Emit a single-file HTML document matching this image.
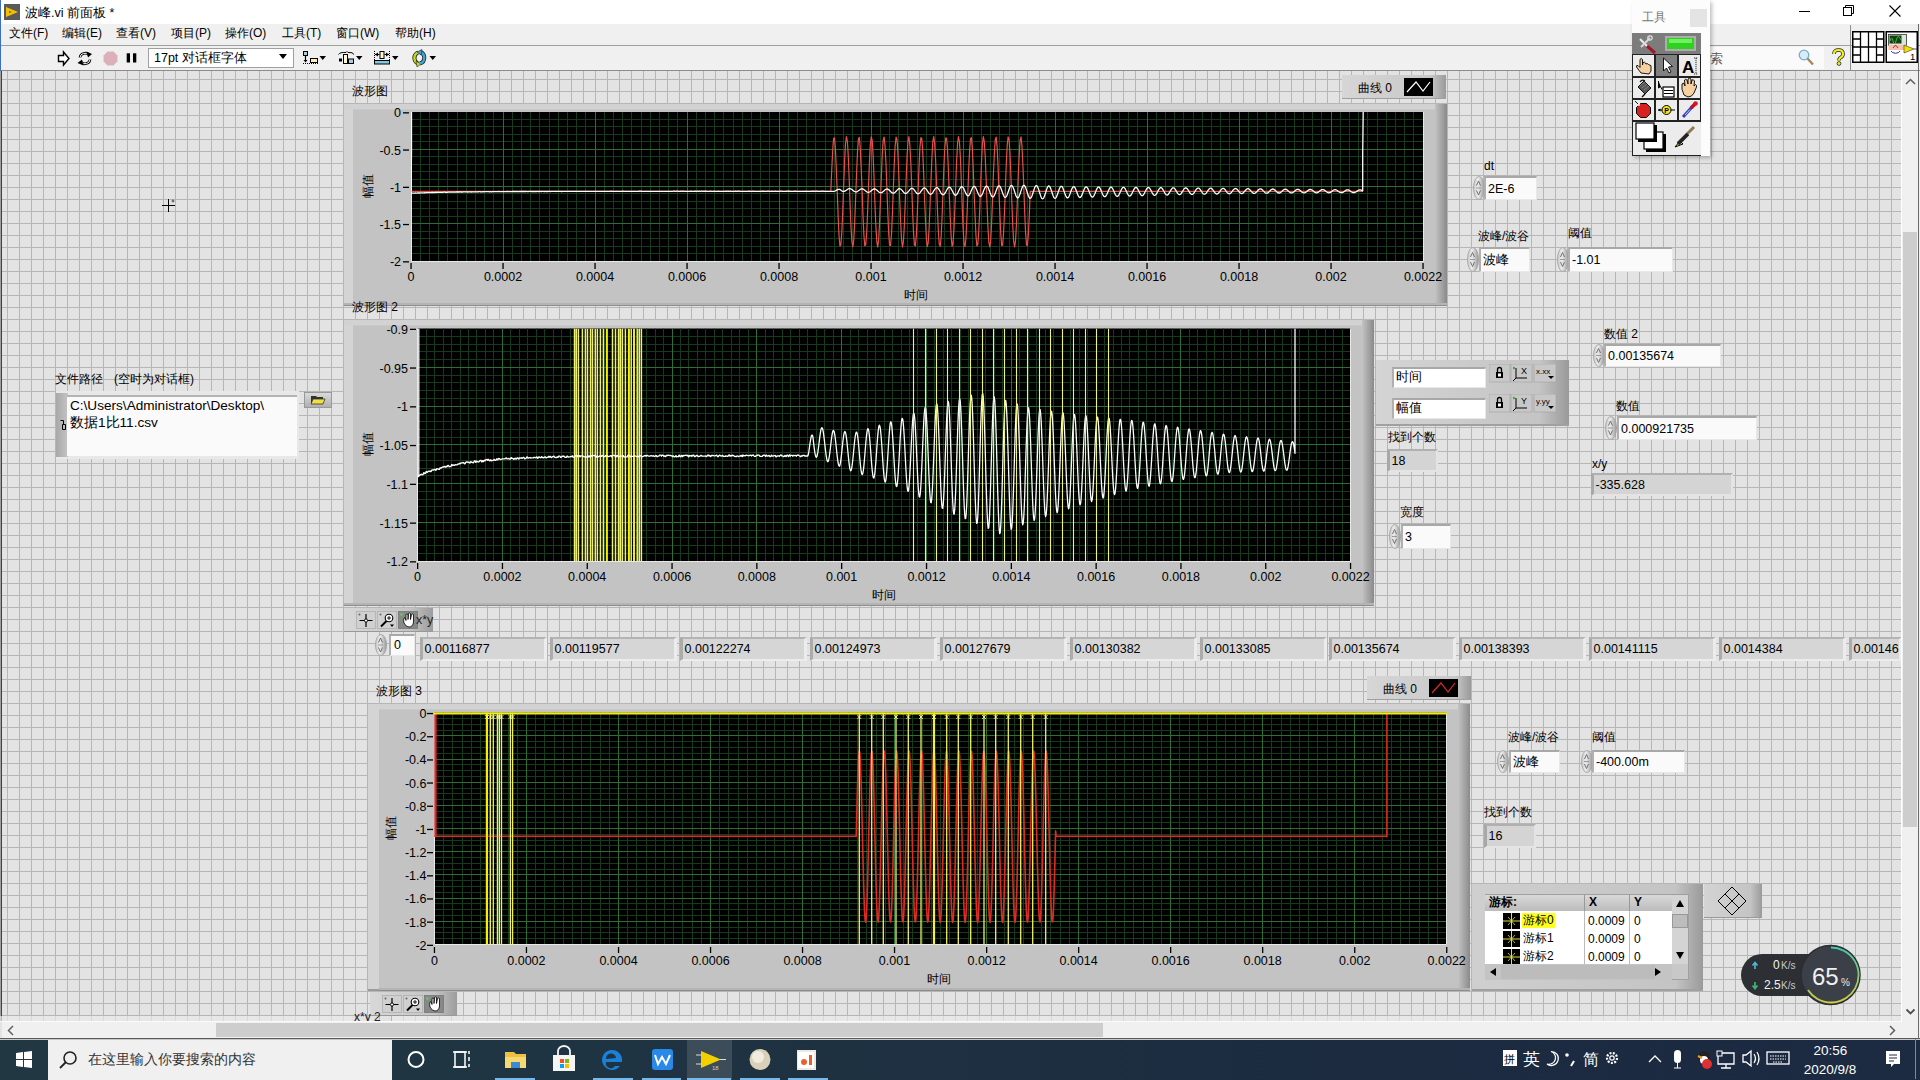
<!DOCTYPE html><html><head><meta charset="utf-8"><style>
*{box-sizing:border-box}
body{margin:0;width:1920px;height:1080px;overflow:hidden;position:relative;font-family:"Liberation Sans",sans-serif;background:#e3e3e3;color:#000}
.a{position:absolute}
.t{position:absolute;white-space:nowrap;font-size:13px;line-height:15px}
svg text{font-family:"Liberation Sans",sans-serif}
.num{position:absolute;background:#fafafa;border-top:2px solid #a8a8a8;border-left:2px solid #b0b0b0;border-right:1px solid #e8e8e8;border-bottom:1px solid #e8e8e8;font-size:12.5px;line-height:20px;padding-left:2px;white-space:nowrap}
.ind{position:absolute;background:#d4d4d4;border-top:2px solid #b0b0b0;border-left:3px solid #a8a8a8;border-right:2px solid #e4e4e4;border-bottom:2px solid #e4e4e4;font-size:12.5px;line-height:20px;padding-left:1.5px;white-space:nowrap}
.spin{position:absolute;width:11px;border-radius:6px/12px;background:linear-gradient(90deg,#b8b8b8,#e8e8e8 45%,#a8a8a8);}
</style></head><body>

<div class="a" style="left:0;top:71px;width:1920px;height:951px;background-color:#e3e3e3;background-image:linear-gradient(90deg,#b6b6b6 1px,transparent 1px),linear-gradient(180deg,#b6b6b6 1px,transparent 1px);background-size:12px 12px;background-position:7px 8px"></div>
<div class="a" style="left:0;top:71px;width:1px;height:951px;background:#a0a0a0"></div><div class="a" style="left:1px;top:71px;width:1px;height:951px;background:#404040"></div>
<div class="a" style="left:0;top:0;width:1920px;height:24px;background:#fff"></div>
<div class="a" style="left:0;top:0;width:1px;height:71px;background:#3b6fc4"></div>
<div class="a" style="left:4px;top:4px;width:16px;height:16px;background:#5a5a5a"></div>
<svg class="a" style="left:4px;top:4px" width="16" height="16"><path d="M2 3L14 8L2 13Z" fill="#f2c200"/><path d="M5 7L8 8L5 9Z" fill="#6a5a00"/></svg>
<div class="t" style="left:25px;top:6px;font-size:12.5px">波峰.vi 前面板 *</div>
<div class="a" style="left:1799px;top:11px;width:11px;height:1px;background:#000"></div>
<svg class="a" style="left:1843px;top:5px" width="12" height="12"><rect x="0.5" y="2.5" width="8" height="8" fill="none" stroke="#000"/><path d="M2.5 2.5V0.5H10.5V8.5H8.5" fill="none" stroke="#000"/></svg>
<svg class="a" style="left:1889px;top:5px" width="12" height="12"><path d="M0.5 0.5L11.5 11.5M11.5 0.5L0.5 11.5" stroke="#000" stroke-width="1.1"/></svg>
<div class="a" style="left:1px;top:24px;width:1919px;height:21px;background:#f0f0f0"></div>
<div class="t" style="left:9px;top:26px;font-size:12px">文件(F)</div>
<div class="t" style="left:62px;top:26px;font-size:12px">编辑(E)</div>
<div class="t" style="left:116px;top:26px;font-size:12px">查看(V)</div>
<div class="t" style="left:171px;top:26px;font-size:12px">项目(P)</div>
<div class="t" style="left:225px;top:26px;font-size:12px">操作(O)</div>
<div class="t" style="left:282px;top:26px;font-size:12px">工具(T)</div>
<div class="t" style="left:336px;top:26px;font-size:12px">窗口(W)</div>
<div class="t" style="left:395px;top:26px;font-size:12px">帮助(H)</div>
<div class="a" style="left:1px;top:45px;width:1919px;height:1px;background:#a0a0a0"></div>
<div class="a" style="left:1px;top:46px;width:1919px;height:24px;background:#f0f0f0"></div>
<div class="a" style="left:1px;top:70px;width:1919px;height:1px;background:#8c8c8c"></div>
<svg class="a" style="left:0;top:46px" width="440" height="24"><path d="M58.5 9.5H63.5V6L69 12.5L63.5 19V15.5H58.5Z" fill="#fff" stroke="#000" stroke-width="1.4" stroke-linejoin="miter"/><path d="M80 11.5 A5 4.5 0 0 1 89 9" fill="none" stroke="#000" stroke-width="2.6"/><path d="M80 11.5 A5 4.5 0 0 1 89 9" fill="none" stroke="#fff" stroke-width="1"/><path d="M86.5 5.5L92 8L88 11.5Z" fill="#000"/><path d="M90 13.5 A5 4.5 0 0 1 81 16" fill="none" stroke="#000" stroke-width="2.6"/><path d="M90 13.5 A5 4.5 0 0 1 81 16" fill="none" stroke="#fff" stroke-width="1"/><path d="M83.5 19.5L77.5 17L82 13.5Z" fill="#000"/><path d="M107.5 5.5H113.5L117.5 9.5V15.5L113.5 19.5H107.5L103.5 15.5V9.5Z" fill="#dcb0b8" stroke="#e4d4d6" stroke-width="1"/><rect x="126.7" y="7.3" width="3.3" height="9.2" fill="#000"/><rect x="133" y="7.3" width="3.3" height="9.2" fill="#000"/><rect x="303.5" y="5.5" width="4" height="4" fill="#a8d0e0" stroke="#000"/><path d="M305.5 10V15" stroke="#000" stroke-width="1.2"/><path d="M303.5 14H307.5L305.5 16.5Z" fill="#000"/><path d="M303 17.5H319" stroke="#000" stroke-dasharray="1 1"/><rect x="310.5" y="12.5" width="7" height="4" fill="#f8f0b0" stroke="#000"/><path d="M319.5 10H326L322.75 14Z" fill="#000"/><path d="M338.5 8.5Q340 6 346 6.5L347 5.5L348 6.5Q353 6 354 8.5" stroke="#000" fill="none"/><rect x="339" y="12.5" width="3" height="3" fill="#000"/><rect x="343.5" y="8.5" width="4" height="9" fill="#fff8d0" stroke="#000"/><rect x="348.5" y="13" width="5" height="4.5" fill="#a8d0e0" stroke="#000"/><path d="M356 10H362.5L359.25 14Z" fill="#000"/><path d="M374.5 5V16M389.5 5V16" stroke="#000" stroke-dasharray="1 1"/><path d="M375 8.5H379.5M384.5 8.5H389" stroke="#000" stroke-width="1.2"/><path d="M375 8.5L378 6.5V10.5Z M389 8.5L386 6.5V10.5Z" fill="#000"/><rect x="380" y="5.5" width="4" height="7" fill="#fff8d0" stroke="#000"/><rect x="374.5" y="14.5" width="15" height="3.5" fill="#80c8e0" stroke="#000"/><path d="M392 10H398.5L395.25 14Z" fill="#000"/><path d="M418 6.5 A6 6 0 0 0 418 17.5" fill="none" stroke="#222" stroke-width="4"/><path d="M418 6.5 A6 6 0 0 0 418 17.5" fill="none" stroke="#c8d820" stroke-width="2.4"/><path d="M416 15L421 18L417 21Z" fill="#c8d820" stroke="#222" stroke-width="0.6"/><path d="M420 6 A6 6 0 0 1 420 17.5" fill="none" stroke="#222" stroke-width="4"/><path d="M420 6 A6 6 0 0 1 420 17.5" fill="none" stroke="#40a8d0" stroke-width="2.4"/><path d="M422 3.5L417 6L421 9Z" fill="#40a8d0" stroke="#222" stroke-width="0.6"/><path d="M429.5 10H436L432.75 14Z" fill="#000"/></svg>
<div class="a" style="left:148px;top:48px;width:146px;height:20px;background:#fff;border:1px solid #a0a0a0"></div>
<div class="t" style="left:154px;top:51px;font-size:12.5px">17pt 对话框字体</div>
<svg class="a" style="left:279px;top:54px" width="9" height="6"><path d="M0 0H8L4 5Z" fill="#000"/></svg>
<div class="a" style="left:1700px;top:47px;width:124px;height:22px;background:#fafafa"></div>
<div class="t" style="left:1710px;top:51px;color:#555">索</div>
<svg class="a" style="left:1796px;top:48px" width="20" height="20"><circle cx="8" cy="7" r="4.8" fill="#d8ecf8" stroke="#7aaccc" stroke-width="1.3"/><path d="M11.5 10.5L17 16.5" stroke="#a08860" stroke-width="2.4"/></svg>
<svg class="a" style="left:1830px;top:48px" width="16" height="19"><path d="M4 6 Q4 2 8.5 2 Q13 2 13 6 Q13 8.5 10 10 Q9 10.8 9 12.5" fill="none" stroke="#222" stroke-width="3.6"/><path d="M4 6 Q4 2 8.5 2 Q13 2 13 6 Q13 8.5 10 10 Q9 10.8 9 12.5" fill="none" stroke="#f0f020" stroke-width="2.2"/><circle cx="9" cy="15.5" r="1.9" fill="#f0f020" stroke="#222" stroke-width="0.8"/></svg>
<div class="a" style="left:1850px;top:25px;width:1px;height:46px;background:#909090"></div>
<svg class="a" style="left:1852px;top:31px" width="68" height="33"><rect x="0.75" y="0.75" width="31" height="30.5" fill="#fff" stroke="#000" stroke-width="1.5"/><path d="M8.5 1V31M16.5 1V31M24.5 1V31M1 16H32M1 8H8.5M1 24H8.5M24.5 8H32M24.5 24H32" stroke="#000" stroke-width="1.3"/><rect x="34.25" y="0.75" width="31" height="30.5" fill="#fff" stroke="#000" stroke-width="1.5"/><rect x="36.5" y="3.5" width="18" height="11" fill="#d8e8d8" stroke="#333" stroke-width="0.8"/><rect x="37.5" y="4.5" width="12" height="8" fill="#1a3a1a"/><path d="M38 10 Q39.5 4 41 10 T44 10 T47 6 T49 9" stroke="#3c3" stroke-width="0.9" fill="none"/><rect x="36.5" y="14" width="18" height="5" fill="#f4c0b0"/><path d="M39 20 A5 4 0 0 0 48 20" stroke="#3030a0" stroke-width="1" fill="none"/><path d="M41 17 L43.5 14 L46 17" stroke="#d02020" stroke-width="1" fill="none"/><path d="M52 14L62 18L52 22Z" fill="#f2e200" stroke="#333" stroke-width="0.6"/><path d="M62 18H65" stroke="#333" stroke-width="0.8"/><text x="58" y="28.5" font-size="9.5" font-family="Liberation Sans">1</text></svg>
<div class="a" style="left:1632px;top:0;width:78px;height:156px;background:#fcfcfc;box-shadow:2px 2px 4px rgba(0,0,0,0.25)"></div>
<div class="t" style="left:1642px;top:9.5px;color:#777;font-size:12px">工具</div>
<div class="a" style="left:1690px;top:9px;width:17px;height:18px;background:#e4e4e4"></div>
<svg class="a" style="left:1632px;top:33px" width="70" height="123"><rect x="0" y="0" width="69" height="123" fill="#222"/><rect x="0" y="0" width="69" height="21" fill="#7c7c7c"/><path d="M8 6L19 17" stroke="#e8e8e8" stroke-width="2.2"/><path d="M18 5L9 14" stroke="#d8d8d8" stroke-width="2"/><circle cx="18" cy="5" r="2.2" fill="none" stroke="#e0e0e0" stroke-width="1.2"/><path d="M15 13L23 20" stroke="#a01828" stroke-width="3.2"/><rect x="33" y="3" width="31" height="15" fill="#a8b0a8"/><rect x="35" y="5" width="27" height="11" fill="#30d020"/><rect x="37" y="6" width="23" height="4" fill="#70f060"/><rect x="1" y="22" width="21" height="21" fill="#ececec"/><rect x="24" y="22" width="21" height="21" fill="#808080"/><rect x="47" y="22" width="21" height="21" fill="#ececec"/><rect x="1" y="45" width="21" height="20" fill="#ececec"/><rect x="24" y="45" width="21" height="20" fill="#ececec"/><rect x="47" y="45" width="21" height="20" fill="#ececec"/><rect x="1" y="67" width="21" height="20" fill="#ececec"/><rect x="24" y="67" width="21" height="20" fill="#ececec"/><rect x="47" y="67" width="21" height="20" fill="#ececec"/><rect x="1" y="89" width="68" height="33" fill="#ececec"/><path d="M9 40 L4.5 34 Q4 32 6 32.5 L8 34.5 L8 26.5 Q9 24.5 10.5 26.5 L10.5 32 L11 29.5 Q12.5 28.5 13.5 30 L14 31 Q15.5 30 16.5 31.5 L17 32 Q18.5 31.5 19 33 L19 38 L17 41 Z" fill="#f6d0a0" stroke="#000" stroke-width="0.9"/><path d="M31.5 25 L31.5 38 L34.5 35 L37 40 L39 39 L36.5 34 L40.5 33.5Z" fill="#fff" stroke="#000" stroke-width="0.9"/><text x="50" y="40" font-size="17" font-family="Liberation Serif" font-weight="bold">A</text><path d="M64 25V41M62 25H66M62 41H66" stroke="#000" stroke-width="0.8" stroke-dasharray="1.2 0.8"/><path d="M6 54L12 48L19 55L13 61Z" fill="#555" stroke="#111" stroke-width="1"/><path d="M8 53L13 49M10 55L15 51M12 57L17 53" stroke="#999" stroke-width="0.7"/><path d="M8 49Q10 46 13 48" stroke="#111" stroke-width="1.2" fill="none"/><path d="M13 61L10 64" stroke="#111" stroke-width="1.5"/><path d="M26.5 48 L26.5 55 L28.5 53.5 L30 56.5" fill="#000" stroke="#000" stroke-width="1"/><rect x="31" y="54" width="11" height="10" fill="#fff" stroke="#000" stroke-width="1.2"/><path d="M32 57.5H41M32 60.5H41" stroke="#000" stroke-width="1.2"/><path d="M52 62 Q49 56 50 51 L51.5 50 L53 53 L52.5 47 Q53.5 45.5 55 47 L56 51 L56 46 Q57.5 44.5 59 46 L59 51 L60 47 Q61.5 46 62.5 48 L62 53 L63.5 51.5 Q65 52 64.5 54 L62 60 Q60 64 56 64Z" fill="#f6d0a0" stroke="#000" stroke-width="0.9"/><path d="M8.5 70.5H14.5L18.5 74.5V80.5L14.5 84.5H8.5L4.5 80.5V74.5Z" fill="#d82020" stroke="#000" stroke-width="1"/><path d="M6 72.5H7.5V71" fill="none" stroke="#fff" stroke-width="0.8"/><path d="M3 68L6 71" stroke="#000" stroke-width="0.9"/><path d="M26 77H43" stroke="#000" stroke-width="1"/><path d="M26 77L28.5 75.5V78.5Z" fill="#000"/><circle cx="34.5" cy="77" r="4.5" fill="#f0e820" stroke="#000" stroke-width="1"/><text x="32.2" y="80" font-size="7" font-weight="bold">P</text><path d="M51 84 L60 74" stroke="#3040c0" stroke-width="3"/><path d="M53 82L58 76.5" stroke="#c8c8f0" stroke-width="1"/><path d="M59 75L63 71" stroke="#c01020" stroke-width="3.5"/><circle cx="63.5" cy="70.5" r="2.3" fill="#d01828"/><rect x="14" y="101" width="20" height="18" fill="#000"/><rect x="12" y="99" width="19" height="17" fill="#fff" stroke="#000" stroke-width="1.2"/><rect x="6" y="92" width="19" height="17" fill="#000"/><rect x="4" y="90" width="18" height="16" fill="#fff" stroke="#000" stroke-width="1.2"/><path d="M46 110 L62 94" stroke="#8a7a50" stroke-width="3"/><path d="M43 114 L48 108 L51 111Z" fill="#e8e840" stroke="#000" stroke-width="1"/><path d="M46 111L56 101" stroke="#222" stroke-width="3.5"/></svg>
<svg class="a" style="left:0;top:0" width="1920" height="1080"><defs><linearGradient id="rbev" x1="0" x2="1"><stop offset="0" stop-color="#c3c3c3"/><stop offset="1" stop-color="#8a8a8a"/></linearGradient></defs><rect x="344" y="104" width="1103" height="202" fill="#c3c3c3"/><rect x="344" y="104" width="9" height="202" fill="#d4d4d4"/><rect x="344" y="104" width="1103" height="5" fill="#d2d2d2"/><rect x="353" y="109" width="1094" height="1" fill="#c9c9c9"/><rect x="1435" y="104" width="12" height="202" fill="url(#rbev)"/><rect x="344" y="303" width="1103" height="2" fill="#b4b4b4"/><rect x="344" y="305" width="1103" height="1" fill="#8e8e8e"/><rect x="411" y="112" width="1012.00" height="149.00" fill="#000"/><path d="M420.5 112V261M429.5 112V261M438.5 112V261M447.5 112V261M457.5 112V261M466.5 112V261M475.5 112V261M484.5 112V261M493.5 112V261M512.5 112V261M521.5 112V261M530.5 112V261M539.5 112V261M549.5 112V261M558.5 112V261M567.5 112V261M576.5 112V261M585.5 112V261M604.5 112V261M613.5 112V261M622.5 112V261M631.5 112V261M641.5 112V261M650.5 112V261M659.5 112V261M668.5 112V261M677.5 112V261M696.5 112V261M705.5 112V261M714.5 112V261M723.5 112V261M733.5 112V261M742.5 112V261M751.5 112V261M760.5 112V261M769.5 112V261M788.5 112V261M797.5 112V261M806.5 112V261M815.5 112V261M825.5 112V261M834.5 112V261M843.5 112V261M852.5 112V261M861.5 112V261M880.5 112V261M889.5 112V261M898.5 112V261M907.5 112V261M917.5 112V261M926.5 112V261M935.5 112V261M944.5 112V261M953.5 112V261M972.5 112V261M981.5 112V261M990.5 112V261M999.5 112V261M1009.5 112V261M1018.5 112V261M1027.5 112V261M1036.5 112V261M1045.5 112V261M1064.5 112V261M1073.5 112V261M1082.5 112V261M1091.5 112V261M1101.5 112V261M1110.5 112V261M1119.5 112V261M1128.5 112V261M1137.5 112V261M1156.5 112V261M1165.5 112V261M1174.5 112V261M1183.5 112V261M1193.5 112V261M1202.5 112V261M1211.5 112V261M1220.5 112V261M1229.5 112V261M1248.5 112V261M1257.5 112V261M1266.5 112V261M1275.5 112V261M1285.5 112V261M1294.5 112V261M1303.5 112V261M1312.5 112V261M1321.5 112V261M1340.5 112V261M1349.5 112V261M1358.5 112V261M1367.5 112V261M1377.5 112V261M1386.5 112V261M1395.5 112V261M1404.5 112V261M1413.5 112V261M411 119.5H1423M411 126.5H1423M411 134.5H1423M411 141.5H1423M411 156.5H1423M411 164.5H1423M411 171.5H1423M411 179.5H1423M411 193.5H1423M411 201.5H1423M411 208.5H1423M411 216.5H1423M411 231.5H1423M411 238.5H1423M411 246.5H1423M411 253.5H1423" stroke="#163a1c" stroke-width="1" fill="none"/><path d="M503.5 112V261M595.5 112V261M687.5 112V261M779.5 112V261M871.5 112V261M963.5 112V261M1055.5 112V261M1147.5 112V261M1239.5 112V261M1331.5 112V261M411 149.5H1423M411 186.5H1423M411 223.5H1423" stroke="#2c6e34" stroke-width="1" fill="none"/><path d="M411.5 112V261.5H1423.5V112" stroke="#e8e8e8" fill="none" stroke-width="1"/><g font-size="12.5px"><text x="411.0" y="281" text-anchor="middle">0</text><rect x="410.4" y="263" width="1.3" height="6" fill="#000"/><text x="503.0" y="281" text-anchor="middle">0.0002</text><rect x="502.4" y="263" width="1.3" height="6" fill="#000"/><text x="595.0" y="281" text-anchor="middle">0.0004</text><rect x="594.4" y="263" width="1.3" height="6" fill="#000"/><text x="687.0" y="281" text-anchor="middle">0.0006</text><rect x="686.4" y="263" width="1.3" height="6" fill="#000"/><text x="779.0" y="281" text-anchor="middle">0.0008</text><rect x="778.4" y="263" width="1.3" height="6" fill="#000"/><text x="871.0" y="281" text-anchor="middle">0.001</text><rect x="870.4" y="263" width="1.3" height="6" fill="#000"/><text x="963.0" y="281" text-anchor="middle">0.0012</text><rect x="962.4" y="263" width="1.3" height="6" fill="#000"/><text x="1055.0" y="281" text-anchor="middle">0.0014</text><rect x="1054.4" y="263" width="1.3" height="6" fill="#000"/><text x="1147.0" y="281" text-anchor="middle">0.0016</text><rect x="1146.4" y="263" width="1.3" height="6" fill="#000"/><text x="1239.0" y="281" text-anchor="middle">0.0018</text><rect x="1238.4" y="263" width="1.3" height="6" fill="#000"/><text x="1331.0" y="281" text-anchor="middle">0.002</text><rect x="1330.4" y="263" width="1.3" height="6" fill="#000"/><text x="1423.0" y="281" text-anchor="middle">0.0022</text><rect x="1422.4" y="263" width="1.3" height="6" fill="#000"/><text x="401" y="117.3" text-anchor="end">0</text><rect x="403" y="112.2" width="6" height="1.3" fill="#000"/><text x="401" y="154.6" text-anchor="end">-0.5</text><rect x="403" y="149.4" width="6" height="1.3" fill="#000"/><text x="401" y="191.8" text-anchor="end">-1</text><rect x="403" y="186.7" width="6" height="1.3" fill="#000"/><text x="401" y="229.1" text-anchor="end">-1.5</text><rect x="403" y="223.9" width="6" height="1.3" fill="#000"/><text x="401" y="266.3" text-anchor="end">-2</text><rect x="403" y="261.2" width="6" height="1.3" fill="#000"/></g><text x="916" y="299" font-size="12" text-anchor="middle">时间</text><text transform="translate(372,186) rotate(-90)" font-size="12" text-anchor="middle">幅值</text><clipPath id="c1"><rect x="411" y="112" width="1012" height="149"/></clipPath><g clip-path="url(#c1)"><polyline points="411.0,191.4 411.9,191.4 412.8,191.4 413.8,191.4 414.7,191.4 415.6,191.4 416.5,191.4 417.4,191.4 418.3,191.4 419.3,191.4 420.2,191.4 421.1,191.4 422.0,191.4 422.9,191.4 423.9,191.4 424.8,191.4 425.7,191.4 426.6,191.4 427.5,191.4 428.5,191.4 429.4,191.4 430.3,191.4 431.2,191.4 432.1,191.4 433.0,191.4 434.0,191.4 434.9,191.4 435.8,191.4 436.7,191.4 437.6,191.4 438.6,191.4 439.5,191.4 440.4,191.4 441.3,191.4 442.2,191.4 443.2,191.4 444.1,191.4 445.0,191.4 445.9,191.4 446.8,191.4 447.7,191.4 448.7,191.4 449.6,191.4 450.5,191.4 451.4,191.4 452.3,191.4 453.3,191.4 454.2,191.4 455.1,191.4 456.0,191.4 456.9,191.4 457.9,191.4 458.8,191.4 459.7,191.4 460.6,191.4 461.5,191.4 462.4,191.4 463.4,191.4 464.3,191.4 465.2,191.4 466.1,191.4 467.0,191.4 468.0,191.4 468.9,191.4 469.8,191.4 470.7,191.4 471.6,191.4 472.6,191.4 473.5,191.4 474.4,191.4 475.3,191.4 476.2,191.4 477.1,191.4 478.1,191.4 479.0,191.4 479.9,191.4 480.8,191.4 481.7,191.4 482.7,191.4 483.6,191.4 484.5,191.4 485.4,191.4 486.3,191.4 487.2,191.4 488.2,191.4 489.1,191.4 490.0,191.4 490.9,191.4 491.8,191.4 492.8,191.4 493.7,191.4 494.6,191.4 495.5,191.4 496.4,191.4 497.4,191.4 498.3,191.4 499.2,191.4 500.1,191.4 501.0,191.4 501.9,191.4 502.9,191.4 503.8,191.4 504.7,191.4 505.6,191.4 506.5,191.4 507.5,191.4 508.4,191.4 509.3,191.4 510.2,191.4 511.1,191.4 512.1,191.4 513.0,191.4 513.9,191.4 514.8,191.4 515.7,191.4 516.6,191.4 517.6,191.4 518.5,191.4 519.4,191.4 520.3,191.4 521.2,191.4 522.2,191.4 523.1,191.4 524.0,191.4 524.9,191.4 525.8,191.4 526.8,191.4 527.7,191.4 528.6,191.4 529.5,191.4 530.4,191.4 531.3,191.4 532.3,191.4 533.2,191.4 534.1,191.4 535.0,191.4 535.9,191.4 536.9,191.4 537.8,191.4 538.7,191.4 539.6,191.4 540.5,191.4 541.5,191.4 542.4,191.4 543.3,191.4 544.2,191.4 545.1,191.4 546.0,191.4 547.0,191.4 547.9,191.4 548.8,191.4 549.7,191.4 550.6,191.4 551.6,191.4 552.5,191.4 553.4,191.4 554.3,191.4 555.2,191.4 556.1,191.4 557.1,191.4 558.0,191.4 558.9,191.4 559.8,191.4 560.7,191.4 561.7,191.4 562.6,191.4 563.5,191.4 564.4,191.4 565.3,191.4 566.3,191.4 567.2,191.4 568.1,191.4 569.0,191.4 569.9,191.4 570.8,191.4 571.8,191.4 572.7,191.4 573.6,191.4 574.5,191.4 575.4,191.4 576.4,191.4 577.3,191.4 578.2,191.4 579.1,191.4 580.0,191.4 581.0,191.4 581.9,191.4 582.8,191.4 583.7,191.4 584.6,191.4 585.5,191.4 586.5,191.4 587.4,191.4 588.3,191.4 589.2,191.4 590.1,191.4 591.1,191.4 592.0,191.4 592.9,191.4 593.8,191.4 594.7,191.4 595.7,191.4 596.6,191.4 597.5,191.4 598.4,191.4 599.3,191.4 600.2,191.4 601.2,191.4 602.1,191.4 603.0,191.4 603.9,191.4 604.8,191.4 605.8,191.4 606.7,191.4 607.6,191.4 608.5,191.4 609.4,191.4 610.4,191.4 611.3,191.4 612.2,191.4 613.1,191.4 614.0,191.4 614.9,191.4 615.9,191.4 616.8,191.4 617.7,191.4 618.6,191.4 619.5,191.4 620.5,191.4 621.4,191.4 622.3,191.4 623.2,191.4 624.1,191.4 625.0,191.4 626.0,191.4 626.9,191.4 627.8,191.4 628.7,191.4 629.6,191.4 630.6,191.4 631.5,191.4 632.4,191.4 633.3,191.4 634.2,191.4 635.2,191.4 636.1,191.4 637.0,191.4 637.9,191.4 638.8,191.4 639.7,191.4 640.7,191.4 641.6,191.4 642.5,191.4 643.4,191.4 644.3,191.4 645.3,191.4 646.2,191.4 647.1,191.4 648.0,191.4 648.9,191.4 649.9,191.4 650.8,191.4 651.7,191.4 652.6,191.4 653.5,191.4 654.4,191.4 655.4,191.4 656.3,191.4 657.2,191.4 658.1,191.4 659.0,191.4 660.0,191.4 660.9,191.4 661.8,191.4 662.7,191.4 663.6,191.4 664.6,191.4 665.5,191.4 666.4,191.4 667.3,191.4 668.2,191.4 669.1,191.4 670.1,191.4 671.0,191.4 671.9,191.4 672.8,191.4 673.7,191.4 674.7,191.4 675.6,191.4 676.5,191.4 677.4,191.4 678.3,191.4 679.3,191.4 680.2,191.4 681.1,191.4 682.0,191.4 682.9,191.4 683.8,191.4 684.8,191.4 685.7,191.4 686.6,191.4 687.5,191.4 688.4,191.4 689.4,191.4 690.3,191.4 691.2,191.4 692.1,191.4 693.0,191.4 693.9,191.4 694.9,191.4 695.8,191.4 696.7,191.4 697.6,191.4 698.5,191.4 699.5,191.4 700.4,191.4 701.3,191.4 702.2,191.4 703.1,191.4 704.1,191.4 705.0,191.4 705.9,191.4 706.8,191.4 707.7,191.4 708.6,191.4 709.6,191.4 710.5,191.4 711.4,191.4 712.3,191.4 713.2,191.4 714.2,191.4 715.1,191.4 716.0,191.4 716.9,191.4 717.8,191.4 718.8,191.4 719.7,191.4 720.6,191.4 721.5,191.4 722.4,191.4 723.3,191.4 724.3,191.4 725.2,191.4 726.1,191.4 727.0,191.4 727.9,191.4 728.9,191.4 729.8,191.4 730.7,191.4 731.6,191.4 732.5,191.4 733.5,191.4 734.4,191.4 735.3,191.4 736.2,191.4 737.1,191.4 738.0,191.4 739.0,191.4 739.9,191.4 740.8,191.4 741.7,191.4 742.6,191.4 743.6,191.4 744.5,191.4 745.4,191.4 746.3,191.4 747.2,191.4 748.2,191.4 749.1,191.4 750.0,191.4 750.9,191.4 751.8,191.4 752.7,191.4 753.7,191.4 754.6,191.4 755.5,191.4 756.4,191.4 757.3,191.4 758.3,191.4 759.2,191.4 760.1,191.4 761.0,191.4 761.9,191.4 762.8,191.4 763.8,191.4 764.7,191.4 765.6,191.4 766.5,191.4 767.4,191.4 768.4,191.4 769.3,191.4 770.2,191.4 771.1,191.4 772.0,191.4 773.0,191.4 773.9,191.4 774.8,191.4 775.7,191.4 776.6,191.4 777.5,191.4 778.5,191.4 779.4,191.4 780.3,191.4 781.2,191.4 782.1,191.4 783.1,191.4 784.0,191.4 784.9,191.4 785.8,191.4 786.7,191.4 787.7,191.4 788.6,191.4 789.5,191.4 790.4,191.4 791.3,191.4 792.2,191.4 793.2,191.4 794.1,191.4 795.0,191.4 795.9,191.4 796.8,191.4 797.8,191.4 798.7,191.4 799.6,191.4 800.5,191.4 801.4,191.4 802.4,191.4 803.3,191.4 804.2,191.4 805.1,191.4 806.0,191.4 806.9,191.4 807.9,191.4 808.8,191.4 809.7,191.4 810.6,191.4 811.5,191.4 812.5,191.4 813.4,191.4 814.3,191.4 815.2,191.4 816.1,191.4 817.1,191.4 818.0,191.4 818.9,191.4 819.8,191.4 820.7,191.4 821.6,191.4 822.6,191.4 823.5,191.4 824.4,191.4 825.3,191.4 826.2,191.4 827.2,191.4 828.1,191.4 829.0,191.4 829.9,191.4 830.8,191.4 831.7,170.8 832.7,150.2 833.6,138.4 834.5,137.8 835.4,148.6 836.3,168.5 837.3,193.3 838.2,217.8 839.1,236.8 840.0,246.2 840.9,244.2 841.9,231.0 842.8,209.6 843.7,184.4 844.6,160.7 845.5,143.6 846.4,136.6 847.4,141.3 848.3,156.7 849.2,179.4 850.1,204.7 851.0,227.3 852.0,242.4 852.9,246.8 853.8,239.5 854.7,222.1 855.6,198.4 856.6,173.2 857.5,151.9 858.4,139.1 859.3,137.3 860.2,147.1 861.1,166.2 862.1,190.8 863.0,215.5 863.9,235.3 864.8,245.8 865.7,244.9 866.7,232.8 867.6,212.0 868.5,186.9 869.4,162.8 870.3,144.9 871.3,136.8 872.2,140.4 873.1,154.7 874.0,176.9 874.9,202.2 875.8,225.3 876.8,241.3 877.7,246.8 878.6,240.7 879.5,224.2 880.4,200.9 881.4,175.6 882.3,153.7 883.2,139.9 884.1,137.0 885.0,145.6 886.0,164.0 886.9,188.3 887.8,213.2 888.7,233.7 889.6,245.2 890.5,245.5 891.5,234.4 892.4,214.3 893.3,189.4 894.2,165.0 895.1,146.3 896.1,137.1 897.0,139.5 897.9,152.9 898.8,174.5 899.7,199.7 900.7,223.3 901.6,240.2 902.5,246.8 903.4,241.8 904.3,226.2 905.2,203.4 906.2,178.0 907.1,155.6 908.0,140.8 908.9,136.7 909.8,144.3 910.8,161.9 911.7,185.7 912.6,210.9 913.5,232.0 914.4,244.6 915.3,246.0 916.3,236.0 917.2,216.6 918.1,192.0 919.0,167.3 919.9,147.7 920.9,137.5 921.8,138.7 922.7,151.1 923.6,172.1 924.5,197.2 925.5,221.2 926.4,238.9 927.3,246.7 928.2,242.8 929.1,228.2 930.0,205.8 931.0,180.5 931.9,157.6 932.8,141.8 933.7,136.6 934.6,143.0 935.6,159.8 936.5,183.2 937.4,208.5 938.3,230.2 939.2,243.8 940.2,246.4 941.1,237.4 942.0,218.8 942.9,194.5 943.8,169.6 944.7,149.3 945.7,138.0 946.6,138.1 947.5,149.5 948.4,169.8 949.3,194.7 950.3,219.0 951.2,237.5 952.1,246.4 953.0,243.7 953.9,230.0 954.9,208.3 955.8,183.0 956.7,159.6 957.6,142.9 958.5,136.6 959.4,141.9 960.4,157.7 961.3,180.7 962.2,206.0 963.1,228.3 964.0,242.9 965.0,246.7 965.9,238.8 966.8,221.0 967.7,197.0 968.6,171.9 969.6,151.0 970.5,138.7 971.4,137.6 972.3,147.9 973.2,167.5 974.1,192.2 975.1,216.8 976.0,236.1 976.9,246.0 977.8,244.5 978.7,231.8 979.7,210.7 980.6,185.5 981.5,161.7 982.4,144.2 983.3,136.7 984.2,140.9 985.2,155.8 986.1,178.2 987.0,203.6 987.9,226.4 988.8,241.9 989.8,246.8 990.7,240.1 991.6,223.1 992.5,199.5 993.4,174.3 994.4,152.7 995.3,139.4 996.2,137.1 997.1,146.4 998.0,165.2 998.9,189.6 999.9,214.5 1000.8,234.5 1001.7,245.5 1002.6,245.2 1003.5,233.5 1004.5,213.0 1005.4,188.1 1006.3,163.8 1007.2,145.5 1008.1,136.9 1009.1,139.9 1010.0,153.9 1010.9,175.8 1011.8,201.1 1012.7,224.4 1013.6,240.8 1014.6,246.8 1015.5,241.2 1016.4,225.2 1017.3,202.0 1018.2,176.7 1019.2,154.6 1020.1,140.3 1021.0,136.8 1021.9,145.0 1022.8,163.0 1023.8,187.1 1024.7,212.2 1025.6,232.9 1026.5,244.9 1027.4,245.7 1028.3,235.1 1029.3,215.4 1030.2,191.4 1031.1,191.4 1032.0,191.4 1032.9,191.4 1033.9,191.4 1034.8,191.4 1035.7,191.4 1036.6,191.4 1037.5,191.4 1038.5,191.4 1039.4,191.4 1040.3,191.4 1041.2,191.4 1042.1,191.4 1043.0,191.4 1044.0,191.4 1044.9,191.4 1045.8,191.4 1046.7,191.4 1047.6,191.4 1048.6,191.4 1049.5,191.4 1050.4,191.4 1051.3,191.4 1052.2,191.4 1053.1,191.4 1054.1,191.4 1055.0,191.4 1055.9,191.4 1056.8,191.4 1057.7,191.4 1058.7,191.4 1059.6,191.4 1060.5,191.4 1061.4,191.4 1062.3,191.4 1063.3,191.4 1064.2,191.4 1065.1,191.4 1066.0,191.4 1066.9,191.4 1067.8,191.4 1068.8,191.4 1069.7,191.4 1070.6,191.4 1071.5,191.4 1072.4,191.4 1073.4,191.4 1074.3,191.4 1075.2,191.4 1076.1,191.4 1077.0,191.4 1078.0,191.4 1078.9,191.4 1079.8,191.4 1080.7,191.4 1081.6,191.4 1082.5,191.4 1083.5,191.4 1084.4,191.4 1085.3,191.4 1086.2,191.4 1087.1,191.4 1088.1,191.4 1089.0,191.4 1089.9,191.4 1090.8,191.4 1091.7,191.4 1092.7,191.4 1093.6,191.4 1094.5,191.4 1095.4,191.4 1096.3,191.4 1097.2,191.4 1098.2,191.4 1099.1,191.4 1100.0,191.4 1100.9,191.4 1101.8,191.4 1102.8,191.4 1103.7,191.4 1104.6,191.4 1105.5,191.4 1106.4,191.4 1107.4,191.4 1108.3,191.4 1109.2,191.4 1110.1,191.4 1111.0,191.4 1111.9,191.4 1112.9,191.4 1113.8,191.4 1114.7,191.4 1115.6,191.4 1116.5,191.4 1117.5,191.4 1118.4,191.4 1119.3,191.4 1120.2,191.4 1121.1,191.4 1122.0,191.4 1123.0,191.4 1123.9,191.4 1124.8,191.4 1125.7,191.4 1126.6,191.4 1127.6,191.4 1128.5,191.4 1129.4,191.4 1130.3,191.4 1131.2,191.4 1132.2,191.4 1133.1,191.4 1134.0,191.4 1134.9,191.4 1135.8,191.4 1136.7,191.4 1137.7,191.4 1138.6,191.4 1139.5,191.4 1140.4,191.4 1141.3,191.4 1142.3,191.4 1143.2,191.4 1144.1,191.4 1145.0,191.4 1145.9,191.4 1146.9,191.4 1147.8,191.4 1148.7,191.4 1149.6,191.4 1150.5,191.4 1151.4,191.4 1152.4,191.4 1153.3,191.4 1154.2,191.4 1155.1,191.4 1156.0,191.4 1157.0,191.4 1157.9,191.4 1158.8,191.4 1159.7,191.4 1160.6,191.4 1161.6,191.4 1162.5,191.4 1163.4,191.4 1164.3,191.4 1165.2,191.4 1166.1,191.4 1167.1,191.4 1168.0,191.4 1168.9,191.4 1169.8,191.4 1170.7,191.4 1171.7,191.4 1172.6,191.4 1173.5,191.4 1174.4,191.4 1175.3,191.4 1176.3,191.4 1177.2,191.4 1178.1,191.4 1179.0,191.4 1179.9,191.4 1180.8,191.4 1181.8,191.4 1182.7,191.4 1183.6,191.4 1184.5,191.4 1185.4,191.4 1186.4,191.4 1187.3,191.4 1188.2,191.4 1189.1,191.4 1190.0,191.4 1190.9,191.4 1191.9,191.4 1192.8,191.4 1193.7,191.4 1194.6,191.4 1195.5,191.4 1196.5,191.4 1197.4,191.4 1198.3,191.4 1199.2,191.4 1200.1,191.4 1201.1,191.4 1202.0,191.4 1202.9,191.4 1203.8,191.4 1204.7,191.4 1205.6,191.4 1206.6,191.4 1207.5,191.4 1208.4,191.4 1209.3,191.4 1210.2,191.4 1211.2,191.4 1212.1,191.4 1213.0,191.4 1213.9,191.4 1214.8,191.4 1215.8,191.4 1216.7,191.4 1217.6,191.4 1218.5,191.4 1219.4,191.4 1220.3,191.4 1221.3,191.4 1222.2,191.4 1223.1,191.4 1224.0,191.4 1224.9,191.4 1225.9,191.4 1226.8,191.4 1227.7,191.4 1228.6,191.4 1229.5,191.4 1230.5,191.4 1231.4,191.4 1232.3,191.4 1233.2,191.4 1234.1,191.4 1235.0,191.4 1236.0,191.4 1236.9,191.4 1237.8,191.4 1238.7,191.4 1239.6,191.4 1240.6,191.4 1241.5,191.4 1242.4,191.4 1243.3,191.4 1244.2,191.4 1245.2,191.4 1246.1,191.4 1247.0,191.4 1247.9,191.4 1248.8,191.4 1249.7,191.4 1250.7,191.4 1251.6,191.4 1252.5,191.4 1253.4,191.4 1254.3,191.4 1255.3,191.4 1256.2,191.4 1257.1,191.4 1258.0,191.4 1258.9,191.4 1259.8,191.4 1260.8,191.4 1261.7,191.4 1262.6,191.4 1263.5,191.4 1264.4,191.4 1265.4,191.4 1266.3,191.4 1267.2,191.4 1268.1,191.4 1269.0,191.4 1270.0,191.4 1270.9,191.4 1271.8,191.4 1272.7,191.4 1273.6,191.4 1274.5,191.4 1275.5,191.4 1276.4,191.4 1277.3,191.4 1278.2,191.4 1279.1,191.4 1280.1,191.4 1281.0,191.4 1281.9,191.4 1282.8,191.4 1283.7,191.4 1284.7,191.4 1285.6,191.4 1286.5,191.4 1287.4,191.4 1288.3,191.4 1289.2,191.4 1290.2,191.4 1291.1,191.4 1292.0,191.4 1292.9,191.4 1293.8,191.4 1294.8,191.4 1295.7,191.4 1296.6,191.4 1297.5,191.4 1298.4,191.4 1299.4,191.4 1300.3,191.4 1301.2,191.4 1302.1,191.4 1303.0,191.4 1303.9,191.4 1304.9,191.4 1305.8,191.4 1306.7,191.4 1307.6,191.4 1308.5,191.4 1309.5,191.4 1310.4,191.4 1311.3,191.4 1312.2,191.4 1313.1,191.4 1314.1,191.4 1315.0,191.4 1315.9,191.4 1316.8,191.4 1317.7,191.4 1318.6,191.4 1319.6,191.4 1320.5,191.4 1321.4,191.4 1322.3,191.4 1323.2,191.4 1324.2,191.4 1325.1,191.4 1326.0,191.4 1326.9,191.4 1327.8,191.4 1328.7,191.4 1329.7,191.4 1330.6,191.4 1331.5,191.4 1332.4,191.4 1333.3,191.4 1334.3,191.4 1335.2,191.4 1336.1,191.4 1337.0,191.4 1337.9,191.4 1338.9,191.4 1339.8,191.4 1340.7,191.4 1341.6,191.4 1342.5,191.4 1343.4,191.4 1344.4,191.4 1345.3,191.4 1346.2,191.4 1347.1,191.4 1348.0,191.4 1349.0,191.4 1349.9,191.4 1350.8,191.4 1351.7,191.4 1352.6,191.4 1353.6,191.4 1354.5,191.4 1355.4,191.4 1356.3,191.4 1357.2,191.4 1358.1,191.4 1359.1,191.4 1360.0,191.4 1360.9,191.4 1361.8,191.4 1362.7,191.4" fill="none" stroke="#e8504a" stroke-width="1.2" stroke-linejoin="round" /><polyline points="411.5,112.0 411.5,152.0 411.0,193.3 411.5,193.3 412.0,193.2 412.5,193.2 413.0,193.2 413.5,193.2 414.0,193.1 414.5,193.1 415.0,193.1 415.5,193.0 416.0,193.1 416.5,193.1 417.0,193.1 417.5,192.9 418.0,192.9 418.5,193.0 419.0,193.0 419.5,193.0 420.0,193.0 420.5,192.8 421.0,192.8 421.5,192.9 422.0,192.9 422.5,192.8 423.0,192.8 423.5,192.8 424.0,192.8 424.5,192.7 425.0,192.8 425.5,192.8 426.0,192.7 426.5,192.7 427.0,192.6 427.5,192.6 428.0,192.7 428.5,192.6 429.0,192.6 429.5,192.6 430.0,192.6 430.5,192.7 431.0,192.7 431.5,192.5 432.0,192.5 432.5,192.5 433.0,192.5 433.5,192.6 434.0,192.6 434.5,192.6 435.0,192.4 435.5,192.4 436.0,192.5 436.5,192.5 437.0,192.4 437.5,192.4 438.0,192.4 438.5,192.3 439.0,192.4 439.5,192.4 440.0,192.3 440.5,192.4 441.0,192.4 441.5,192.3 442.0,192.3 442.5,192.3 443.0,192.3 443.5,192.2 444.0,192.2 444.5,192.2 445.0,192.2 445.5,192.3 446.0,192.3 446.5,192.3 447.0,192.3 447.5,192.3 448.0,192.1 448.5,192.1 449.0,192.2 449.5,192.2 450.0,192.2 450.5,192.2 451.0,192.2 451.5,192.2 452.0,192.2 452.5,192.2 453.0,192.2 453.5,192.2 454.0,192.1 454.5,192.1 455.0,192.1 455.5,192.1 456.0,192.1 456.5,192.0 457.0,192.0 457.5,192.0 458.0,192.0 458.5,192.0 459.0,192.0 459.5,192.0 460.0,191.9 460.5,191.9 461.0,192.0 461.5,192.0 462.0,192.1 462.5,192.1 463.0,191.9 463.5,191.9 464.0,191.9 464.5,191.9 465.0,191.9 465.5,191.9 466.0,191.9 466.5,191.9 467.0,191.9 467.5,192.0 468.0,192.0 468.5,191.9 469.0,191.8 469.5,191.9 470.0,191.9 470.5,191.9 471.0,192.0 471.5,192.0 472.0,191.8 472.5,191.8 473.0,191.8 473.5,191.8 473.9,191.9 474.4,191.9 474.9,191.8 475.4,191.8 475.9,191.8 476.4,191.9 476.9,191.9 477.4,191.8 477.9,191.8 478.4,191.8 478.9,191.7 479.4,191.7 479.9,191.7 480.4,191.9 480.9,191.8 481.4,191.8 481.9,191.8 482.4,191.8 482.9,191.7 483.4,191.7 483.9,191.8 484.4,191.8 484.9,191.7 485.4,191.7 485.9,191.6 486.4,191.6 486.9,191.7 487.4,191.6 487.9,191.6 488.4,191.7 488.9,191.7 489.4,191.8 489.9,191.8 490.4,191.7 490.9,191.7 491.4,191.8 491.9,191.8 492.4,191.7 492.9,191.7 493.4,191.7 493.9,191.6 494.4,191.6 494.9,191.7 495.4,191.7 495.9,191.7 496.4,191.7 496.9,191.6 497.4,191.6 497.9,191.7 498.4,191.6 498.9,191.5 499.4,191.6 499.9,191.6 500.4,191.6 500.9,191.6 501.4,191.6 501.9,191.6 502.4,191.6 502.9,191.6 503.4,191.6 503.9,191.6 504.4,191.6 504.9,191.6 505.4,191.6 505.9,191.6 506.4,191.6 506.9,191.5 507.4,191.5 507.9,191.6 508.4,191.6 508.9,191.6 509.4,191.6 509.9,191.5 510.4,191.6 510.9,191.6 511.4,191.6 511.9,191.6 512.4,191.5 512.9,191.5 513.4,191.5 513.9,191.5 514.4,191.5 514.9,191.5 515.4,191.6 515.9,191.5 516.4,191.5 516.9,191.5 517.4,191.5 517.9,191.6 518.4,191.6 518.9,191.5 519.4,191.5 519.9,191.5 520.4,191.5 520.9,191.6 521.4,191.5 521.9,191.5 522.4,191.5 522.9,191.5 523.4,191.5 523.9,191.5 524.4,191.5 524.9,191.5 525.4,191.5 525.9,191.5 526.4,191.4 526.9,191.4 527.4,191.6 527.9,191.6 528.4,191.6 528.9,191.4 529.4,191.4 529.9,191.4 530.4,191.4 530.9,191.5 531.4,191.5 531.9,191.5 532.4,191.5 532.9,191.4 533.4,191.5 533.9,191.5 534.4,191.5 534.9,191.5 535.4,191.5 535.9,191.5 536.4,191.5 536.9,191.5 537.4,191.4 537.9,191.4 538.4,191.5 538.9,191.5 539.4,191.5 539.9,191.4 540.4,191.4 540.9,191.5 541.4,191.5 541.9,191.4 542.4,191.4 542.9,191.4 543.4,191.4 543.9,191.5 544.4,191.5 544.9,191.5 545.4,191.4 545.9,191.4 546.4,191.5 546.9,191.5 547.4,191.5 547.9,191.5 548.4,191.4 548.9,191.4 549.4,191.4 549.9,191.4 550.4,191.5 550.9,191.4 551.4,191.4 551.9,191.4 552.4,191.4 552.9,191.3 553.4,191.3 553.9,191.4 554.4,191.4 554.9,191.3 555.4,191.3 555.9,191.5 556.4,191.4 556.9,191.4 557.4,191.4 557.9,191.4 558.4,191.3 558.9,191.3 559.4,191.4 559.9,191.4 560.4,191.4 560.9,191.4 561.4,191.5 561.9,191.5 562.4,191.4 562.9,191.4 563.4,191.4 563.9,191.3 564.4,191.3 564.9,191.3 565.4,191.3 565.9,191.4 566.4,191.4 566.9,191.4 567.4,191.4 567.9,191.3 568.4,191.4 568.9,191.4 569.4,191.3 569.9,191.3 570.4,191.4 570.9,191.4 571.4,191.4 571.9,191.4 572.4,191.4 572.9,191.4 573.4,191.3 573.9,191.4 574.4,191.4 574.9,191.4 575.4,191.4 575.9,191.4 576.4,191.4 576.9,191.4 577.4,191.4 577.9,191.4 578.4,191.4 578.9,191.3 579.4,191.4 579.9,191.4 580.4,191.4 580.9,191.4 581.4,191.3 581.9,191.3 582.4,191.3 582.9,191.3 583.4,191.3 583.9,191.3 584.4,191.4 584.9,191.4 585.4,191.3 585.9,191.3 586.4,191.3 586.9,191.4 587.4,191.4 587.9,191.3 588.4,191.3 588.9,191.3 589.4,191.3 589.9,191.3 590.4,191.3 590.9,191.3 591.4,191.4 591.9,191.4 592.4,191.4 592.9,191.4 593.4,191.4 593.9,191.4 594.4,191.4 594.9,191.4 595.4,191.3 595.9,191.3 596.4,191.4 596.9,191.3 597.4,191.3 597.9,191.4 598.4,191.4 598.8,191.3 599.3,191.3 599.8,191.3 600.3,191.3 600.8,191.3 601.3,191.3 601.8,191.3 602.3,191.3 602.8,191.3 603.3,191.3 603.8,191.3 604.3,191.4 604.8,191.4 605.3,191.3 605.8,191.3 606.3,191.4 606.8,191.4 607.3,191.4 607.8,191.4 608.3,191.3 608.8,191.3 609.3,191.3 609.8,191.3 610.3,191.3 610.8,191.2 611.3,191.2 611.8,191.3 612.3,191.3 612.8,191.4 613.3,191.4 613.8,191.4 614.3,191.3 614.8,191.3 615.3,191.3 615.8,191.3 616.3,191.3 616.8,191.3 617.3,191.3 617.8,191.3 618.3,191.4 618.8,191.4 619.3,191.3 619.8,191.3 620.3,191.3 620.8,191.4 621.3,191.4 621.8,191.3 622.3,191.3 622.8,191.2 623.3,191.2 623.8,191.3 624.3,191.3 624.8,191.3 625.3,191.3 625.8,191.4 626.3,191.3 626.8,191.3 627.3,191.3 627.8,191.3 628.3,191.4 628.8,191.4 629.3,191.4 629.8,191.4 630.3,191.4 630.8,191.4 631.3,191.3 631.8,191.3 632.3,191.3 632.8,191.3 633.3,191.3 633.8,191.3 634.3,191.3 634.8,191.4 635.3,191.4 635.8,191.4 636.3,191.4 636.8,191.4 637.3,191.4 637.8,191.4 638.3,191.4 638.8,191.4 639.3,191.2 639.8,191.2 640.3,191.2 640.8,191.2 641.3,191.4 641.8,191.4 642.3,191.3 642.8,191.3 643.3,191.3 643.8,191.3 644.3,191.3 644.8,191.3 645.3,191.3 645.8,191.3 646.3,191.3 646.8,191.3 647.3,191.3 647.8,191.3 648.3,191.3 648.8,191.4 649.3,191.3 649.8,191.3 650.3,191.4 650.8,191.4 651.3,191.3 651.8,191.3 652.3,191.3 652.8,191.3 653.3,191.3 653.8,191.3 654.3,191.4 654.8,191.4 655.3,191.4 655.8,191.3 656.3,191.3 656.8,191.3 657.3,191.3 657.8,191.3 658.3,191.3 658.8,191.3 659.3,191.3 659.8,191.3 660.3,191.3 660.8,191.3 661.3,191.3 661.8,191.3 662.3,191.3 662.8,191.3 663.3,191.3 663.8,191.3 664.3,191.3 664.8,191.3 665.3,191.3 665.8,191.3 666.3,191.3 666.8,191.3 667.3,191.3 667.8,191.3 668.3,191.3 668.8,191.3 669.3,191.3 669.8,191.3 670.3,191.3 670.8,191.4 671.3,191.4 671.8,191.3 672.3,191.3 672.8,191.3 673.3,191.2 673.8,191.2 674.3,191.2 674.8,191.2 675.3,191.3 675.8,191.3 676.3,191.2 676.8,191.2 677.3,191.2 677.8,191.2 678.3,191.3 678.8,191.3 679.3,191.3 679.8,191.4 680.3,191.4 680.8,191.2 681.3,191.2 681.8,191.3 682.3,191.3 682.8,191.2 683.3,191.2 683.8,191.2 684.3,191.3 684.8,191.3 685.3,191.3 685.8,191.3 686.3,191.3 686.8,191.3 687.3,191.4 687.8,191.4 688.3,191.3 688.8,191.3 689.3,191.4 689.8,191.4 690.3,191.4 690.8,191.2 691.3,191.2 691.8,191.4 692.3,191.4 692.8,191.4 693.3,191.4 693.8,191.4 694.3,191.4 694.8,191.2 695.3,191.2 695.8,191.4 696.3,191.4 696.8,191.4 697.3,191.2 697.8,191.2 698.3,191.4 698.8,191.4 699.3,191.2 699.8,191.2 700.3,191.3 700.8,191.3 701.3,191.2 701.8,191.2 702.3,191.2 702.8,191.3 703.3,191.3 703.8,191.2 704.3,191.2 704.8,191.4 705.3,191.4 705.8,191.2 706.3,191.2 706.8,191.3 707.3,191.3 707.8,191.3 708.3,191.4 708.8,191.4 709.3,191.3 709.8,191.3 710.3,191.2 710.8,191.2 711.3,191.4 711.8,191.4 712.3,191.3 712.8,191.3 713.3,191.3 713.8,191.2 714.3,191.2 714.8,191.3 715.3,191.3 715.8,191.4 716.3,191.4 716.8,191.3 717.3,191.3 717.8,191.3 718.3,191.3 718.8,191.2 719.3,191.3 719.8,191.3 720.3,191.3 720.8,191.3 721.3,191.3 721.8,191.3 722.3,191.3 722.8,191.3 723.3,191.3 723.8,191.3 724.2,191.4 724.7,191.3 725.2,191.3 725.7,191.2 726.2,191.2 726.7,191.3 727.2,191.3 727.7,191.2 728.2,191.2 728.7,191.4 729.2,191.4 729.7,191.3 730.2,191.2 730.7,191.2 731.2,191.3 731.7,191.3 732.2,191.3 732.7,191.3 733.2,191.3 733.7,191.3 734.2,191.3 734.7,191.3 735.2,191.2 735.7,191.2 736.2,191.4 736.7,191.4 737.2,191.4 737.7,191.2 738.2,191.2 738.7,191.2 739.2,191.2 739.7,191.3 740.2,191.3 740.7,191.3 741.2,191.3 741.7,191.3 742.2,191.3 742.7,191.3 743.2,191.3 743.7,191.3 744.2,191.3 744.7,191.3 745.2,191.3 745.7,191.3 746.2,191.3 746.7,191.3 747.2,191.3 747.7,191.3 748.2,191.3 748.7,191.2 749.2,191.2 749.7,191.3 750.2,191.3 750.7,191.3 751.2,191.3 751.7,191.3 752.2,191.3 752.7,191.2 753.2,191.2 753.7,191.3 754.2,191.3 754.7,191.3 755.2,191.3 755.7,191.3 756.2,191.4 756.7,191.4 757.2,191.3 757.7,191.3 758.2,191.3 758.7,191.3 759.2,191.4 759.7,191.3 760.2,191.3 760.7,191.3 761.2,191.3 761.7,191.2 762.2,191.2 762.7,191.4 763.2,191.4 763.7,191.2 764.2,191.2 764.7,191.3 765.2,191.3 765.7,191.3 766.2,191.3 766.7,191.3 767.2,191.2 767.7,191.2 768.2,191.2 768.7,191.2 769.2,191.3 769.7,191.3 770.2,191.3 770.7,191.3 771.2,191.3 771.7,191.2 772.2,191.2 772.7,191.3 773.2,191.3 773.7,191.3 774.2,191.3 774.7,191.2 775.2,191.2 775.7,191.3 776.2,191.3 776.7,191.3 777.2,191.3 777.7,191.3 778.2,191.3 778.7,191.3 779.2,191.3 779.7,191.3 780.2,191.2 780.7,191.2 781.2,191.2 781.7,191.2 782.2,191.3 782.7,191.3 783.2,191.3 783.7,191.3 784.2,191.3 784.7,191.3 785.2,191.3 785.7,191.3 786.2,191.3 786.7,191.2 787.2,191.2 787.7,191.2 788.2,191.2 788.7,191.3 789.2,191.2 789.7,191.2 790.2,191.3 790.7,191.3 791.2,191.3 791.7,191.3 792.2,191.3 792.7,191.3 793.2,191.4 793.7,191.4 794.2,191.4 794.7,191.2 795.2,191.2 795.7,191.3 796.2,191.3 796.7,191.3 797.2,191.3 797.7,191.3 798.2,191.3 798.7,191.3 799.2,191.3 799.7,191.4 800.2,191.3 800.7,191.3 801.2,191.3 801.7,191.3 802.2,191.3 802.7,191.3 803.2,191.3 803.7,191.3 804.2,191.3 804.7,191.3 805.2,191.2 805.7,191.3 806.2,191.3 806.7,191.3 807.2,191.3 807.7,191.4 808.2,191.4 808.7,191.3 809.2,191.3 809.7,191.3 810.2,191.3 810.7,191.4 811.2,191.4 811.7,191.2 812.2,191.2 812.7,191.2 813.2,191.4 813.7,191.4 814.2,191.2 814.7,191.2 815.2,191.3 815.7,191.3 816.2,191.2 816.7,191.2 817.2,191.2 817.7,191.3 818.2,191.3 818.7,191.3 819.2,191.3 819.7,191.3 820.2,191.3 820.7,191.2 821.2,191.2 821.7,191.3 822.2,191.3 822.7,191.2 823.2,191.2 823.7,191.2 824.2,191.3 824.7,191.3 825.2,191.3 825.7,191.3 826.2,191.4 826.7,191.4 827.2,191.3 827.7,191.3 828.2,191.3 828.7,191.3 829.2,191.3 829.7,191.3 830.2,191.3 830.7,191.3 831.2,191.3 831.7,191.3 832.2,191.3 832.7,191.3 833.2,191.3 833.7,191.3 834.2,191.3 834.7,191.2 835.2,191.0 835.7,190.7 836.2,190.4 836.7,190.1 837.2,189.8 837.7,189.6 838.2,189.4 838.7,189.3 839.2,189.3 839.7,189.4 840.2,189.7 840.7,190.1 841.2,190.5 841.7,190.8 842.2,191.1 842.7,191.3 843.2,191.4 843.7,191.4 844.2,191.4 844.7,191.2 845.2,190.9 845.7,190.6 846.2,190.3 846.7,189.9 847.2,189.6 847.7,189.2 848.2,189.0 848.7,188.7 849.2,188.6 849.6,188.6 850.1,188.6 850.6,188.8 851.1,189.0 851.6,189.3 852.1,189.7 852.6,190.1 853.1,190.5 853.6,190.9 854.1,191.2 854.6,191.5 855.1,191.7 855.6,191.8 856.1,191.8 856.6,191.8 857.1,191.6 857.6,191.3 858.1,191.0 858.6,190.6 859.1,190.3 859.6,189.9 860.1,189.5 860.6,189.2 861.1,189.0 861.6,188.9 862.1,188.8 862.6,188.9 863.1,189.1 863.6,189.3 864.1,189.7 864.6,190.0 865.1,190.5 865.6,190.9 866.1,191.3 866.6,191.7 867.1,192.0 867.6,192.2 868.1,192.3 868.6,192.3 869.1,192.2 869.6,192.0 870.1,191.7 870.6,191.3 871.1,190.9 871.6,190.5 872.1,190.1 872.6,189.7 873.1,189.4 873.6,189.1 874.1,189.0 874.6,189.0 875.1,189.0 875.6,189.2 876.1,189.5 876.6,189.9 877.1,190.3 877.6,190.8 878.1,191.2 878.6,191.7 879.1,192.1 879.6,192.4 880.1,192.6 880.6,192.7 881.1,192.7 881.6,192.6 882.1,192.4 882.6,192.0 883.1,191.6 883.6,191.2 884.1,190.7 884.6,190.3 885.1,189.8 885.6,189.5 886.1,189.2 886.6,189.1 887.1,189.0 887.6,189.1 888.1,189.3 888.6,189.6 889.1,190.0 889.6,190.5 890.1,191.0 890.6,191.5 891.1,192.0 891.6,192.4 892.1,192.8 892.6,193.0 893.1,193.1 893.6,193.1 894.1,192.9 894.6,192.6 895.1,192.2 895.6,191.7 896.1,191.2 896.6,190.7 897.1,190.1 897.6,189.6 898.1,189.2 898.6,188.9 899.1,188.7 899.6,188.7 900.1,188.8 900.6,189.0 901.1,189.4 901.6,189.9 902.1,190.4 902.6,191.0 903.1,191.6 903.6,192.2 904.1,192.7 904.6,193.1 905.1,193.3 905.6,193.4 906.1,193.4 906.6,193.2 907.1,192.8 907.6,192.4 908.1,191.8 908.6,191.2 909.1,190.6 909.6,189.9 910.1,189.4 910.6,188.9 911.1,188.6 911.6,188.4 912.1,188.4 912.6,188.5 913.1,188.8 913.6,189.2 914.1,189.8 914.6,190.4 915.1,191.1 915.6,191.8 916.1,192.4 916.6,193.0 917.1,193.4 917.6,193.7 918.1,193.8 918.6,193.7 919.1,193.5 919.6,193.1 920.1,192.6 920.6,191.9 921.1,191.2 921.6,190.5 922.1,189.8 922.6,189.1 923.1,188.6 923.6,188.2 924.1,188.0 924.6,188.0 925.1,188.2 925.6,188.6 926.1,189.1 926.6,189.7 927.1,190.5 927.6,191.3 928.1,192.0 928.6,192.7 929.1,193.4 929.6,193.8 930.1,194.1 930.6,194.3 931.1,194.2 931.6,193.9 932.1,193.4 932.6,192.8 933.1,192.0 933.6,191.2 934.1,190.4 934.6,189.6 935.1,188.9 935.6,188.3 936.1,187.9 936.6,187.7 937.1,187.7 937.6,187.9 938.1,188.4 938.6,189.0 939.1,189.7 939.6,190.5 940.1,191.4 940.6,192.3 941.1,193.1 941.6,193.8 942.1,194.3 942.6,194.6 943.1,194.7 943.6,194.6 944.1,194.3 944.6,193.7 945.1,193.0 945.6,192.1 946.1,191.2 946.6,190.2 947.1,189.3 947.6,188.5 948.1,187.9 948.6,187.4 949.1,187.2 949.6,187.2 950.1,187.5 950.6,188.0 951.1,188.7 951.6,189.6 952.1,190.5 952.6,191.5 953.1,192.5 953.6,193.5 954.1,194.2 954.6,194.8 955.1,195.2 955.6,195.3 956.1,195.1 956.6,194.7 957.1,194.0 957.6,193.2 958.1,192.2 958.6,191.1 959.1,190.0 959.6,189.0 960.1,188.1 960.6,187.4 961.1,186.9 961.6,186.6 962.1,186.7 962.6,187.0 963.1,187.6 963.6,188.4 964.1,189.4 964.6,190.6 965.1,191.7 965.6,192.8 966.1,193.9 966.6,194.7 967.1,195.4 967.6,195.7 968.1,195.8 968.6,195.6 969.1,195.1 969.6,194.3 970.1,193.4 970.6,192.3 971.1,191.1 971.6,189.9 972.1,188.7 972.6,187.8 973.1,187.0 973.6,186.5 974.1,186.3 974.5,186.4 975.0,186.8 975.5,187.5 976.0,188.4 976.5,189.5 977.0,190.7 977.5,192.0 978.0,193.2 978.5,194.3 979.0,195.3 979.5,195.9 980.0,196.3 980.5,196.4 981.0,196.1 981.5,195.5 982.0,194.7 982.5,193.6 983.0,192.4 983.5,191.1 984.0,189.8 984.5,188.6 985.0,187.6 985.5,186.8 986.0,186.3 986.5,186.1 987.0,186.2 987.5,186.7 988.0,187.4 988.5,188.4 989.0,189.7 989.5,191.0 990.0,192.4 990.5,193.7 991.0,194.8 991.5,195.8 992.0,196.5 992.5,196.9 993.0,196.9 993.5,196.6 994.0,195.9 994.5,195.0 995.0,193.8 995.5,192.5 996.0,191.1 996.5,189.7 997.0,188.4 997.5,187.4 998.0,186.5 998.5,186.0 999.0,185.8 999.5,186.0 1000.0,186.5 1000.5,187.3 1001.0,188.4 1001.5,189.7 1002.0,191.2 1002.5,192.6 1003.0,194.0 1003.5,195.3 1004.0,196.3 1004.5,197.0 1005.0,197.3 1005.5,197.3 1006.0,197.0 1006.5,196.2 1007.0,195.2 1007.5,193.9 1008.0,192.5 1008.5,191.0 1009.0,189.5 1009.5,188.2 1010.0,187.0 1010.5,186.2 1011.0,185.6 1011.5,185.5 1012.0,185.7 1012.5,186.3 1013.0,187.2 1013.5,188.4 1014.0,189.8 1014.5,191.3 1015.0,192.9 1015.5,194.4 1016.0,195.7 1016.5,196.7 1017.0,197.4 1017.5,197.8 1018.0,197.8 1018.5,197.3 1019.0,196.5 1019.5,195.4 1020.0,194.0 1020.5,192.5 1021.0,190.9 1021.5,189.4 1022.0,188.0 1022.5,186.8 1023.0,185.9 1023.5,185.4 1024.0,185.3 1024.5,185.6 1025.0,186.3 1025.5,187.3 1026.0,188.6 1026.5,190.1 1027.0,191.7 1027.5,193.3 1028.0,194.8 1028.5,196.2 1029.0,197.2 1029.5,198.0 1030.0,198.3 1030.5,198.2 1031.0,197.7 1031.5,196.9 1032.0,195.7 1032.5,194.3 1033.0,192.8 1033.5,191.2 1034.0,189.6 1034.5,188.2 1035.0,187.0 1035.5,186.2 1036.0,185.7 1036.5,185.6 1037.0,186.0 1037.5,186.7 1038.0,187.7 1038.5,189.1 1039.0,190.6 1039.5,192.3 1040.0,193.9 1040.5,195.4 1041.0,196.7 1041.5,197.8 1042.0,198.5 1042.5,198.8 1043.0,198.7 1043.5,198.1 1044.0,197.2 1044.5,196.0 1045.0,194.5 1045.5,193.0 1046.0,191.3 1046.5,189.8 1047.0,188.4 1047.5,187.3 1048.0,186.5 1048.5,186.0 1049.0,186.0 1049.5,186.3 1050.0,187.1 1050.5,188.1 1051.0,189.4 1051.5,190.9 1052.0,192.5 1052.5,194.0 1053.0,195.4 1053.5,196.6 1054.0,197.6 1054.5,198.2 1055.0,198.4 1055.5,198.2 1056.0,197.6 1056.5,196.8 1057.0,195.6 1057.5,194.2 1058.0,192.7 1058.5,191.2 1059.0,189.8 1059.5,188.5 1060.0,187.5 1060.5,186.7 1061.0,186.3 1061.5,186.3 1062.0,186.7 1062.5,187.4 1063.0,188.4 1063.5,189.7 1064.0,191.1 1064.5,192.5 1065.0,194.0 1065.5,195.3 1066.0,196.4 1066.5,197.2 1067.0,197.8 1067.5,197.9 1068.0,197.7 1068.5,197.2 1069.0,196.3 1069.5,195.2 1070.0,193.9 1070.5,192.5 1071.0,191.1 1071.5,189.8 1072.0,188.6 1072.5,187.7 1073.0,187.0 1073.5,186.7 1074.0,186.7 1074.5,187.1 1075.0,187.8 1075.5,188.7 1076.0,189.9 1076.5,191.2 1077.0,192.6 1077.5,193.9 1078.0,195.1 1078.5,196.1 1079.0,196.9 1079.5,197.4 1080.0,197.5 1080.5,197.3 1081.0,196.8 1081.5,195.9 1082.0,194.9 1082.5,193.6 1083.0,192.3 1083.5,191.0 1084.0,189.7 1084.5,188.6 1085.0,187.7 1085.5,187.1 1086.0,186.9 1086.5,186.9 1087.0,187.3 1087.5,187.9 1088.0,188.9 1088.5,190.0 1089.0,191.2 1089.5,192.5 1090.0,193.8 1090.5,195.0 1091.0,195.9 1091.5,196.6 1092.0,197.0 1092.5,197.1 1093.0,196.9 1093.5,196.4 1094.0,195.6 1094.5,194.5 1095.0,193.4 1095.5,192.1 1096.0,190.8 1096.5,189.6 1097.0,188.6 1097.5,187.8 1098.0,187.2 1098.5,187.0 1099.0,187.1 1099.5,187.4 1099.9,188.1 1100.4,189.0 1100.9,190.1 1101.4,191.3 1101.9,192.5 1102.4,193.7 1102.9,194.8 1103.4,195.7 1103.9,196.3 1104.4,196.7 1104.9,196.7 1105.4,196.5 1105.9,196.0 1106.4,195.2 1106.9,194.2 1107.4,193.1 1107.9,191.9 1108.4,190.7 1108.9,189.6 1109.4,188.6 1109.9,187.8 1110.4,187.4 1110.9,187.1 1111.4,187.2 1111.9,187.6 1112.4,188.3 1112.9,189.1 1113.4,190.2 1113.9,191.3 1114.4,192.5 1114.9,193.6 1115.4,194.6 1115.9,195.4 1116.4,196.0 1116.9,196.3 1117.4,196.4 1117.9,196.1 1118.4,195.6 1118.9,194.8 1119.4,193.9 1119.9,192.8 1120.4,191.7 1120.9,190.5 1121.4,189.5 1121.9,188.6 1122.4,187.9 1122.9,187.5 1123.4,187.3 1123.9,187.4 1124.4,187.8 1124.9,188.4 1125.4,189.2 1125.9,190.2 1126.4,191.3 1126.9,192.4 1127.4,193.5 1127.9,194.4 1128.4,195.2 1128.9,195.7 1129.4,196.0 1129.9,196.0 1130.4,195.7 1130.9,195.2 1131.4,194.5 1131.9,193.6 1132.4,192.5 1132.9,191.5 1133.4,190.4 1133.9,189.4 1134.4,188.6 1134.9,188.0 1135.4,187.6 1135.9,187.4 1136.4,187.5 1136.9,187.9 1137.4,188.5 1137.9,189.3 1138.4,190.3 1138.9,191.3 1139.4,192.4 1139.9,193.3 1140.4,194.2 1140.9,194.9 1141.4,195.4 1141.9,195.7 1142.4,195.6 1142.9,195.4 1143.4,194.9 1143.9,194.2 1144.4,193.3 1144.9,192.3 1145.4,191.3 1145.9,190.3 1146.4,189.4 1146.9,188.6 1147.4,188.0 1147.9,187.6 1148.4,187.5 1148.9,187.7 1149.4,188.1 1149.9,188.7 1150.4,189.4 1150.9,190.3 1151.4,191.3 1151.9,192.3 1152.4,193.2 1152.9,194.0 1153.4,194.7 1153.9,195.1 1154.4,195.3 1154.9,195.3 1155.4,195.0 1155.9,194.5 1156.4,193.8 1156.9,193.0 1157.4,192.1 1157.9,191.1 1158.4,190.2 1158.9,189.3 1159.4,188.6 1159.9,188.1 1160.4,187.7 1160.9,187.6 1161.4,187.8 1161.9,188.2 1162.4,188.8 1162.9,189.5 1163.4,190.4 1163.9,191.3 1164.4,192.2 1164.9,193.1 1165.4,193.8 1165.9,194.4 1166.4,194.8 1166.9,195.0 1167.4,195.0 1167.9,194.7 1168.4,194.2 1168.9,193.5 1169.4,192.7 1169.9,191.8 1170.4,190.9 1170.9,190.1 1171.4,189.3 1171.9,188.6 1172.4,188.1 1172.9,187.8 1173.4,187.8 1173.9,187.9 1174.4,188.3 1174.9,188.9 1175.4,189.6 1175.9,190.4 1176.4,191.3 1176.9,192.1 1177.4,192.9 1177.9,193.6 1178.4,194.2 1178.9,194.5 1179.4,194.7 1179.9,194.6 1180.4,194.3 1180.9,193.9 1181.4,193.2 1181.9,192.5 1182.4,191.6 1182.9,190.8 1183.4,190.0 1183.9,189.2 1184.4,188.6 1184.9,188.2 1185.4,187.9 1185.9,187.9 1186.4,188.1 1186.9,188.4 1187.4,189.0 1187.9,189.7 1188.4,190.4 1188.9,191.2 1189.4,192.1 1189.9,192.8 1190.4,193.5 1190.9,194.0 1191.4,194.3 1191.9,194.4 1192.4,194.4 1192.9,194.1 1193.4,193.6 1193.9,193.0 1194.4,192.3 1194.9,191.5 1195.4,190.7 1195.9,189.9 1196.4,189.2 1196.9,188.7 1197.4,188.3 1197.9,188.1 1198.4,188.1 1198.9,188.2 1199.4,188.6 1199.9,189.1 1200.4,189.8 1200.9,190.5 1201.4,191.3 1201.9,192.0 1202.4,192.8 1202.9,193.4 1203.4,193.8 1203.9,194.1 1204.4,194.2 1204.9,194.1 1205.4,193.8 1205.9,193.4 1206.4,192.8 1206.9,192.1 1207.4,191.4 1207.9,190.6 1208.4,189.9 1208.9,189.3 1209.4,188.8 1209.9,188.4 1210.4,188.2 1210.9,188.2 1211.4,188.4 1211.9,188.8 1212.4,189.3 1212.9,189.9 1213.4,190.6 1213.9,191.3 1214.4,192.0 1214.9,192.7 1215.4,193.2 1215.9,193.6 1216.4,193.9 1216.9,194.0 1217.4,193.9 1217.9,193.6 1218.4,193.2 1218.9,192.6 1219.4,192.0 1219.9,191.3 1220.4,190.6 1220.9,189.9 1221.4,189.3 1221.9,188.9 1222.4,188.5 1222.9,188.4 1223.4,188.4 1223.9,188.6 1224.4,188.9 1224.9,189.4 1225.3,190.0 1225.8,190.7 1226.3,191.3 1226.8,192.0 1227.3,192.6 1227.8,193.1 1228.3,193.5 1228.8,193.7 1229.3,193.8 1229.8,193.7 1230.3,193.4 1230.8,193.0 1231.3,192.5 1231.8,191.8 1232.3,191.2 1232.8,190.5 1233.3,189.9 1233.8,189.4 1234.3,189.0 1234.8,188.7 1235.3,188.5 1235.8,188.6 1236.3,188.8 1236.8,189.1 1237.3,189.5 1237.8,190.1 1238.3,190.7 1238.8,191.3 1239.3,192.0 1239.8,192.5 1240.3,193.0 1240.8,193.3 1241.3,193.5 1241.8,193.6 1242.3,193.4 1242.8,193.2 1243.3,192.8 1243.8,192.3 1244.3,191.7 1244.8,191.1 1245.3,190.5 1245.8,190.0 1246.3,189.5 1246.8,189.1 1247.3,188.8 1247.8,188.7 1248.3,188.7 1248.8,188.9 1249.3,189.3 1249.8,189.7 1250.3,190.2 1250.8,190.8 1251.3,191.4 1251.8,191.9 1252.3,192.5 1252.8,192.9 1253.3,193.2 1253.8,193.4 1254.3,193.4 1254.8,193.3 1255.3,193.0 1255.8,192.6 1256.3,192.2 1256.8,191.6 1257.3,191.1 1257.8,190.5 1258.3,190.0 1258.8,189.5 1259.3,189.2 1259.8,189.0 1260.3,188.9 1260.8,188.9 1261.3,189.1 1261.8,189.4 1262.3,189.8 1262.8,190.3 1263.3,190.9 1263.8,191.4 1264.3,191.9 1264.8,192.4 1265.3,192.8 1265.8,193.1 1266.3,193.2 1266.8,193.2 1267.3,193.1 1267.8,192.9 1268.3,192.5 1268.8,192.1 1269.3,191.6 1269.8,191.0 1270.3,190.5 1270.8,190.0 1271.3,189.6 1271.8,189.3 1272.3,189.1 1272.8,189.0 1273.3,189.1 1273.8,189.3 1274.3,189.6 1274.8,190.0 1275.3,190.4 1275.8,190.9 1276.3,191.4 1276.8,191.9 1277.3,192.3 1277.8,192.7 1278.3,192.9 1278.8,193.0 1279.3,193.1 1279.8,192.9 1280.3,192.7 1280.8,192.4 1281.3,191.9 1281.8,191.5 1282.3,191.0 1282.8,190.5 1283.3,190.1 1283.8,189.7 1284.3,189.4 1284.8,189.3 1285.3,189.2 1285.8,189.3 1286.3,189.4 1286.8,189.7 1287.3,190.1 1287.8,190.5 1288.3,191.0 1288.8,191.4 1289.3,191.9 1289.8,192.3 1290.3,192.6 1290.8,192.8 1291.3,192.9 1291.8,192.9 1292.3,192.8 1292.8,192.5 1293.3,192.2 1293.8,191.8 1294.3,191.4 1294.8,191.0 1295.3,190.5 1295.8,190.1 1296.3,189.8 1296.8,189.5 1297.3,189.4 1297.8,189.3 1298.3,189.4 1298.8,189.6 1299.3,189.9 1299.8,190.2 1300.3,190.6 1300.8,191.0 1301.3,191.5 1301.8,191.9 1302.3,192.3 1302.8,192.5 1303.3,192.7 1303.8,192.8 1304.3,192.8 1304.8,192.7 1305.3,192.5 1305.8,192.2 1306.3,191.8 1306.8,191.4 1307.3,191.0 1307.8,190.6 1308.3,190.2 1308.8,189.9 1309.3,189.6 1309.8,189.5 1310.3,189.5 1310.8,189.5 1311.3,189.7 1311.8,190.0 1312.3,190.3 1312.8,190.7 1313.3,191.1 1313.8,191.5 1314.3,191.9 1314.8,192.3 1315.3,192.5 1315.8,192.7 1316.3,192.8 1316.8,192.8 1317.3,192.7 1317.8,192.4 1318.3,192.1 1318.8,191.8 1319.3,191.4 1319.8,191.0 1320.3,190.6 1320.8,190.2 1321.3,189.9 1321.8,189.7 1322.3,189.6 1322.8,189.6 1323.3,189.7 1323.8,189.8 1324.3,190.1 1324.8,190.4 1325.3,190.8 1325.8,191.2 1326.3,191.6 1326.8,192.0 1327.3,192.3 1327.8,192.5 1328.3,192.7 1328.8,192.8 1329.3,192.7 1329.8,192.6 1330.3,192.4 1330.8,192.1 1331.3,191.8 1331.8,191.4 1332.3,191.0 1332.8,190.6 1333.3,190.3 1333.8,190.0 1334.3,189.8 1334.8,189.7 1335.3,189.7 1335.8,189.8 1336.3,190.0 1336.8,190.2 1337.3,190.5 1337.8,190.9 1338.3,191.3 1338.8,191.6 1339.3,192.0 1339.8,192.3 1340.3,192.5 1340.8,192.7 1341.3,192.7 1341.8,192.7 1342.3,192.6 1342.8,192.4 1343.3,192.1 1343.8,191.7 1344.3,191.4 1344.8,191.0 1345.3,190.7 1345.8,190.4 1346.3,190.1 1346.8,189.9 1347.3,189.8 1347.8,189.8 1348.3,189.9 1348.8,190.1 1349.3,190.3 1349.8,190.6 1350.2,191.0 1350.7,191.3 1351.2,191.7 1351.7,192.0 1352.2,192.3 1352.7,192.5 1353.2,192.6 1353.7,192.7 1354.2,192.6 1354.7,192.5 1355.2,192.3 1355.7,192.0 1356.2,191.7 1356.7,191.4 1357.2,191.0 1357.7,190.7 1358.2,190.4 1358.7,190.2 1359.2,190.0 1359.7,189.9 1360.2,189.9 1360.7,190.0 1361.2,190.2 1361.7,190.4 1362.2,190.7 1362.7,191.0 1362.7,191.0 1362.7,152.0 1363.2,112.0" fill="none" stroke="#ffffff" stroke-width="1.3" stroke-linejoin="round" /></g></svg>
<div class="t" style="left:352px;top:84px;font-size:12px">波形图</div>
<div class="a" style="left:1342px;top:75px;width:104px;height:24px;background:linear-gradient(90deg,#d6d6d6,#c8c8c8 85%,#9a9a9a);border-bottom:1px solid #a0a0a0"></div>
<div class="t" style="left:1358px;top:81px;font-size:12px">曲线 0</div>
<svg class="a" style="left:1404px;top:78px" width="29" height="18"><rect width="29" height="18" fill="#000"/><path d="M3 14 L12 4 L19 13 L26 4" stroke="#fff" stroke-width="1.2" fill="none"/></svg>
<svg class="a" style="left:0;top:0" width="1920" height="1080"><rect x="344" y="320" width="1030" height="286" fill="#c3c3c3"/><rect x="344" y="320" width="9" height="286" fill="#d4d4d4"/><rect x="344" y="320" width="1030" height="5" fill="#d2d2d2"/><rect x="353" y="325" width="1021" height="1" fill="#c9c9c9"/><rect x="1362" y="320" width="12" height="286" fill="url(#rbev)"/><rect x="344" y="603" width="1030" height="2" fill="#b4b4b4"/><rect x="344" y="605" width="1030" height="1" fill="#8e8e8e"/><rect x="417.6" y="328.5" width="932.90" height="232.50" fill="#000"/><path d="M426.5 328.5V561M434.5 328.5V561M443.5 328.5V561M451.5 328.5V561M460.5 328.5V561M468.5 328.5V561M476.5 328.5V561M485.5 328.5V561M493.5 328.5V561M510.5 328.5V561M519.5 328.5V561M527.5 328.5V561M536.5 328.5V561M544.5 328.5V561M553.5 328.5V561M561.5 328.5V561M570.5 328.5V561M578.5 328.5V561M595.5 328.5V561M604.5 328.5V561M612.5 328.5V561M621.5 328.5V561M629.5 328.5V561M638.5 328.5V561M646.5 328.5V561M655.5 328.5V561M663.5 328.5V561M680.5 328.5V561M688.5 328.5V561M697.5 328.5V561M705.5 328.5V561M714.5 328.5V561M722.5 328.5V561M731.5 328.5V561M739.5 328.5V561M748.5 328.5V561M765.5 328.5V561M773.5 328.5V561M782.5 328.5V561M790.5 328.5V561M799.5 328.5V561M807.5 328.5V561M816.5 328.5V561M824.5 328.5V561M833.5 328.5V561M850.5 328.5V561M858.5 328.5V561M867.5 328.5V561M875.5 328.5V561M884.5 328.5V561M892.5 328.5V561M901.5 328.5V561M909.5 328.5V561M917.5 328.5V561M934.5 328.5V561M943.5 328.5V561M951.5 328.5V561M960.5 328.5V561M968.5 328.5V561M977.5 328.5V561M985.5 328.5V561M994.5 328.5V561M1002.5 328.5V561M1019.5 328.5V561M1028.5 328.5V561M1036.5 328.5V561M1045.5 328.5V561M1053.5 328.5V561M1062.5 328.5V561M1070.5 328.5V561M1079.5 328.5V561M1087.5 328.5V561M1104.5 328.5V561M1113.5 328.5V561M1121.5 328.5V561M1129.5 328.5V561M1138.5 328.5V561M1146.5 328.5V561M1155.5 328.5V561M1163.5 328.5V561M1172.5 328.5V561M1189.5 328.5V561M1197.5 328.5V561M1206.5 328.5V561M1214.5 328.5V561M1223.5 328.5V561M1231.5 328.5V561M1240.5 328.5V561M1248.5 328.5V561M1257.5 328.5V561M1274.5 328.5V561M1282.5 328.5V561M1291.5 328.5V561M1299.5 328.5V561M1308.5 328.5V561M1316.5 328.5V561M1325.5 328.5V561M1333.5 328.5V561M1342.5 328.5V561M417.6 336.5H1350.5M417.6 344.5H1350.5M417.6 351.5H1350.5M417.6 359.5H1350.5M417.6 375.5H1350.5M417.6 382.5H1350.5M417.6 390.5H1350.5M417.6 398.5H1350.5M417.6 413.5H1350.5M417.6 421.5H1350.5M417.6 429.5H1350.5M417.6 437.5H1350.5M417.6 452.5H1350.5M417.6 460.5H1350.5M417.6 468.5H1350.5M417.6 475.5H1350.5M417.6 491.5H1350.5M417.6 499.5H1350.5M417.6 506.5H1350.5M417.6 514.5H1350.5M417.6 530.5H1350.5M417.6 537.5H1350.5M417.6 545.5H1350.5M417.6 553.5H1350.5" stroke="#163a1c" stroke-width="1" fill="none"/><path d="M502.5 328.5V561M587.5 328.5V561M672.5 328.5V561M756.5 328.5V561M841.5 328.5V561M926.5 328.5V561M1011.5 328.5V561M1096.5 328.5V561M1180.5 328.5V561M1265.5 328.5V561M417.6 367.5H1350.5M417.6 406.5H1350.5M417.6 444.5H1350.5M417.6 483.5H1350.5M417.6 522.5H1350.5" stroke="#2c6e34" stroke-width="1" fill="none"/><path d="M417.5 328.5V561.5H1350.5V328.5" stroke="#e8e8e8" fill="none" stroke-width="1"/><g font-size="12.5px"><text x="417.6" y="581" text-anchor="middle">0</text><rect x="417.0" y="563" width="1.3" height="6" fill="#000"/><text x="502.4" y="581" text-anchor="middle">0.0002</text><rect x="501.8" y="563" width="1.3" height="6" fill="#000"/><text x="587.2" y="581" text-anchor="middle">0.0004</text><rect x="586.6" y="563" width="1.3" height="6" fill="#000"/><text x="672.0" y="581" text-anchor="middle">0.0006</text><rect x="671.4" y="563" width="1.3" height="6" fill="#000"/><text x="756.8" y="581" text-anchor="middle">0.0008</text><rect x="756.2" y="563" width="1.3" height="6" fill="#000"/><text x="841.6" y="581" text-anchor="middle">0.001</text><rect x="841.0" y="563" width="1.3" height="6" fill="#000"/><text x="926.5" y="581" text-anchor="middle">0.0012</text><rect x="925.9" y="563" width="1.3" height="6" fill="#000"/><text x="1011.3" y="581" text-anchor="middle">0.0014</text><rect x="1010.7" y="563" width="1.3" height="6" fill="#000"/><text x="1096.1" y="581" text-anchor="middle">0.0016</text><rect x="1095.5" y="563" width="1.3" height="6" fill="#000"/><text x="1180.9" y="581" text-anchor="middle">0.0018</text><rect x="1180.3" y="563" width="1.3" height="6" fill="#000"/><text x="1265.7" y="581" text-anchor="middle">0.002</text><rect x="1265.1" y="563" width="1.3" height="6" fill="#000"/><text x="1350.5" y="581" text-anchor="middle">0.0022</text><rect x="1349.9" y="563" width="1.3" height="6" fill="#000"/><text x="408" y="333.8" text-anchor="end">-0.9</text><rect x="410" y="328.7" width="6" height="1.3" fill="#000"/><text x="408" y="372.6" text-anchor="end">-0.95</text><rect x="410" y="367.4" width="6" height="1.3" fill="#000"/><text x="408" y="411.3" text-anchor="end">-1</text><rect x="410" y="406.2" width="6" height="1.3" fill="#000"/><text x="408" y="450.1" text-anchor="end">-1.05</text><rect x="410" y="444.9" width="6" height="1.3" fill="#000"/><text x="408" y="488.8" text-anchor="end">-1.1</text><rect x="410" y="483.7" width="6" height="1.3" fill="#000"/><text x="408" y="527.5" text-anchor="end">-1.15</text><rect x="410" y="522.5" width="6" height="1.3" fill="#000"/><text x="408" y="566.3" text-anchor="end">-1.2</text><rect x="410" y="561.2" width="6" height="1.3" fill="#000"/></g><text x="884" y="599" font-size="12" text-anchor="middle">时间</text><text transform="translate(372,444) rotate(-90)" font-size="12" text-anchor="middle">幅值</text><clipPath id="c2"><rect x="417.6" y="328.5" width="933" height="232.5"/></clipPath><g clip-path="url(#c2)"><path d="M574.5 328.5V561M576.3 328.5V561M578.4 328.5V561M582.4 328.5V561M585.4 328.5V561M587.5 328.5V561M590.5 328.5V561M592.5 328.5V561M595.3 328.5V561M597.4 328.5V561M600.4 328.5V561M603.4 328.5V561M612.5 328.5V561M615.5 328.5V561M618.5 328.5V561M620.3 328.5V561M622.4 328.5V561M625.4 328.5V561M631.2 328.5V561M637.2 328.5V561M639.3 328.5V561M641.4 328.5V561" stroke="#eef070" stroke-width="1.5"/><path d="M634 328.5V561M628.9 328.5V561M606.9 328.5V561" stroke="#f0f000" stroke-width="2"/><polyline points="418.8,328.5 418.8,476.5 418.1,476.3 418.6,475.5 419.1,475.3 419.6,475.4 420.1,475.2 420.6,474.5 421.1,474.3 421.6,474.1 422.1,474.9 422.6,474.7 423.1,474.6 423.6,472.9 424.1,472.7 424.6,473.6 425.1,473.4 425.6,473.3 426.1,471.7 426.6,471.5 427.1,472.3 427.6,472.2 428.1,471.3 428.6,471.1 429.1,471.6 429.6,471.2 430.1,471.0 430.6,471.7 431.1,471.6 431.6,470.5 432.1,469.9 432.6,469.8 433.1,470.2 433.6,470.1 434.1,469.5 434.6,469.5 435.1,469.4 435.6,470.3 436.1,470.2 436.6,468.8 437.1,468.6 437.6,468.8 438.1,469.2 438.6,469.1 439.1,469.4 439.6,469.3 440.1,467.6 440.6,468.2 441.1,468.1 441.6,467.5 442.1,467.3 442.6,466.9 443.1,467.1 443.6,467.0 444.1,466.5 444.6,466.3 445.1,467.2 445.6,467.1 446.1,466.2 446.6,466.8 447.1,466.6 447.6,465.6 448.1,465.5 448.6,465.5 449.1,466.8 449.6,466.7 450.1,466.6 450.6,466.4 451.1,466.2 451.6,464.7 452.1,464.6 452.6,465.5 453.1,465.4 453.6,464.9 454.1,465.4 454.6,465.3 455.1,464.8 455.6,464.7 456.1,464.9 456.6,464.8 457.1,464.8 457.6,464.2 458.1,464.1 458.6,464.0 459.1,464.0 459.6,463.3 460.1,463.6 460.6,463.5 461.1,463.0 461.6,462.9 462.1,462.9 462.6,462.6 463.1,462.5 463.6,463.0 464.1,463.0 464.6,463.8 465.1,463.7 465.6,462.4 466.1,462.1 466.6,462.0 467.1,462.1 467.6,462.0 468.1,462.5 468.6,462.2 469.1,462.1 469.6,463.0 470.1,462.9 470.6,461.7 471.1,462.1 471.6,462.0 472.1,462.5 472.6,462.4 473.1,462.8 473.6,462.7 474.1,461.2 474.6,460.9 475.1,460.8 475.6,462.4 476.1,462.4 476.6,461.0 477.1,461.6 477.6,461.6 478.1,462.0 478.6,461.9 479.1,461.6 479.6,460.7 480.1,460.6 480.6,460.4 481.1,460.3 481.6,461.8 482.1,461.7 482.6,460.6 483.1,461.6 483.6,461.6 484.1,460.3 484.6,460.2 485.1,460.9 485.5,459.8 486.0,459.8 486.5,459.5 487.0,459.5 487.5,460.3 488.0,459.4 488.5,459.3 489.0,460.5 489.5,460.5 490.0,460.9 490.5,459.9 491.0,459.8 491.5,460.8 492.0,460.8 492.5,460.4 493.0,460.4 493.5,460.0 494.0,459.5 494.5,459.5 495.0,460.3 495.5,460.3 496.0,460.4 496.5,458.9 497.0,458.8 497.5,459.8 498.0,459.8 498.5,458.5 499.0,458.6 499.5,458.6 500.0,459.5 500.5,459.5 501.0,459.3 501.5,459.2 502.0,459.1 502.5,458.8 503.0,458.8 503.5,458.8 504.0,458.8 504.5,458.8 505.0,458.7 505.5,458.7 506.0,458.0 506.5,458.0 507.0,458.8 507.5,458.9 508.0,458.9 508.5,458.3 509.0,458.3 509.5,459.1 510.0,459.1 510.5,459.0 511.0,457.7 511.5,457.6 512.0,458.5 512.5,458.4 513.0,458.3 513.5,459.3 514.0,459.3 514.5,458.5 515.0,458.5 515.5,458.2 516.0,459.2 516.5,459.1 517.0,458.0 517.5,458.0 518.0,457.9 518.5,459.0 519.0,458.9 519.5,457.9 520.0,457.8 520.5,458.1 521.0,458.1 521.5,457.7 522.0,458.3 522.5,458.2 523.0,457.6 523.5,457.5 524.0,457.4 524.5,458.8 525.0,458.7 525.5,458.6 526.0,458.6 526.5,457.5 527.0,456.9 527.5,456.9 528.0,458.2 528.5,458.2 529.0,457.8 529.5,457.7 530.0,457.5 530.5,458.0 531.0,457.9 531.5,457.8 532.0,457.8 532.5,457.9 533.0,457.8 533.5,457.8 534.0,457.3 534.5,457.3 535.0,457.8 535.5,457.7 536.0,457.7 536.5,456.9 537.0,456.9 537.5,458.3 538.0,458.2 538.5,457.2 539.0,456.9 539.5,456.9 540.0,457.6 540.5,457.6 541.0,457.8 541.5,456.7 542.0,456.7 542.5,457.7 543.0,457.7 543.5,457.8 544.0,457.3 544.5,457.3 545.0,456.8 545.5,456.8 546.0,457.9 546.5,457.8 547.0,457.4 547.5,457.4 548.0,457.4 548.5,456.4 549.0,456.4 549.5,457.1 550.0,456.4 550.5,456.3 551.0,457.6 551.5,457.6 552.0,457.3 552.5,456.7 553.0,456.7 553.5,456.2 554.0,456.2 554.5,457.0 555.0,457.4 555.5,457.4 556.0,457.6 556.5,457.6 557.0,456.8 557.5,456.8 558.0,457.4 558.5,456.2 559.0,456.2 559.5,456.2 560.0,456.2 560.5,457.4 561.0,457.2 561.5,457.2 562.0,456.2 562.5,456.2 563.0,456.5 563.5,456.1 564.0,456.1 564.5,457.0 565.0,457.0 565.5,457.4 566.0,457.4 566.5,457.0 567.0,456.1 567.5,456.1 568.0,457.1 568.5,457.1 569.0,456.9 569.5,456.8 570.0,456.8 570.5,456.7 571.0,456.7 571.5,456.7 572.0,455.8 572.5,455.8 573.0,457.2 573.5,457.2 574.0,457.5 574.5,457.5 575.0,455.7 575.5,455.8 576.0,455.8 576.5,455.6 577.0,455.6 577.5,456.6 578.0,455.6 578.5,455.6 579.0,455.7 579.5,455.7 580.0,457.0 580.5,456.0 581.0,456.0 581.5,455.8 582.0,455.8 582.5,456.1 583.0,456.1 583.5,456.4 584.0,456.8 584.5,456.8 585.0,456.7 585.5,456.7 586.0,456.9 586.5,457.2 587.0,457.2 587.5,456.2 588.0,456.2 588.5,456.7 589.0,455.8 589.5,455.8 590.0,457.2 590.5,457.2 591.0,455.6 591.5,456.0 592.0,456.0 592.5,455.5 593.0,455.5 593.5,455.6 594.0,455.6 594.5,455.5 595.0,456.1 595.5,456.1 596.0,457.2 596.5,457.2 597.0,455.8 597.5,456.9 598.0,456.9 598.5,456.6 599.0,456.6 599.5,455.9 600.0,456.2 600.5,456.2 601.0,456.4 601.5,456.4 602.0,455.4 602.5,455.4 603.0,456.0 603.5,456.5 604.0,456.5 604.5,456.7 605.0,456.7 605.5,455.5 606.0,456.2 606.5,456.2 607.0,455.7 607.5,455.7 608.0,456.4 608.5,456.7 609.0,456.7 609.5,456.1 610.0,456.1 610.5,455.6 611.0,455.6 611.5,456.8 612.0,455.6 612.5,455.6 613.0,455.4 613.5,455.4 614.0,455.6 614.5,455.5 615.0,455.5 615.5,457.0 616.0,457.0 616.5,455.9 617.0,455.4 617.5,455.4 618.0,456.9 618.5,456.9 619.0,456.5 619.5,456.5 620.0,456.5 620.4,456.0 620.9,456.0 621.4,456.2 621.9,456.2 622.4,456.1 622.9,455.6 623.4,455.6 623.9,457.0 624.4,457.0 624.9,456.9 625.4,456.8 625.9,456.8 626.4,456.8 626.9,456.8 627.4,456.9 627.9,455.2 628.4,455.2 628.9,455.4 629.4,455.4 629.9,456.8 630.4,456.8 630.9,456.0 631.4,456.4 631.9,456.4 632.4,456.4 632.9,456.4 633.4,456.3 633.9,455.8 634.4,455.8 634.9,455.9 635.4,455.9 635.9,456.3 636.4,456.6 636.9,456.6 637.4,456.3 637.9,456.3 638.4,456.7 638.9,456.7 639.4,455.9 639.9,455.6 640.4,455.6 640.9,456.2 641.4,456.2 641.9,456.8 642.4,456.6 642.9,456.6 643.4,456.2 643.9,456.2 644.4,455.8 644.9,455.5 645.4,455.5 645.9,456.2 646.4,456.2 646.9,455.4 647.4,455.4 647.9,455.7 648.4,456.1 648.9,456.1 649.4,456.2 649.9,456.2 650.4,456.0 650.9,455.6 651.4,455.6 651.9,456.1 652.4,456.1 652.9,455.6 653.4,456.0 653.9,456.0 654.4,456.4 654.9,456.4 655.4,455.9 655.9,455.6 656.4,455.6 656.9,456.7 657.4,456.7 657.9,456.1 658.4,456.1 658.9,456.1 659.4,455.2 659.9,455.2 660.4,455.1 660.9,455.1 661.4,456.2 661.9,455.2 662.4,455.2 662.9,455.4 663.4,455.4 663.9,456.4 664.4,456.0 664.9,456.0 665.4,456.6 665.9,456.6 666.4,455.3 666.9,455.3 667.4,455.6 667.9,455.2 668.4,455.2 668.9,455.4 669.4,455.4 669.9,455.6 670.4,455.5 670.9,455.5 671.4,455.8 671.9,455.8 672.4,456.7 672.9,455.8 673.4,455.8 673.9,456.8 674.4,456.8 674.9,456.6 675.4,456.6 675.9,455.4 676.4,456.8 676.9,456.8 677.4,456.7 677.9,456.7 678.4,456.7 678.9,455.2 679.4,455.2 679.9,456.5 680.4,456.5 680.9,456.8 681.4,455.3 681.9,455.3 682.4,456.6 682.9,456.6 683.4,455.3 683.9,455.6 684.4,455.6 684.9,455.3 685.4,455.3 685.9,455.1 686.4,455.1 686.9,455.7 687.4,455.3 687.9,455.3 688.4,456.8 688.9,456.8 689.4,455.4 689.9,455.9 690.4,455.9 690.9,455.5 691.4,455.5 691.9,456.6 692.4,455.4 692.9,455.4 693.4,455.1 693.9,455.1 694.4,456.7 694.9,456.7 695.4,456.2 695.9,455.8 696.4,455.8 696.9,455.3 697.4,455.3 697.9,456.4 698.4,456.5 698.9,456.5 699.4,456.3 699.9,456.3 700.4,455.7 700.9,455.4 701.4,455.4 701.9,456.1 702.4,456.1 702.9,456.1 703.4,456.1 703.9,456.1 704.4,456.2 704.9,456.2 705.4,456.0 705.9,456.0 706.4,456.6 706.9,455.9 707.4,455.9 707.9,455.0 708.4,455.0 708.9,456.0 709.4,455.4 709.9,455.4 710.4,456.5 710.9,456.5 711.4,455.5 711.9,455.5 712.4,455.4 712.9,455.5 713.4,455.5 713.9,455.8 714.4,455.8 714.9,455.9 715.4,455.6 715.9,455.6 716.4,455.1 716.9,455.1 717.4,456.5 717.9,456.6 718.4,456.6 718.9,455.4 719.4,455.4 719.9,455.1 720.4,455.8 720.9,455.8 721.4,456.0 721.9,456.0 722.4,455.5 722.9,455.5 723.4,456.4 723.9,456.3 724.4,456.3 724.9,456.4 725.4,456.4 725.9,455.7 726.4,456.2 726.9,456.2 727.4,456.4 727.9,456.4 728.4,455.5 728.9,455.0 729.4,455.0 729.9,456.2 730.4,456.2 730.9,455.5 731.4,455.5 731.9,456.0 732.4,455.2 732.9,455.2 733.4,455.7 733.9,455.7 734.4,456.3 734.9,456.4 735.4,456.4 735.9,456.7 736.4,456.7 736.9,455.9 737.4,456.1 737.9,456.1 738.4,456.5 738.9,456.5 739.4,456.1 739.9,456.1 740.4,456.2 740.9,455.3 741.4,455.3 741.9,456.5 742.4,456.5 742.9,454.9 743.4,455.9 743.9,455.9 744.4,455.7 744.9,455.7 745.4,455.9 745.9,455.2 746.4,455.2 746.9,455.3 747.4,455.3 747.9,455.7 748.4,455.7 748.9,455.9 749.4,455.4 749.9,455.4 750.4,455.2 750.9,455.2 751.4,456.0 751.9,455.4 752.4,455.4 752.9,455.0 753.4,455.0 753.9,455.9 754.4,456.4 754.9,456.4 755.3,456.3 755.8,456.3 756.3,455.4 756.8,455.5 757.3,455.5 757.8,455.0 758.3,455.0 758.8,455.2 759.3,455.2 759.8,456.3 760.3,456.4 760.8,456.4 761.3,456.3 761.8,456.3 762.3,456.4 762.8,455.5 763.3,455.5 763.8,455.2 764.3,455.2 764.8,455.1 765.3,456.3 765.8,456.3 766.3,455.2 766.8,455.2 767.3,456.2 767.8,456.2 768.3,456.0 768.8,455.4 769.3,455.4 769.8,456.6 770.3,456.6 770.8,456.6 771.3,455.2 771.8,455.2 772.3,456.2 772.8,456.2 773.3,456.1 773.8,455.7 774.3,455.7 774.8,455.5 775.3,455.5 775.8,456.8 776.3,456.8 776.8,456.1 777.3,456.0 777.8,456.0 778.3,455.9 778.8,455.9 779.3,456.4 779.8,455.7 780.3,455.7 780.8,455.0 781.3,455.0 781.8,456.0 782.3,455.8 782.8,455.8 783.3,456.5 783.8,456.5 784.3,456.3 784.8,455.5 785.3,455.5 785.8,456.6 786.3,456.6 786.8,455.1 787.3,455.1 787.8,455.1 788.3,456.6 788.8,456.6 789.3,455.0 789.8,455.0 790.3,456.1 790.8,455.3 791.3,455.3 791.8,455.4 792.3,455.4 792.8,456.2 793.3,455.5 793.8,455.5 794.3,455.6 794.8,455.6 795.3,455.3 795.8,455.3 796.3,456.3 796.8,455.4 797.3,455.4 797.8,455.0 798.3,455.0 798.8,455.5 799.3,455.8 799.8,455.8 800.3,456.6 800.8,456.6 801.3,455.8 801.8,456.1 802.3,456.1 802.8,455.4 803.3,455.4 803.8,455.5 804.3,455.5 804.8,456.0 805.3,456.0 805.8,456.0 806.3,456.0 806.8,456.0 807.3,456.0 807.8,456.0 808.3,454.5 808.8,451.8 809.3,448.5 809.8,444.9 810.3,441.5 810.8,438.5 811.3,436.3 811.8,435.1 812.3,435.2 812.8,436.5 813.3,440.2 813.8,444.6 814.3,448.7 814.8,452.2 815.3,454.9 815.8,456.7 816.3,457.3 816.8,456.7 817.3,455.0 817.8,452.4 818.3,448.9 818.8,445.0 819.3,440.9 819.8,436.9 820.3,433.3 820.8,430.4 821.3,428.5 821.8,427.7 822.3,428.0 822.8,429.5 823.3,432.1 823.8,435.6 824.3,439.7 824.8,444.2 825.3,448.7 825.8,452.9 826.3,456.6 826.8,459.3 827.3,461.1 827.8,461.7 828.3,461.0 828.8,459.2 829.3,456.5 829.8,452.9 830.3,448.8 830.8,444.5 831.3,440.2 831.8,436.5 832.3,433.4 832.8,431.3 833.3,430.4 833.8,430.7 834.3,432.2 834.8,434.9 835.3,438.6 835.8,442.9 836.3,447.7 836.8,452.5 837.3,457.0 837.8,460.8 838.3,463.8 838.8,465.6 839.3,466.2 839.8,465.5 840.3,463.4 840.8,460.3 841.3,456.3 841.8,451.8 842.3,447.0 842.8,442.3 843.3,438.1 843.8,434.8 844.3,432.5 844.8,431.5 845.3,431.9 845.8,433.6 846.3,436.6 846.8,440.7 847.3,445.5 847.8,450.7 848.3,455.9 848.8,460.9 849.3,465.1 849.8,468.3 850.3,470.2 850.8,470.8 851.3,469.9 851.8,467.6 852.3,464.2 852.8,459.7 853.3,454.7 853.8,449.4 854.3,444.3 854.8,439.8 855.3,436.0 855.8,433.4 856.3,432.1 856.8,432.4 857.3,434.2 857.8,437.4 858.3,441.7 858.8,446.9 859.3,452.7 859.8,458.5 860.3,463.9 860.8,468.5 861.3,472.0 861.8,474.1 862.3,474.6 862.8,473.5 863.3,470.7 863.8,466.6 864.3,461.3 864.8,455.3 865.3,449.1 865.8,443.0 866.3,437.5 866.8,433.1 867.3,430.1 867.8,428.7 868.3,429.1 868.8,431.2 869.3,435.0 869.8,440.1 870.3,446.3 870.8,452.9 871.3,459.6 871.8,465.9 872.3,471.2 872.8,475.2 873.3,477.6 873.8,478.0 874.3,476.6 874.8,473.4 875.3,468.5 875.8,462.4 876.3,455.5 876.8,448.3 877.3,441.3 877.8,435.1 878.3,430.1 878.8,426.7 879.3,425.2 879.8,425.8 880.3,428.3 880.8,432.7 881.3,438.7 881.8,445.7 882.3,453.4 882.8,461.1 883.3,468.2 883.8,474.3 884.3,478.8 884.8,481.5 885.3,482.0 885.8,480.3 886.3,476.6 886.8,471.0 887.3,464.0 887.8,456.1 888.3,447.8 888.8,439.9 889.3,432.8 889.8,427.2 890.2,423.4 890.7,421.8 891.2,422.5 891.7,425.5 892.2,430.6 892.7,437.5 893.2,445.6 893.7,454.3 894.2,463.1 894.7,471.2 895.2,478.1 895.7,483.2 896.2,486.1 896.7,486.5 897.2,484.5 897.7,480.2 898.2,473.8 898.7,465.8 899.2,456.8 899.7,447.4 900.2,438.4 900.7,430.5 901.2,424.2 901.7,420.0 902.2,418.3 902.7,419.2 903.2,422.7 903.7,428.6 904.2,436.4 904.7,445.5 905.2,455.4 905.7,465.2 906.2,474.3 906.7,482.0 907.2,487.7 907.7,490.9 908.2,491.4 908.7,489.0 909.2,484.0 909.7,476.7 910.2,467.5 910.7,457.2 911.2,446.5 911.7,436.2 912.2,427.0 912.7,419.8 913.2,415.0 913.7,413.1 914.2,414.2 914.7,418.3 915.2,425.0 915.7,434.0 916.2,444.6 916.7,456.0 917.2,467.4 917.7,477.9 918.2,486.7 918.7,493.1 919.2,496.7 919.7,497.1 920.2,494.2 920.7,488.3 921.2,479.7 921.7,469.1 922.2,457.3 922.7,445.0 923.2,433.2 923.7,422.9 924.2,414.7 924.7,409.4 925.2,407.4 925.7,408.8 926.2,413.5 926.7,421.4 927.2,431.7 927.7,443.8 928.2,456.8 928.7,469.7 929.2,481.5 929.7,491.4 930.2,498.5 930.7,502.4 931.2,502.7 931.7,499.3 932.2,492.6 932.7,482.9 933.2,471.0 933.7,457.8 934.2,444.2 934.7,431.3 935.2,420.0 935.7,411.2 936.2,405.6 936.7,403.6 937.2,405.5 937.7,411.0 938.2,419.9 938.7,431.4 939.2,444.8 939.7,459.0 940.2,473.0 940.7,485.9 941.2,496.5 941.7,504.1 942.2,508.2 942.7,508.3 943.2,504.6 943.7,497.1 944.2,486.5 944.7,473.6 945.2,459.3 945.7,444.6 946.2,430.7 946.7,418.6 947.2,409.2 947.7,403.3 948.2,401.4 948.7,403.5 949.2,409.6 949.7,419.2 950.2,431.7 950.7,446.2 951.2,461.5 951.7,476.6 952.2,490.3 952.7,501.7 953.2,509.8 953.7,514.0 954.2,514.0 954.7,509.7 955.2,501.6 955.7,490.0 956.2,476.0 956.7,460.5 957.2,444.7 957.7,429.8 958.2,416.8 958.7,406.9 959.2,400.6 959.7,398.6 960.2,401.0 960.7,407.6 961.2,418.0 961.7,431.5 962.2,447.0 962.7,463.4 963.2,479.4 963.7,494.0 964.2,506.0 964.7,514.4 965.2,518.7 965.7,518.5 966.2,513.8 966.7,504.9 967.2,492.4 967.7,477.3 968.2,460.7 968.7,443.8 969.2,427.9 969.7,414.2 970.2,403.7 970.7,397.1 971.2,395.2 971.7,397.9 972.2,405.1 972.7,416.3 973.2,430.8 973.7,447.4 974.2,464.9 974.7,482.0 975.2,497.5 975.7,510.1 976.2,519.0 976.7,523.4 977.2,522.9 977.7,517.7 978.2,508.1 978.7,494.7 979.2,478.6 979.7,460.9 980.2,443.0 980.7,426.4 981.2,412.2 981.7,401.4 982.2,395.0 982.7,393.4 983.2,396.7 983.7,404.7 984.2,416.9 984.7,432.3 985.2,449.8 985.7,468.2 986.2,486.0 986.7,502.0 987.2,515.0 987.7,524.0 988.2,528.4 988.7,527.9 989.2,522.4 989.7,512.4 990.2,498.8 990.7,482.4 991.2,464.5 991.7,446.5 992.2,429.7 992.7,415.4 993.2,404.7 993.7,398.3 994.2,396.8 994.7,400.4 995.2,408.7 995.7,421.1 996.2,436.8 996.7,454.6 997.2,473.2 997.7,491.2 998.2,507.3 998.7,520.4 999.2,529.4 999.7,533.6 1000.2,532.7 1000.7,526.6 1001.2,516.1 1001.7,501.9 1002.2,485.1 1002.7,467.0 1003.2,449.0 1003.7,432.3 1004.2,418.2 1004.7,407.7 1005.2,401.6 1005.7,400.3 1006.2,403.9 1006.7,412.1 1007.2,424.3 1007.7,439.4 1008.2,456.4 1008.7,474.1 1009.2,491.0 1009.7,506.0 1010.2,517.9 1010.7,525.9 1011.2,529.3 1011.7,528.1 1012.2,522.2 1012.7,512.1 1013.2,498.7 1013.7,482.9 1014.2,465.9 1014.7,449.0 1015.2,433.4 1015.7,420.3 1016.2,410.6 1016.7,405.1 1017.2,404.0 1017.7,407.6 1018.2,415.4 1018.7,426.9 1019.2,441.1 1019.7,457.1 1020.2,473.7 1020.7,489.5 1021.2,503.4 1021.7,514.4 1022.2,521.7 1022.7,524.8 1023.2,523.4 1023.7,517.8 1024.2,508.3 1024.7,495.6 1025.1,480.8 1025.6,464.9 1026.1,449.1 1026.6,434.6 1027.1,422.5 1027.6,413.6 1028.1,408.6 1028.6,407.8 1029.1,411.2 1029.6,418.6 1030.1,429.4 1030.6,442.7 1031.1,457.7 1031.6,473.1 1032.1,487.8 1032.6,500.7 1033.1,511.0 1033.6,517.7 1034.1,520.5 1034.6,519.1 1035.1,513.7 1035.6,504.6 1036.1,492.6 1036.6,478.5 1037.1,463.5 1037.6,448.6 1038.1,434.9 1038.6,423.4 1039.1,415.0 1039.6,410.3 1040.1,409.6 1040.6,413.0 1041.1,420.1 1041.6,430.4 1042.1,443.1 1042.6,457.4 1043.1,472.0 1043.6,486.0 1044.1,498.2 1044.6,507.8 1045.1,514.1 1045.6,516.6 1046.1,515.1 1046.6,509.8 1047.1,501.1 1047.6,489.6 1048.1,476.2 1048.6,461.9 1049.1,447.8 1049.6,434.8 1050.1,424.0 1050.6,416.2 1051.1,411.8 1051.6,411.3 1052.1,414.6 1052.6,421.4 1053.1,431.3 1053.6,443.5 1054.1,457.0 1054.6,470.9 1055.1,484.1 1055.6,495.6 1056.1,504.6 1056.6,510.5 1057.1,512.7 1057.6,511.2 1058.1,506.1 1058.6,497.7 1059.1,486.7 1059.6,473.9 1060.1,460.4 1060.6,447.0 1061.1,434.8 1061.6,424.6 1062.1,417.3 1062.6,413.3 1063.1,412.9 1063.6,416.1 1064.1,422.7 1064.6,432.2 1065.1,443.8 1065.6,456.6 1066.1,469.7 1066.6,482.2 1067.1,493.0 1067.6,501.4 1068.1,506.8 1068.6,508.8 1069.1,507.3 1069.6,502.3 1070.1,494.3 1070.6,483.8 1071.1,471.7 1071.6,458.9 1072.1,446.3 1072.6,434.8 1073.1,425.3 1073.6,418.4 1074.1,414.8 1074.6,414.5 1075.1,417.7 1075.6,424.0 1076.1,433.0 1076.6,444.0 1077.1,456.1 1077.6,468.5 1078.1,480.2 1078.6,490.4 1079.1,498.2 1079.6,503.2 1080.1,504.9 1080.6,503.4 1081.1,498.6 1081.6,490.9 1082.1,481.0 1082.6,469.6 1083.1,457.4 1083.6,445.5 1084.1,434.7 1084.6,425.8 1085.1,419.4 1085.6,416.1 1086.1,415.9 1086.6,419.0 1087.1,425.1 1087.6,433.7 1088.1,444.1 1088.6,455.6 1089.1,467.3 1089.6,478.4 1090.1,487.9 1090.6,495.3 1091.1,499.9 1091.6,501.5 1092.1,499.9 1092.6,495.2 1093.1,487.9 1093.6,478.4 1094.1,467.5 1094.6,456.0 1095.1,444.7 1095.6,434.5 1096.1,426.2 1096.6,420.2 1097.1,417.1 1097.6,417.1 1098.1,420.2 1098.6,426.0 1099.1,434.2 1099.6,444.1 1100.1,455.0 1100.6,466.1 1101.1,476.5 1101.6,485.5 1102.1,492.4 1102.6,496.7 1103.1,498.1 1103.6,496.4 1104.1,491.9 1104.6,484.9 1105.1,475.9 1105.6,465.5 1106.1,454.6 1106.6,444.0 1107.1,434.4 1107.6,426.6 1108.1,421.0 1108.6,418.2 1109.1,418.3 1109.6,421.3 1110.1,426.9 1110.6,434.7 1111.1,444.1 1111.6,454.4 1112.1,464.8 1112.6,474.6 1113.1,483.1 1113.6,489.5 1114.1,493.4 1114.6,494.6 1115.1,493.0 1115.6,488.6 1116.1,481.9 1116.6,473.4 1117.1,463.6 1117.6,453.3 1118.1,443.3 1118.6,434.3 1119.1,427.0 1119.6,421.9 1120.1,419.3 1120.6,419.5 1121.1,422.4 1121.6,427.7 1122.1,435.1 1122.6,444.0 1123.1,453.7 1123.6,463.5 1124.1,472.7 1124.6,480.6 1125.1,486.5 1125.6,490.1 1126.1,491.1 1126.6,489.5 1127.1,485.3 1127.6,479.0 1128.1,470.9 1128.6,461.7 1129.1,452.0 1129.6,442.6 1130.1,434.3 1130.6,427.5 1131.1,422.8 1131.6,420.5 1132.1,420.8 1132.6,423.6 1133.1,428.7 1133.6,435.7 1134.1,444.2 1134.6,453.4 1135.1,462.6 1135.6,471.2 1136.1,478.6 1136.6,484.2 1137.1,487.5 1137.6,488.5 1138.1,486.9 1138.6,482.9 1139.1,476.9 1139.6,469.3 1140.1,460.6 1140.6,451.5 1141.1,442.8 1141.6,434.9 1142.1,428.6 1142.6,424.2 1143.1,422.2 1143.6,422.5 1144.1,425.2 1144.6,430.1 1145.1,436.8 1145.6,444.8 1146.1,453.5 1146.6,462.2 1147.1,470.2 1147.6,477.1 1148.1,482.3 1148.6,485.4 1149.1,486.2 1149.6,484.6 1150.1,480.8 1150.6,475.1 1151.1,467.8 1151.6,459.7 1152.1,451.2 1152.6,442.9 1153.1,435.6 1153.6,429.7 1154.1,425.7 1154.6,423.8 1155.1,424.2 1155.6,426.9 1156.1,431.5 1156.6,437.9 1157.1,445.4 1157.6,453.5 1158.1,461.7 1158.6,469.2 1159.1,475.6 1159.6,480.4 1160.0,483.2 1160.5,483.8 1161.0,482.3 1161.5,478.7 1162.0,473.2 1162.5,466.4 1163.0,458.8 1163.5,450.8 1164.0,443.1 1164.5,436.3 1165.0,430.9 1165.5,427.2 1166.0,425.5 1166.5,426.0 1167.0,428.5 1167.5,432.9 1168.0,438.9 1168.5,445.9 1169.0,453.5 1169.5,461.1 1170.0,468.1 1170.5,474.1 1171.0,478.5 1171.5,481.0 1172.0,481.5 1172.5,480.0 1173.0,476.6 1173.5,471.5 1174.0,465.1 1174.5,457.9 1175.0,450.5 1175.5,443.4 1176.0,437.1 1176.5,432.1 1177.0,428.7 1177.5,427.2 1178.0,427.7 1178.5,430.1 1179.0,434.3 1179.5,439.9 1180.0,446.5 1180.5,453.5 1181.0,460.6 1181.5,467.1 1182.0,472.6 1182.5,476.6 1183.0,479.0 1183.5,479.4 1184.0,477.9 1184.5,474.7 1185.0,469.9 1185.5,464.0 1186.0,457.3 1186.5,450.4 1187.0,443.8 1187.5,437.9 1188.0,433.3 1188.5,430.2 1189.0,428.9 1189.5,429.5 1190.0,431.8 1190.5,435.7 1191.0,441.0 1191.5,447.2 1192.0,453.8 1192.5,460.4 1193.0,466.4 1193.5,471.5 1194.0,475.2 1194.5,477.3 1195.0,477.7 1195.5,476.2 1196.0,473.2 1196.5,468.7 1197.0,463.1 1197.5,456.8 1198.0,450.4 1198.5,444.3 1199.0,438.9 1199.5,434.6 1200.0,431.8 1200.5,430.6 1201.0,431.2 1201.5,433.4 1202.0,437.1 1202.5,442.1 1203.0,447.8 1203.5,454.0 1204.0,460.1 1204.5,465.7 1205.0,470.4 1205.5,473.8 1206.0,475.7 1206.5,475.9 1207.0,474.6 1207.5,471.6 1208.0,467.4 1208.5,462.2 1209.0,456.4 1209.5,450.4 1210.0,444.8 1210.5,439.8 1211.0,435.9 1211.5,433.4 1212.0,432.3 1212.5,432.9 1213.0,435.0 1213.5,438.5 1214.0,443.1 1214.5,448.5 1215.0,454.2 1215.5,459.8 1216.0,464.9 1216.5,469.2 1217.0,472.3 1217.5,474.0 1218.0,474.2 1218.5,472.9 1219.0,470.1 1219.5,466.2 1220.0,461.4 1220.5,456.0 1221.0,450.5 1221.5,445.3 1222.0,440.8 1222.5,437.2 1223.0,434.9 1223.5,434.1 1224.0,434.6 1224.5,436.6 1225.0,439.9 1225.5,444.1 1226.0,449.1 1226.5,454.3 1227.0,459.5 1227.5,464.2 1228.0,468.1 1228.5,470.8 1229.0,472.4 1229.5,472.5 1230.0,471.2 1230.5,468.7 1231.0,465.1 1231.5,460.7 1232.0,455.7 1232.5,450.7 1233.0,445.9 1233.5,441.7 1234.0,438.4 1234.5,436.3 1235.0,435.5 1235.5,436.1 1236.0,438.0 1236.5,441.1 1237.0,445.1 1237.5,449.8 1238.0,454.7 1238.5,459.6 1239.0,464.1 1239.5,467.8 1240.0,470.4 1240.5,471.9 1241.0,472.0 1241.5,470.8 1242.0,468.3 1242.5,464.9 1243.0,460.6 1243.5,455.9 1244.0,451.1 1244.5,446.5 1245.0,442.5 1245.5,439.4 1246.0,437.5 1246.5,436.8 1247.0,437.4 1247.5,439.2 1248.0,442.2 1248.5,446.0 1249.0,450.5 1249.5,455.2 1250.0,459.9 1250.5,464.1 1251.0,467.6 1251.5,470.1 1252.0,471.5 1252.5,471.5 1253.0,470.3 1253.5,468.0 1254.0,464.6 1254.5,460.5 1255.0,456.0 1255.5,451.4 1256.0,447.1 1256.5,443.4 1257.0,440.4 1257.5,438.6 1258.0,438.0 1258.5,438.6 1259.0,440.4 1259.5,443.3 1260.0,447.0 1260.5,451.2 1261.0,455.7 1261.5,460.2 1262.0,464.2 1262.5,467.5 1263.0,469.8 1263.5,471.1 1264.0,471.1 1264.5,469.9 1265.0,467.6 1265.5,464.4 1266.0,460.5 1266.5,456.2 1267.0,451.8 1267.5,447.7 1268.0,444.2 1268.5,441.5 1269.0,439.8 1269.5,439.2 1270.0,439.8 1270.5,441.6 1271.0,444.3 1271.5,447.9 1272.0,451.9 1272.5,456.2 1273.0,460.4 1273.5,464.2 1274.0,467.3 1274.5,469.5 1275.0,470.6 1275.5,470.6 1276.0,469.5 1276.5,467.3 1277.0,464.2 1277.5,460.5 1278.0,456.4 1278.5,452.3 1279.0,448.4 1279.5,445.0 1280.0,442.5 1280.5,440.9 1281.0,440.4 1281.5,441.0 1282.0,442.7 1282.5,445.4 1283.0,448.8 1283.5,452.6 1284.0,456.7 1284.5,460.7 1285.0,464.2 1285.5,467.2 1286.0,469.2 1286.5,470.2 1287.0,470.2 1287.5,469.1 1288.0,466.9 1288.5,464.0 1289.0,460.5 1289.5,456.6 1290.0,452.7 1290.5,449.0 1291.0,445.9 1291.5,443.5 1292.0,442.1 1292.5,441.6 1293.0,442.3 1293.5,443.9 1294.0,446.4 1294.5,449.7 1295.0,453.3 1295.0,328.5" fill="none" stroke="#ffffff" stroke-width="1.3" stroke-linejoin="round" /><path d="M913.5 328.5V561M925.5 328.5V561M936.5 328.5V561M947.5 328.5V561M959.5 328.5V561M970.5 328.5V561M982.5 328.5V561M993.5 328.5V561M1004.5 328.5V561M1016.5 328.5V561M1027.5 328.5V561M1039.5 328.5V561M1050.5 328.5V561M1062.5 328.5V561M1073.5 328.5V561M1085.5 328.5V561M1096.5 328.5V561M1108.5 328.5V561" stroke="#f2f27a" stroke-width="1.1"/></g></svg>
<div class="t" style="left:352px;top:300px;font-size:12px">波形图 2</div>
<div class="a" style="left:344px;top:608px;width:89px;height:24px;background:linear-gradient(90deg,#d8d8d8,#c4c4c4 75%,#9c9c9c);border-bottom:1px solid #999"></div><svg class="a" style="left:356px;top:611px" width="80" height="19"><rect x="0.5" y="0.5" width="19" height="17" fill="#d0d0d0" stroke="#b0b0b0" stroke-width="0.8"/><path d="M10 3V16M3.5 9.5H16.5" stroke="#000" stroke-width="1.2"/><circle cx="10" cy="9.5" r="1.6" fill="#fff" stroke="#000" stroke-width="0.9"/><circle cx="3.5" cy="3.5" r="1" fill="#666"/><rect x="21.5" y="0.5" width="19" height="17" fill="#d0d0d0" stroke="#b0b0b0" stroke-width="0.8"/><circle cx="33" cy="7" r="3.8" fill="#fff" stroke="#000" stroke-width="1.1"/><path d="M31 7H35M33 5V9" stroke="#000" stroke-width="0.9"/><path d="M30.5 10L25 15.5" stroke="#000" stroke-width="2"/><path d="M34 13.5H38L36 16Z" fill="#000"/><circle cx="24.5" cy="3.5" r="1" fill="#666"/><rect x="42.5" y="0.5" width="19" height="17" fill="#858a85" stroke="#777" stroke-width="0.8"/><circle cx="45.5" cy="3.5" r="1.3" fill="#60d060"/><path d="M48 12 Q47 7 49 6.5 L50 9.5 L50 3.5 Q51 2.5 52 3.5 L52 8.5 L52.5 2.5 Q53.5 1.5 54.5 2.5 L54.5 8.5 L55.5 3.5 Q56.5 2.5 57.5 3.5 L57.5 11 Q57 16 53 16 Q50 16 48 12Z" fill="#fff" stroke="#000" stroke-width="0.8"/></svg><div class="t" style="left:416px;top:613px;font-size:12.5px;color:#222">x*y</div>
<svg class="a" style="left:375px;top:634px" width="12" height="22"><defs><linearGradient id="sg" x1="0" x2="1"><stop offset="0" stop-color="#c8c8c8"/><stop offset="0.4" stop-color="#ececec"/><stop offset="1" stop-color="#9a9a9a"/></linearGradient></defs><ellipse cx="6" cy="11.0" rx="5.5" ry="10.5" fill="url(#sg)" stroke="#a0a0a0" stroke-width="0.8"/><path d="M3.5 8.5L5.5 4.0L7.5 8.5M3.5 13.5L5.5 18.0L7.5 13.5" stroke="#666" stroke-width="0.9" fill="none"/><path d="M3 11.0H8" stroke="#888" stroke-width="0.8"/></svg>
<div class="num" style="left:389px;top:634px;width:26px;height:22px;line-height:18px;padding-left:3px">0</div>
<div class="ind" style="left:420px;top:637px;width:127px;height:24px;line-height:20px;padding-left:1.5px;background:#d6d6d6;border-left:3px solid #ababab;border-top:2px solid #b4b4b4;border-right:3px solid #ececec;border-bottom:2px solid #ececec">0.00116877</div>
<div class="ind" style="left:550px;top:637px;width:127px;height:24px;line-height:20px;padding-left:1.5px;background:#d6d6d6;border-left:3px solid #ababab;border-top:2px solid #b4b4b4;border-right:3px solid #ececec;border-bottom:2px solid #ececec">0.00119577</div>
<div class="ind" style="left:680px;top:637px;width:127px;height:24px;line-height:20px;padding-left:1.5px;background:#d6d6d6;border-left:3px solid #ababab;border-top:2px solid #b4b4b4;border-right:3px solid #ececec;border-bottom:2px solid #ececec">0.00122274</div>
<div class="ind" style="left:810px;top:637px;width:127px;height:24px;line-height:20px;padding-left:1.5px;background:#d6d6d6;border-left:3px solid #ababab;border-top:2px solid #b4b4b4;border-right:3px solid #ececec;border-bottom:2px solid #ececec">0.00124973</div>
<div class="ind" style="left:940px;top:637px;width:127px;height:24px;line-height:20px;padding-left:1.5px;background:#d6d6d6;border-left:3px solid #ababab;border-top:2px solid #b4b4b4;border-right:3px solid #ececec;border-bottom:2px solid #ececec">0.00127679</div>
<div class="ind" style="left:1070px;top:637px;width:127px;height:24px;line-height:20px;padding-left:1.5px;background:#d6d6d6;border-left:3px solid #ababab;border-top:2px solid #b4b4b4;border-right:3px solid #ececec;border-bottom:2px solid #ececec">0.00130382</div>
<div class="ind" style="left:1200px;top:637px;width:127px;height:24px;line-height:20px;padding-left:1.5px;background:#d6d6d6;border-left:3px solid #ababab;border-top:2px solid #b4b4b4;border-right:3px solid #ececec;border-bottom:2px solid #ececec">0.00133085</div>
<div class="ind" style="left:1329px;top:637px;width:127px;height:24px;line-height:20px;padding-left:1.5px;background:#d6d6d6;border-left:3px solid #ababab;border-top:2px solid #b4b4b4;border-right:3px solid #ececec;border-bottom:2px solid #ececec">0.00135674</div>
<div class="ind" style="left:1459px;top:637px;width:127px;height:24px;line-height:20px;padding-left:1.5px;background:#d6d6d6;border-left:3px solid #ababab;border-top:2px solid #b4b4b4;border-right:3px solid #ececec;border-bottom:2px solid #ececec">0.00138393</div>
<div class="ind" style="left:1589px;top:637px;width:127px;height:24px;line-height:20px;padding-left:1.5px;background:#d6d6d6;border-left:3px solid #ababab;border-top:2px solid #b4b4b4;border-right:3px solid #ececec;border-bottom:2px solid #ececec">0.00141115</div>
<div class="ind" style="left:1719px;top:637px;width:127px;height:24px;line-height:20px;padding-left:1.5px;background:#d6d6d6;border-left:3px solid #ababab;border-top:2px solid #b4b4b4;border-right:3px solid #ececec;border-bottom:2px solid #ececec">0.0014384</div>
<div class="ind" style="left:1849px;top:637px;width:53px;height:24px;line-height:20px;padding-left:1.5px;background:#d6d6d6;border-left:3px solid #ababab;border-top:2px solid #b4b4b4;border-right:3px solid #ececec;border-bottom:2px solid #ececec">0.00146</div>
<svg class="a" style="left:0;top:0" width="1920" height="1080"><rect x="368" y="704" width="1102" height="287" fill="#c3c3c3"/><rect x="368" y="704" width="9" height="287" fill="#d4d4d4"/><rect x="368" y="704" width="1102" height="5" fill="#d2d2d2"/><rect x="377" y="709" width="1093" height="1" fill="#c9c9c9"/><rect x="1458" y="704" width="12" height="287" fill="url(#rbev)"/><rect x="368" y="988" width="1102" height="2" fill="#b4b4b4"/><rect x="368" y="990" width="1102" height="1" fill="#8e8e8e"/><rect x="368" y="704" width="11" height="285" fill="#d4d4d4"/><rect x="368" y="989" width="11" height="2" fill="#9a9a9a"/><rect x="434.4" y="712.7" width="1012.30" height="231.80" fill="#000"/><path d="M443.5 712.7V944.5M452.5 712.7V944.5M462.5 712.7V944.5M471.5 712.7V944.5M480.5 712.7V944.5M489.5 712.7V944.5M498.5 712.7V944.5M508.5 712.7V944.5M517.5 712.7V944.5M535.5 712.7V944.5M544.5 712.7V944.5M554.5 712.7V944.5M563.5 712.7V944.5M572.5 712.7V944.5M581.5 712.7V944.5M590.5 712.7V944.5M600.5 712.7V944.5M609.5 712.7V944.5M627.5 712.7V944.5M636.5 712.7V944.5M646.5 712.7V944.5M655.5 712.7V944.5M664.5 712.7V944.5M673.5 712.7V944.5M682.5 712.7V944.5M692.5 712.7V944.5M701.5 712.7V944.5M719.5 712.7V944.5M728.5 712.7V944.5M738.5 712.7V944.5M747.5 712.7V944.5M756.5 712.7V944.5M765.5 712.7V944.5M774.5 712.7V944.5M784.5 712.7V944.5M793.5 712.7V944.5M811.5 712.7V944.5M820.5 712.7V944.5M830.5 712.7V944.5M839.5 712.7V944.5M848.5 712.7V944.5M857.5 712.7V944.5M866.5 712.7V944.5M876.5 712.7V944.5M885.5 712.7V944.5M903.5 712.7V944.5M912.5 712.7V944.5M922.5 712.7V944.5M931.5 712.7V944.5M940.5 712.7V944.5M949.5 712.7V944.5M958.5 712.7V944.5M968.5 712.7V944.5M977.5 712.7V944.5M995.5 712.7V944.5M1004.5 712.7V944.5M1014.5 712.7V944.5M1023.5 712.7V944.5M1032.5 712.7V944.5M1041.5 712.7V944.5M1050.5 712.7V944.5M1060.5 712.7V944.5M1069.5 712.7V944.5M1087.5 712.7V944.5M1096.5 712.7V944.5M1106.5 712.7V944.5M1115.5 712.7V944.5M1124.5 712.7V944.5M1133.5 712.7V944.5M1143.5 712.7V944.5M1152.5 712.7V944.5M1161.5 712.7V944.5M1179.5 712.7V944.5M1189.5 712.7V944.5M1198.5 712.7V944.5M1207.5 712.7V944.5M1216.5 712.7V944.5M1225.5 712.7V944.5M1235.5 712.7V944.5M1244.5 712.7V944.5M1253.5 712.7V944.5M1271.5 712.7V944.5M1281.5 712.7V944.5M1290.5 712.7V944.5M1299.5 712.7V944.5M1308.5 712.7V944.5M1317.5 712.7V944.5M1327.5 712.7V944.5M1336.5 712.7V944.5M1345.5 712.7V944.5M1363.5 712.7V944.5M1373.5 712.7V944.5M1382.5 712.7V944.5M1391.5 712.7V944.5M1400.5 712.7V944.5M1409.5 712.7V944.5M1419.5 712.7V944.5M1428.5 712.7V944.5M1437.5 712.7V944.5M434.4 718.5H1446.7M434.4 724.5H1446.7M434.4 730.5H1446.7M434.4 741.5H1446.7M434.4 747.5H1446.7M434.4 753.5H1446.7M434.4 764.5H1446.7M434.4 770.5H1446.7M434.4 776.5H1446.7M434.4 788.5H1446.7M434.4 793.5H1446.7M434.4 799.5H1446.7M434.4 811.5H1446.7M434.4 817.5H1446.7M434.4 822.5H1446.7M434.4 834.5H1446.7M434.4 840.5H1446.7M434.4 845.5H1446.7M434.4 857.5H1446.7M434.4 863.5H1446.7M434.4 869.5H1446.7M434.4 880.5H1446.7M434.4 886.5H1446.7M434.4 892.5H1446.7M434.4 903.5H1446.7M434.4 909.5H1446.7M434.4 915.5H1446.7M434.4 927.5H1446.7M434.4 932.5H1446.7M434.4 938.5H1446.7" stroke="#163a1c" stroke-width="1" fill="none"/><path d="M526.5 712.7V944.5M618.5 712.7V944.5M710.5 712.7V944.5M802.5 712.7V944.5M894.5 712.7V944.5M986.5 712.7V944.5M1078.5 712.7V944.5M1170.5 712.7V944.5M1262.5 712.7V944.5M1354.5 712.7V944.5M434.4 735.5H1446.7M434.4 759.5H1446.7M434.4 782.5H1446.7M434.4 805.5H1446.7M434.4 828.5H1446.7M434.4 851.5H1446.7M434.4 874.5H1446.7M434.4 898.5H1446.7M434.4 921.5H1446.7" stroke="#2c6e34" stroke-width="1" fill="none"/><path d="M434.5 712.7V944.5H1446.5V712.7" stroke="#e8e8e8" fill="none" stroke-width="1"/><g font-size="12.5px"><text x="434.4" y="965" text-anchor="middle">0</text><rect x="433.8" y="947" width="1.3" height="6" fill="#000"/><text x="526.4" y="965" text-anchor="middle">0.0002</text><rect x="525.8" y="947" width="1.3" height="6" fill="#000"/><text x="618.5" y="965" text-anchor="middle">0.0004</text><rect x="617.9" y="947" width="1.3" height="6" fill="#000"/><text x="710.5" y="965" text-anchor="middle">0.0006</text><rect x="709.9" y="947" width="1.3" height="6" fill="#000"/><text x="802.5" y="965" text-anchor="middle">0.0008</text><rect x="801.9" y="947" width="1.3" height="6" fill="#000"/><text x="894.5" y="965" text-anchor="middle">0.001</text><rect x="893.9" y="947" width="1.3" height="6" fill="#000"/><text x="986.6" y="965" text-anchor="middle">0.0012</text><rect x="986.0" y="947" width="1.3" height="6" fill="#000"/><text x="1078.6" y="965" text-anchor="middle">0.0014</text><rect x="1078.0" y="947" width="1.3" height="6" fill="#000"/><text x="1170.6" y="965" text-anchor="middle">0.0016</text><rect x="1170.0" y="947" width="1.3" height="6" fill="#000"/><text x="1262.6" y="965" text-anchor="middle">0.0018</text><rect x="1262.0" y="947" width="1.3" height="6" fill="#000"/><text x="1354.7" y="965" text-anchor="middle">0.002</text><rect x="1354.1" y="947" width="1.3" height="6" fill="#000"/><text x="1446.7" y="965" text-anchor="middle">0.0022</text><rect x="1446.1" y="947" width="1.3" height="6" fill="#000"/><text x="426.5" y="718.0" text-anchor="end">0</text><rect x="427" y="712.9" width="6" height="1.3" fill="#000"/><text x="426.5" y="741.2" text-anchor="end">-0.2</text><rect x="427" y="736.1" width="6" height="1.3" fill="#000"/><text x="426.5" y="764.4" text-anchor="end">-0.4</text><rect x="427" y="759.3" width="6" height="1.3" fill="#000"/><text x="426.5" y="787.5" text-anchor="end">-0.6</text><rect x="427" y="782.4" width="6" height="1.3" fill="#000"/><text x="426.5" y="810.7" text-anchor="end">-0.8</text><rect x="427" y="805.6" width="6" height="1.3" fill="#000"/><text x="426.5" y="833.9" text-anchor="end">-1</text><rect x="427" y="828.8" width="6" height="1.3" fill="#000"/><text x="426.5" y="857.1" text-anchor="end">-1.2</text><rect x="427" y="852.0" width="6" height="1.3" fill="#000"/><text x="426.5" y="880.3" text-anchor="end">-1.4</text><rect x="427" y="875.2" width="6" height="1.3" fill="#000"/><text x="426.5" y="903.4" text-anchor="end">-1.6</text><rect x="427" y="898.3" width="6" height="1.3" fill="#000"/><text x="426.5" y="926.6" text-anchor="end">-1.8</text><rect x="427" y="921.5" width="6" height="1.3" fill="#000"/><text x="426.5" y="949.8" text-anchor="end">-2</text><rect x="427" y="944.7" width="6" height="1.3" fill="#000"/></g><text x="939" y="983" font-size="12" text-anchor="middle">时间</text><text transform="translate(395,828) rotate(-90)" font-size="12" text-anchor="middle">幅值</text><clipPath id="c3"><rect x="433" y="711" width="1014" height="234"/></clipPath><g clip-path="url(#c3)"><path d="M435.5 712.7V836" stroke="#d02838" stroke-width="2"/><polyline points="435.5,712.7 435.5,836.7 435.5,836.7 434.9,836.2 435.4,836.2 435.9,836.2 436.4,836.2 436.9,836.2 437.4,836.2 437.9,836.2 438.4,836.2 438.9,836.2 439.4,836.2 439.9,836.2 440.4,836.2 440.9,836.2 441.4,836.2 441.9,836.2 442.4,836.2 442.9,836.2 443.4,836.2 443.9,836.2 444.4,836.2 444.9,836.2 445.4,836.2 445.9,836.2 446.4,836.2 446.9,836.2 447.4,836.2 447.9,836.2 448.4,836.2 448.9,836.2 449.4,836.2 449.9,836.2 450.4,836.2 450.9,836.2 451.4,836.2 451.9,836.2 452.4,836.2 452.9,836.2 453.4,836.2 453.9,836.2 454.4,836.2 454.9,836.2 455.4,836.2 455.9,836.2 456.4,836.2 456.9,836.2 457.4,836.2 457.9,836.2 458.4,836.2 458.9,836.2 459.4,836.2 459.9,836.2 460.4,836.2 460.9,836.2 461.4,836.2 461.9,836.2 462.4,836.2 462.9,836.2 463.4,836.2 463.9,836.2 464.4,836.2 464.9,836.2 465.4,836.2 465.9,836.2 466.4,836.2 466.9,836.2 467.4,836.2 467.9,836.2 468.4,836.2 468.9,836.2 469.4,836.2 469.9,836.2 470.4,836.2 470.9,836.2 471.4,836.2 471.9,836.2 472.4,836.2 472.9,836.2 473.4,836.2 473.9,836.2 474.4,836.2 474.9,836.2 475.4,836.2 475.9,836.2 476.4,836.2 476.9,836.2 477.4,836.2 477.9,836.2 478.4,836.2 478.9,836.2 479.4,836.2 479.9,836.2 480.4,836.2 480.9,836.2 481.4,836.2 481.9,836.2 482.4,836.2 482.9,836.2 483.4,836.2 483.9,836.2 484.4,836.2 484.9,836.2 485.4,836.2 485.9,836.2 486.4,836.2 486.9,836.2 487.4,836.2 487.9,836.2 488.4,836.2 488.9,836.2 489.4,836.2 489.9,836.2 490.4,836.2 490.9,836.2 491.4,836.2 491.9,836.2 492.4,836.2 492.9,836.2 493.4,836.2 493.9,836.2 494.4,836.2 494.9,836.2 495.4,836.2 495.9,836.2 496.4,836.2 496.9,836.2 497.4,836.2 497.9,836.2 498.4,836.2 498.9,836.2 499.4,836.2 499.9,836.2 500.4,836.2 500.9,836.2 501.4,836.2 501.9,836.2 502.4,836.2 502.9,836.2 503.4,836.2 503.9,836.2 504.4,836.2 504.9,836.2 505.4,836.2 505.9,836.2 506.4,836.2 506.9,836.2 507.4,836.2 507.9,836.2 508.4,836.2 508.9,836.2 509.4,836.2 509.9,836.2 510.4,836.2 510.9,836.2 511.4,836.2 511.9,836.2 512.4,836.2 512.9,836.2 513.4,836.2 513.9,836.2 514.4,836.2 514.9,836.2 515.4,836.2 515.9,836.2 516.4,836.2 516.9,836.2 517.4,836.2 517.9,836.2 518.4,836.2 518.9,836.2 519.4,836.2 519.9,836.2 520.4,836.2 520.9,836.2 521.4,836.2 521.9,836.2 522.4,836.2 522.9,836.2 523.4,836.2 523.9,836.2 524.4,836.2 524.9,836.2 525.4,836.2 525.9,836.2 526.4,836.2 526.8,836.2 527.3,836.2 527.8,836.2 528.3,836.2 528.8,836.2 529.3,836.2 529.8,836.2 530.3,836.2 530.8,836.2 531.3,836.2 531.8,836.2 532.3,836.2 532.8,836.2 533.3,836.2 533.8,836.2 534.3,836.2 534.8,836.2 535.3,836.2 535.8,836.2 536.3,836.2 536.8,836.2 537.3,836.2 537.8,836.2 538.3,836.2 538.8,836.2 539.3,836.2 539.8,836.2 540.3,836.2 540.8,836.2 541.3,836.2 541.8,836.2 542.3,836.2 542.8,836.2 543.3,836.2 543.8,836.2 544.3,836.2 544.8,836.2 545.3,836.2 545.8,836.2 546.3,836.2 546.8,836.2 547.3,836.2 547.8,836.2 548.3,836.2 548.8,836.2 549.3,836.2 549.8,836.2 550.3,836.2 550.8,836.2 551.3,836.2 551.8,836.2 552.3,836.2 552.8,836.2 553.3,836.2 553.8,836.2 554.3,836.2 554.8,836.2 555.3,836.2 555.8,836.2 556.3,836.2 556.8,836.2 557.3,836.2 557.8,836.2 558.3,836.2 558.8,836.2 559.3,836.2 559.8,836.2 560.3,836.2 560.8,836.2 561.3,836.2 561.8,836.2 562.3,836.2 562.8,836.2 563.3,836.2 563.8,836.2 564.3,836.2 564.8,836.2 565.3,836.2 565.8,836.2 566.3,836.2 566.8,836.2 567.3,836.2 567.8,836.2 568.3,836.2 568.8,836.2 569.3,836.2 569.8,836.2 570.3,836.2 570.8,836.2 571.3,836.2 571.8,836.2 572.3,836.2 572.8,836.2 573.3,836.2 573.8,836.2 574.3,836.2 574.8,836.2 575.3,836.2 575.8,836.2 576.3,836.2 576.8,836.2 577.3,836.2 577.8,836.2 578.3,836.2 578.8,836.2 579.3,836.2 579.8,836.2 580.3,836.2 580.8,836.2 581.3,836.2 581.8,836.2 582.3,836.2 582.8,836.2 583.3,836.2 583.8,836.2 584.3,836.2 584.8,836.2 585.3,836.2 585.8,836.2 586.3,836.2 586.8,836.2 587.3,836.2 587.8,836.2 588.3,836.2 588.8,836.2 589.3,836.2 589.8,836.2 590.3,836.2 590.8,836.2 591.3,836.2 591.8,836.2 592.3,836.2 592.8,836.2 593.3,836.2 593.8,836.2 594.3,836.2 594.8,836.2 595.3,836.2 595.8,836.2 596.3,836.2 596.8,836.2 597.3,836.2 597.8,836.2 598.3,836.2 598.8,836.2 599.3,836.2 599.8,836.2 600.3,836.2 600.8,836.2 601.3,836.2 601.8,836.2 602.3,836.2 602.8,836.2 603.3,836.2 603.8,836.2 604.3,836.2 604.8,836.2 605.3,836.2 605.8,836.2 606.3,836.2 606.8,836.2 607.3,836.2 607.8,836.2 608.3,836.2 608.8,836.2 609.3,836.2 609.8,836.2 610.3,836.2 610.8,836.2 611.3,836.2 611.8,836.2 612.3,836.2 612.8,836.2 613.3,836.2 613.8,836.2 614.3,836.2 614.8,836.2 615.3,836.2 615.8,836.2 616.3,836.2 616.8,836.2 617.3,836.2 617.8,836.2 618.3,836.2 618.8,836.2 619.3,836.2 619.8,836.2 620.3,836.2 620.8,836.2 621.3,836.2 621.8,836.2 622.3,836.2 622.8,836.2 623.3,836.2 623.8,836.2 624.3,836.2 624.8,836.2 625.3,836.2 625.8,836.2 626.3,836.2 626.8,836.2 627.3,836.2 627.8,836.2 628.3,836.2 628.8,836.2 629.3,836.2 629.8,836.2 630.3,836.2 630.8,836.2 631.3,836.2 631.8,836.2 632.3,836.2 632.8,836.2 633.3,836.2 633.8,836.2 634.3,836.2 634.8,836.2 635.3,836.2 635.8,836.2 636.3,836.2 636.8,836.2 637.3,836.2 637.8,836.2 638.3,836.2 638.8,836.2 639.3,836.2 639.8,836.2 640.3,836.2 640.8,836.2 641.3,836.2 641.8,836.2 642.3,836.2 642.8,836.2 643.3,836.2 643.8,836.2 644.3,836.2 644.8,836.2 645.3,836.2 645.8,836.2 646.3,836.2 646.8,836.2 647.3,836.2 647.8,836.2 648.3,836.2 648.8,836.2 649.3,836.2 649.8,836.2 650.3,836.2 650.8,836.2 651.3,836.2 651.8,836.2 652.3,836.2 652.8,836.2 653.3,836.2 653.8,836.2 654.3,836.2 654.8,836.2 655.3,836.2 655.8,836.2 656.3,836.2 656.8,836.2 657.3,836.2 657.8,836.2 658.3,836.2 658.8,836.2 659.3,836.2 659.8,836.2 660.3,836.2 660.8,836.2 661.3,836.2 661.8,836.2 662.3,836.2 662.8,836.2 663.3,836.2 663.8,836.2 664.3,836.2 664.8,836.2 665.3,836.2 665.8,836.2 666.3,836.2 666.8,836.2 667.3,836.2 667.8,836.2 668.3,836.2 668.8,836.2 669.3,836.2 669.8,836.2 670.3,836.2 670.8,836.2 671.3,836.2 671.8,836.2 672.3,836.2 672.8,836.2 673.3,836.2 673.8,836.2 674.3,836.2 674.8,836.2 675.3,836.2 675.8,836.2 676.3,836.2 676.8,836.2 677.3,836.2 677.8,836.2 678.3,836.2 678.8,836.2 679.3,836.2 679.8,836.2 680.3,836.2 680.8,836.2 681.3,836.2 681.8,836.2 682.3,836.2 682.8,836.2 683.3,836.2 683.8,836.2 684.3,836.2 684.8,836.2 685.3,836.2 685.8,836.2 686.3,836.2 686.8,836.2 687.3,836.2 687.8,836.2 688.3,836.2 688.8,836.2 689.3,836.2 689.8,836.2 690.3,836.2 690.8,836.2 691.3,836.2 691.8,836.2 692.3,836.2 692.8,836.2 693.3,836.2 693.8,836.2 694.3,836.2 694.8,836.2 695.3,836.2 695.8,836.2 696.3,836.2 696.8,836.2 697.3,836.2 697.8,836.2 698.3,836.2 698.8,836.2 699.3,836.2 699.8,836.2 700.3,836.2 700.8,836.2 701.3,836.2 701.8,836.2 702.3,836.2 702.8,836.2 703.3,836.2 703.8,836.2 704.3,836.2 704.8,836.2 705.3,836.2 705.8,836.2 706.3,836.2 706.8,836.2 707.3,836.2 707.8,836.2 708.3,836.2 708.8,836.2 709.3,836.2 709.8,836.2 710.3,836.2 710.7,836.2 711.2,836.2 711.7,836.2 712.2,836.2 712.7,836.2 713.2,836.2 713.7,836.2 714.2,836.2 714.7,836.2 715.2,836.2 715.7,836.2 716.2,836.2 716.7,836.2 717.2,836.2 717.7,836.2 718.2,836.2 718.7,836.2 719.2,836.2 719.7,836.2 720.2,836.2 720.7,836.2 721.2,836.2 721.7,836.2 722.2,836.2 722.7,836.2 723.2,836.2 723.7,836.2 724.2,836.2 724.7,836.2 725.2,836.2 725.7,836.2 726.2,836.2 726.7,836.2 727.2,836.2 727.7,836.2 728.2,836.2 728.7,836.2 729.2,836.2 729.7,836.2 730.2,836.2 730.7,836.2 731.2,836.2 731.7,836.2 732.2,836.2 732.7,836.2 733.2,836.2 733.7,836.2 734.2,836.2 734.7,836.2 735.2,836.2 735.7,836.2 736.2,836.2 736.7,836.2 737.2,836.2 737.7,836.2 738.2,836.2 738.7,836.2 739.2,836.2 739.7,836.2 740.2,836.2 740.7,836.2 741.2,836.2 741.7,836.2 742.2,836.2 742.7,836.2 743.2,836.2 743.7,836.2 744.2,836.2 744.7,836.2 745.2,836.2 745.7,836.2 746.2,836.2 746.7,836.2 747.2,836.2 747.7,836.2 748.2,836.2 748.7,836.2 749.2,836.2 749.7,836.2 750.2,836.2 750.7,836.2 751.2,836.2 751.7,836.2 752.2,836.2 752.7,836.2 753.2,836.2 753.7,836.2 754.2,836.2 754.7,836.2 755.2,836.2 755.7,836.2 756.2,836.2 756.7,836.2 757.2,836.2 757.7,836.2 758.2,836.2 758.7,836.2 759.2,836.2 759.7,836.2 760.2,836.2 760.7,836.2 761.2,836.2 761.7,836.2 762.2,836.2 762.7,836.2 763.2,836.2 763.7,836.2 764.2,836.2 764.7,836.2 765.2,836.2 765.7,836.2 766.2,836.2 766.7,836.2 767.2,836.2 767.7,836.2 768.2,836.2 768.7,836.2 769.2,836.2 769.7,836.2 770.2,836.2 770.7,836.2 771.2,836.2 771.7,836.2 772.2,836.2 772.7,836.2 773.2,836.2 773.7,836.2 774.2,836.2 774.7,836.2 775.2,836.2 775.7,836.2 776.2,836.2 776.7,836.2 777.2,836.2 777.7,836.2 778.2,836.2 778.7,836.2 779.2,836.2 779.7,836.2 780.2,836.2 780.7,836.2 781.2,836.2 781.7,836.2 782.2,836.2 782.7,836.2 783.2,836.2 783.7,836.2 784.2,836.2 784.7,836.2 785.2,836.2 785.7,836.2 786.2,836.2 786.7,836.2 787.2,836.2 787.7,836.2 788.2,836.2 788.7,836.2 789.2,836.2 789.7,836.2 790.2,836.2 790.7,836.2 791.2,836.2 791.7,836.2 792.2,836.2 792.7,836.2 793.2,836.2 793.7,836.2 794.2,836.2 794.7,836.2 795.2,836.2 795.7,836.2 796.2,836.2 796.7,836.2 797.2,836.2 797.7,836.2 798.2,836.2 798.7,836.2 799.2,836.2 799.7,836.2 800.2,836.2 800.7,836.2 801.2,836.2 801.7,836.2 802.2,836.2 802.7,836.2 803.2,836.2 803.7,836.2 804.2,836.2 804.7,836.2 805.2,836.2 805.7,836.2 806.2,836.2 806.7,836.2 807.2,836.2 807.7,836.2 808.2,836.2 808.7,836.2 809.2,836.2 809.7,836.2 810.2,836.2 810.7,836.2 811.2,836.2 811.7,836.2 812.2,836.2 812.7,836.2 813.2,836.2 813.7,836.2 814.2,836.2 814.7,836.2 815.2,836.2 815.7,836.2 816.2,836.2 816.7,836.2 817.2,836.2 817.7,836.2 818.2,836.2 818.7,836.2 819.2,836.2 819.7,836.2 820.2,836.2 820.7,836.2 821.2,836.2 821.7,836.2 822.2,836.2 822.7,836.2 823.2,836.2 823.7,836.2 824.2,836.2 824.7,836.2 825.2,836.2 825.7,836.2 826.2,836.2 826.7,836.2 827.2,836.2 827.7,836.2 828.2,836.2 828.7,836.2 829.2,836.2 829.7,836.2 830.2,836.2 830.7,836.2 831.2,836.2 831.7,836.2 832.2,836.2 832.7,836.2 833.2,836.2 833.7,836.2 834.2,836.2 834.7,836.2 835.2,836.2 835.7,836.2 836.2,836.2 836.7,836.2 837.2,836.2 837.7,836.2 838.2,836.2 838.7,836.2 839.2,836.2 839.7,836.2 840.2,836.2 840.7,836.2 841.2,836.2 841.7,836.2 842.2,836.2 842.7,836.2 843.2,836.2 843.7,836.2 844.2,836.2 844.7,836.2 845.2,836.2 845.7,836.2 846.2,836.2 846.7,836.2 847.2,836.2 847.7,836.2 848.2,836.2 848.7,836.2 849.2,836.2 849.7,836.2 850.2,836.2 850.7,836.2 851.2,836.2 851.7,836.2 852.2,836.2 852.7,836.2 853.2,836.2 853.7,836.2 854.2,836.2 854.7,836.2 855.2,836.2 855.7,836.2 856.2,836.2 856.7,816.8 857.2,796.6 857.7,779.0 858.2,765.0 858.7,755.5 859.2,751.2 859.7,752.3 860.2,758.7 860.7,770.0 861.2,785.6 861.7,804.4 862.2,825.3 862.7,846.8 863.2,867.8 863.7,886.7 864.2,902.5 864.7,914.2 865.2,920.9 865.7,922.3 866.2,918.3 866.7,909.2 867.2,895.4 867.7,877.9 868.2,857.9 868.7,836.5 869.2,815.1 869.7,795.1 870.2,777.7 870.7,764.0 871.2,755.0 871.7,751.1 872.2,752.6 872.7,759.5 873.2,771.2 873.7,787.1 874.2,806.1 874.7,827.1 875.2,848.6 875.7,869.5 876.2,888.2 876.7,903.7 877.2,914.9 877.7,921.2 878.2,922.2 878.7,917.7 879.2,908.2 879.7,894.1 880.2,876.3 880.7,856.1 881.2,834.7 881.7,813.3 882.2,793.5 882.7,776.4 883.2,763.1 883.7,754.4 884.2,751.0 884.7,753.0 885.2,760.3 885.7,772.4 886.2,788.6 886.7,807.8 887.2,828.9 887.7,850.4 888.2,871.1 888.7,889.6 889.2,904.8 889.7,915.7 890.2,921.5 890.7,922.0 891.2,917.1 891.7,907.1 892.2,892.7 892.7,874.7 893.2,854.3 893.7,832.8 894.2,811.6 894.6,791.9 895.1,775.1 895.6,762.2 896.1,753.9 896.6,751.0 897.1,753.4 897.6,761.1 898.1,773.6 898.6,790.1 899.1,809.5 899.6,830.7 900.1,852.2 900.6,872.8 901.1,891.1 901.6,905.9 902.1,916.4 902.6,921.8 903.1,921.8 903.6,916.5 904.1,906.1 904.6,891.3 905.1,873.1 905.6,852.6 906.1,831.0 906.6,809.9 907.1,790.4 907.6,773.8 908.1,761.3 908.6,753.5 909.1,751.0 909.6,753.8 910.1,762.0 910.6,774.8 911.1,791.6 911.6,811.3 912.1,832.5 912.6,854.0 913.1,874.4 913.6,892.4 914.1,906.9 914.6,917.0 915.1,922.0 915.6,921.6 916.1,915.8 916.6,905.0 917.1,889.9 917.6,871.4 918.1,850.8 918.6,829.2 919.1,808.1 919.6,788.9 920.1,772.6 920.6,760.4 921.1,753.1 921.6,751.0 922.1,754.3 922.6,762.9 923.1,776.1 923.6,793.2 924.1,813.0 924.6,834.3 925.1,855.8 925.6,876.0 926.1,893.8 926.6,908.0 927.1,917.6 927.6,922.2 928.1,921.3 928.6,915.1 929.1,903.9 929.6,888.5 930.1,869.8 930.6,849.0 931.1,827.4 931.6,806.4 932.1,787.4 932.6,771.4 933.1,759.6 933.6,752.7 934.1,751.1 934.6,754.9 935.1,763.8 935.6,777.4 936.1,794.8 936.6,814.7 937.1,836.1 937.6,857.5 938.1,877.6 938.6,895.2 939.1,909.0 939.6,918.2 940.1,922.3 940.6,921.0 941.1,914.3 941.6,902.8 942.1,887.0 942.6,868.1 943.1,847.2 943.6,825.6 944.1,804.7 944.6,785.9 945.1,770.3 945.6,758.8 946.1,752.3 946.6,751.2 947.1,755.4 947.6,764.8 948.1,778.7 948.6,796.3 949.1,816.5 949.6,837.9 950.1,859.3 950.6,879.2 951.1,896.5 951.6,909.9 952.1,918.8 952.6,922.4 953.1,920.6 953.6,913.5 954.1,901.6 954.6,885.5 955.1,866.4 955.6,845.4 956.1,823.8 956.6,803.1 957.1,784.4 957.6,769.1 958.1,758.1 958.6,752.0 959.1,751.3 959.6,756.0 960.1,765.8 960.6,780.1 961.1,798.0 961.6,818.3 962.1,839.8 962.6,861.0 963.1,880.8 963.6,897.8 964.1,910.9 964.6,919.3 965.1,922.5 965.6,920.2 966.1,912.7 966.6,900.4 967.1,884.0 967.6,864.7 968.1,843.6 968.6,822.0 969.1,801.4 969.6,783.0 970.1,768.0 970.6,757.4 971.1,751.8 971.6,751.5 972.1,756.6 972.6,766.8 973.1,781.5 973.6,799.6 974.1,820.0 974.6,841.6 975.1,862.8 975.6,882.3 976.1,899.0 976.6,911.8 977.1,919.7 977.6,922.5 978.1,919.8 978.6,911.8 979.1,899.2 979.6,882.5 980.1,863.0 980.6,841.8 981.1,820.2 981.6,799.8 982.1,781.6 982.6,767.0 983.1,756.7 983.6,751.5 984.1,751.7 984.6,757.3 985.1,767.9 985.6,782.9 986.1,801.2 986.6,821.8 987.1,843.4 987.6,864.5 988.1,883.9 988.6,900.2 989.1,912.6 989.6,920.2 990.1,922.5 990.6,919.3 991.1,911.0 991.6,897.9 992.1,881.0 992.6,861.2 993.1,840.0 993.6,818.5 994.1,798.1 994.6,780.2 995.1,765.9 995.6,756.1 996.1,751.3 996.6,752.0 997.1,758.0 997.6,769.0 998.1,784.3 998.6,802.9 999.1,823.6 999.6,845.2 1000.1,866.2 1000.6,885.4 1001.1,901.5 1001.6,913.4 1002.1,920.6 1002.6,922.4 1003.1,918.8 1003.6,910.0 1004.1,896.6 1004.6,879.4 1005.1,859.5 1005.6,838.1 1006.1,816.7 1006.6,796.5 1007.1,778.9 1007.6,764.9 1008.1,755.5 1008.6,751.2 1009.1,752.3 1009.6,758.8 1010.1,770.1 1010.6,785.7 1011.1,804.6 1011.6,825.4 1012.1,847.0 1012.6,867.9 1013.1,886.9 1013.6,902.6 1014.1,914.2 1014.6,920.9 1015.1,922.3 1015.6,918.3 1016.1,909.1 1016.6,895.3 1017.1,877.8 1017.6,857.7 1018.1,836.3 1018.6,814.9 1019.1,794.9 1019.6,777.6 1020.1,763.9 1020.6,754.9 1021.1,751.1 1021.6,752.6 1022.1,759.5 1022.6,771.3 1023.1,787.2 1023.6,806.2 1024.1,827.2 1024.6,848.8 1025.1,869.6 1025.6,888.3 1026.1,903.8 1026.6,915.0 1027.1,921.3 1027.6,922.2 1028.1,917.7 1028.6,908.1 1029.1,894.0 1029.6,876.2 1030.1,856.0 1030.6,834.5 1031.1,813.2 1031.6,793.4 1032.1,776.3 1032.6,763.0 1033.1,754.4 1033.6,751.0 1034.1,753.0 1034.6,760.3 1035.1,772.5 1035.6,788.7 1036.1,807.9 1036.6,829.0 1037.1,850.6 1037.6,871.3 1038.1,889.7 1038.6,904.9 1039.1,915.7 1039.6,921.5 1040.1,922.0 1040.6,917.1 1041.1,907.1 1041.6,892.6 1042.1,874.6 1042.6,854.2 1043.1,832.7 1043.6,811.4 1044.1,791.8 1044.6,775.0 1045.1,762.1 1045.6,753.9 1046.1,751.0 1046.6,753.4 1047.1,761.2 1047.6,773.7 1048.1,790.2 1048.6,809.7 1049.1,830.8 1049.6,852.4 1050.1,872.9 1050.6,891.2 1051.1,906.0 1051.6,916.4 1052.1,921.8 1052.6,921.8 1053.1,916.4 1053.6,906.0 1054.1,891.2 1054.6,873.0 1055.1,852.4 1055.6,830.9 1056.1,836.2 1056.6,836.2 1057.1,836.2 1057.6,836.2 1058.1,836.2 1058.6,836.2 1059.1,836.2 1059.6,836.2 1060.1,836.2 1060.6,836.2 1061.1,836.2 1061.6,836.2 1062.1,836.2 1062.6,836.2 1063.1,836.2 1063.6,836.2 1064.1,836.2 1064.6,836.2 1065.1,836.2 1065.6,836.2 1066.1,836.2 1066.6,836.2 1067.1,836.2 1067.6,836.2 1068.1,836.2 1068.6,836.2 1069.1,836.2 1069.6,836.2 1070.1,836.2 1070.6,836.2 1071.1,836.2 1071.6,836.2 1072.1,836.2 1072.6,836.2 1073.1,836.2 1073.6,836.2 1074.1,836.2 1074.6,836.2 1075.1,836.2 1075.6,836.2 1076.1,836.2 1076.6,836.2 1077.1,836.2 1077.6,836.2 1078.1,836.2 1078.5,836.2 1079.0,836.2 1079.5,836.2 1080.0,836.2 1080.5,836.2 1081.0,836.2 1081.5,836.2 1082.0,836.2 1082.5,836.2 1083.0,836.2 1083.5,836.2 1084.0,836.2 1084.5,836.2 1085.0,836.2 1085.5,836.2 1086.0,836.2 1086.5,836.2 1087.0,836.2 1087.5,836.2 1088.0,836.2 1088.5,836.2 1089.0,836.2 1089.5,836.2 1090.0,836.2 1090.5,836.2 1091.0,836.2 1091.5,836.2 1092.0,836.2 1092.5,836.2 1093.0,836.2 1093.5,836.2 1094.0,836.2 1094.5,836.2 1095.0,836.2 1095.5,836.2 1096.0,836.2 1096.5,836.2 1097.0,836.2 1097.5,836.2 1098.0,836.2 1098.5,836.2 1099.0,836.2 1099.5,836.2 1100.0,836.2 1100.5,836.2 1101.0,836.2 1101.5,836.2 1102.0,836.2 1102.5,836.2 1103.0,836.2 1103.5,836.2 1104.0,836.2 1104.5,836.2 1105.0,836.2 1105.5,836.2 1106.0,836.2 1106.5,836.2 1107.0,836.2 1107.5,836.2 1108.0,836.2 1108.5,836.2 1109.0,836.2 1109.5,836.2 1110.0,836.2 1110.5,836.2 1111.0,836.2 1111.5,836.2 1112.0,836.2 1112.5,836.2 1113.0,836.2 1113.5,836.2 1114.0,836.2 1114.5,836.2 1115.0,836.2 1115.5,836.2 1116.0,836.2 1116.5,836.2 1117.0,836.2 1117.5,836.2 1118.0,836.2 1118.5,836.2 1119.0,836.2 1119.5,836.2 1120.0,836.2 1120.5,836.2 1121.0,836.2 1121.5,836.2 1122.0,836.2 1122.5,836.2 1123.0,836.2 1123.5,836.2 1124.0,836.2 1124.5,836.2 1125.0,836.2 1125.5,836.2 1126.0,836.2 1126.5,836.2 1127.0,836.2 1127.5,836.2 1128.0,836.2 1128.5,836.2 1129.0,836.2 1129.5,836.2 1130.0,836.2 1130.5,836.2 1131.0,836.2 1131.5,836.2 1132.0,836.2 1132.5,836.2 1133.0,836.2 1133.5,836.2 1134.0,836.2 1134.5,836.2 1135.0,836.2 1135.5,836.2 1136.0,836.2 1136.5,836.2 1137.0,836.2 1137.5,836.2 1138.0,836.2 1138.5,836.2 1139.0,836.2 1139.5,836.2 1140.0,836.2 1140.5,836.2 1141.0,836.2 1141.5,836.2 1142.0,836.2 1142.5,836.2 1143.0,836.2 1143.5,836.2 1144.0,836.2 1144.5,836.2 1145.0,836.2 1145.5,836.2 1146.0,836.2 1146.5,836.2 1147.0,836.2 1147.5,836.2 1148.0,836.2 1148.5,836.2 1149.0,836.2 1149.5,836.2 1150.0,836.2 1150.5,836.2 1151.0,836.2 1151.5,836.2 1152.0,836.2 1152.5,836.2 1153.0,836.2 1153.5,836.2 1154.0,836.2 1154.5,836.2 1155.0,836.2 1155.5,836.2 1156.0,836.2 1156.5,836.2 1157.0,836.2 1157.5,836.2 1158.0,836.2 1158.5,836.2 1159.0,836.2 1159.5,836.2 1160.0,836.2 1160.5,836.2 1161.0,836.2 1161.5,836.2 1162.0,836.2 1162.5,836.2 1163.0,836.2 1163.5,836.2 1164.0,836.2 1164.5,836.2 1165.0,836.2 1165.5,836.2 1166.0,836.2 1166.5,836.2 1167.0,836.2 1167.5,836.2 1168.0,836.2 1168.5,836.2 1169.0,836.2 1169.5,836.2 1170.0,836.2 1170.5,836.2 1171.0,836.2 1171.5,836.2 1172.0,836.2 1172.5,836.2 1173.0,836.2 1173.5,836.2 1174.0,836.2 1174.5,836.2 1175.0,836.2 1175.5,836.2 1176.0,836.2 1176.5,836.2 1177.0,836.2 1177.5,836.2 1178.0,836.2 1178.5,836.2 1179.0,836.2 1179.5,836.2 1180.0,836.2 1180.5,836.2 1181.0,836.2 1181.5,836.2 1182.0,836.2 1182.5,836.2 1183.0,836.2 1183.5,836.2 1184.0,836.2 1184.5,836.2 1185.0,836.2 1185.5,836.2 1186.0,836.2 1186.5,836.2 1187.0,836.2 1187.5,836.2 1188.0,836.2 1188.5,836.2 1189.0,836.2 1189.5,836.2 1190.0,836.2 1190.5,836.2 1191.0,836.2 1191.5,836.2 1192.0,836.2 1192.5,836.2 1193.0,836.2 1193.5,836.2 1194.0,836.2 1194.5,836.2 1195.0,836.2 1195.5,836.2 1196.0,836.2 1196.5,836.2 1197.0,836.2 1197.5,836.2 1198.0,836.2 1198.5,836.2 1199.0,836.2 1199.5,836.2 1200.0,836.2 1200.5,836.2 1201.0,836.2 1201.5,836.2 1202.0,836.2 1202.5,836.2 1203.0,836.2 1203.5,836.2 1204.0,836.2 1204.5,836.2 1205.0,836.2 1205.5,836.2 1206.0,836.2 1206.5,836.2 1207.0,836.2 1207.5,836.2 1208.0,836.2 1208.5,836.2 1209.0,836.2 1209.5,836.2 1210.0,836.2 1210.5,836.2 1211.0,836.2 1211.5,836.2 1212.0,836.2 1212.5,836.2 1213.0,836.2 1213.5,836.2 1214.0,836.2 1214.5,836.2 1215.0,836.2 1215.5,836.2 1216.0,836.2 1216.5,836.2 1217.0,836.2 1217.5,836.2 1218.0,836.2 1218.5,836.2 1219.0,836.2 1219.5,836.2 1220.0,836.2 1220.5,836.2 1221.0,836.2 1221.5,836.2 1222.0,836.2 1222.5,836.2 1223.0,836.2 1223.5,836.2 1224.0,836.2 1224.5,836.2 1225.0,836.2 1225.5,836.2 1226.0,836.2 1226.5,836.2 1227.0,836.2 1227.5,836.2 1228.0,836.2 1228.5,836.2 1229.0,836.2 1229.5,836.2 1230.0,836.2 1230.5,836.2 1231.0,836.2 1231.5,836.2 1232.0,836.2 1232.5,836.2 1233.0,836.2 1233.5,836.2 1234.0,836.2 1234.5,836.2 1235.0,836.2 1235.5,836.2 1236.0,836.2 1236.5,836.2 1237.0,836.2 1237.5,836.2 1238.0,836.2 1238.5,836.2 1239.0,836.2 1239.5,836.2 1240.0,836.2 1240.5,836.2 1241.0,836.2 1241.5,836.2 1242.0,836.2 1242.5,836.2 1243.0,836.2 1243.5,836.2 1244.0,836.2 1244.5,836.2 1245.0,836.2 1245.5,836.2 1246.0,836.2 1246.5,836.2 1247.0,836.2 1247.5,836.2 1248.0,836.2 1248.5,836.2 1249.0,836.2 1249.5,836.2 1250.0,836.2 1250.5,836.2 1251.0,836.2 1251.5,836.2 1252.0,836.2 1252.5,836.2 1253.0,836.2 1253.5,836.2 1254.0,836.2 1254.5,836.2 1255.0,836.2 1255.5,836.2 1256.0,836.2 1256.5,836.2 1257.0,836.2 1257.5,836.2 1258.0,836.2 1258.5,836.2 1259.0,836.2 1259.5,836.2 1260.0,836.2 1260.5,836.2 1261.0,836.2 1261.5,836.2 1262.0,836.2 1262.4,836.2 1262.9,836.2 1263.4,836.2 1263.9,836.2 1264.4,836.2 1264.9,836.2 1265.4,836.2 1265.9,836.2 1266.4,836.2 1266.9,836.2 1267.4,836.2 1267.9,836.2 1268.4,836.2 1268.9,836.2 1269.4,836.2 1269.9,836.2 1270.4,836.2 1270.9,836.2 1271.4,836.2 1271.9,836.2 1272.4,836.2 1272.9,836.2 1273.4,836.2 1273.9,836.2 1274.4,836.2 1274.9,836.2 1275.4,836.2 1275.9,836.2 1276.4,836.2 1276.9,836.2 1277.4,836.2 1277.9,836.2 1278.4,836.2 1278.9,836.2 1279.4,836.2 1279.9,836.2 1280.4,836.2 1280.9,836.2 1281.4,836.2 1281.9,836.2 1282.4,836.2 1282.9,836.2 1283.4,836.2 1283.9,836.2 1284.4,836.2 1284.9,836.2 1285.4,836.2 1285.9,836.2 1286.4,836.2 1286.9,836.2 1287.4,836.2 1287.9,836.2 1288.4,836.2 1288.9,836.2 1289.4,836.2 1289.9,836.2 1290.4,836.2 1290.9,836.2 1291.4,836.2 1291.9,836.2 1292.4,836.2 1292.9,836.2 1293.4,836.2 1293.9,836.2 1294.4,836.2 1294.9,836.2 1295.4,836.2 1295.9,836.2 1296.4,836.2 1296.9,836.2 1297.4,836.2 1297.9,836.2 1298.4,836.2 1298.9,836.2 1299.4,836.2 1299.9,836.2 1300.4,836.2 1300.9,836.2 1301.4,836.2 1301.9,836.2 1302.4,836.2 1302.9,836.2 1303.4,836.2 1303.9,836.2 1304.4,836.2 1304.9,836.2 1305.4,836.2 1305.9,836.2 1306.4,836.2 1306.9,836.2 1307.4,836.2 1307.9,836.2 1308.4,836.2 1308.9,836.2 1309.4,836.2 1309.9,836.2 1310.4,836.2 1310.9,836.2 1311.4,836.2 1311.9,836.2 1312.4,836.2 1312.9,836.2 1313.4,836.2 1313.9,836.2 1314.4,836.2 1314.9,836.2 1315.4,836.2 1315.9,836.2 1316.4,836.2 1316.9,836.2 1317.4,836.2 1317.9,836.2 1318.4,836.2 1318.9,836.2 1319.4,836.2 1319.9,836.2 1320.4,836.2 1320.9,836.2 1321.4,836.2 1321.9,836.2 1322.4,836.2 1322.9,836.2 1323.4,836.2 1323.9,836.2 1324.4,836.2 1324.9,836.2 1325.4,836.2 1325.9,836.2 1326.4,836.2 1326.9,836.2 1327.4,836.2 1327.9,836.2 1328.4,836.2 1328.9,836.2 1329.4,836.2 1329.9,836.2 1330.4,836.2 1330.9,836.2 1331.4,836.2 1331.9,836.2 1332.4,836.2 1332.9,836.2 1333.4,836.2 1333.9,836.2 1334.4,836.2 1334.9,836.2 1335.4,836.2 1335.9,836.2 1336.4,836.2 1336.9,836.2 1337.4,836.2 1337.9,836.2 1338.4,836.2 1338.9,836.2 1339.4,836.2 1339.9,836.2 1340.4,836.2 1340.9,836.2 1341.4,836.2 1341.9,836.2 1342.4,836.2 1342.9,836.2 1343.4,836.2 1343.9,836.2 1344.4,836.2 1344.9,836.2 1345.4,836.2 1345.9,836.2 1346.4,836.2 1346.9,836.2 1347.4,836.2 1347.9,836.2 1348.4,836.2 1348.9,836.2 1349.4,836.2 1349.9,836.2 1350.4,836.2 1350.9,836.2 1351.4,836.2 1351.9,836.2 1352.4,836.2 1352.9,836.2 1353.4,836.2 1353.9,836.2 1354.4,836.2 1354.9,836.2 1355.4,836.2 1355.9,836.2 1356.4,836.2 1356.9,836.2 1357.4,836.2 1357.9,836.2 1358.4,836.2 1358.9,836.2 1359.4,836.2 1359.9,836.2 1360.4,836.2 1360.9,836.2 1361.4,836.2 1361.9,836.2 1362.4,836.2 1362.9,836.2 1363.4,836.2 1363.9,836.2 1364.4,836.2 1364.9,836.2 1365.4,836.2 1365.9,836.2 1366.4,836.2 1366.9,836.2 1367.4,836.2 1367.9,836.2 1368.4,836.2 1368.9,836.2 1369.4,836.2 1369.9,836.2 1370.4,836.2 1370.9,836.2 1371.4,836.2 1371.9,836.2 1372.4,836.2 1372.9,836.2 1373.4,836.2 1373.9,836.2 1374.4,836.2 1374.9,836.2 1375.4,836.2 1375.9,836.2 1376.4,836.2 1376.9,836.2 1377.4,836.2 1377.9,836.2 1378.4,836.2 1378.9,836.2 1379.4,836.2 1379.9,836.2 1380.4,836.2 1380.9,836.2 1381.4,836.2 1381.9,836.2 1382.4,836.2 1382.9,836.2 1383.4,836.2 1383.9,836.2 1384.4,836.2 1384.9,836.2 1385.4,836.2 1385.9,836.2 1386.4,836.2 1386.9,836.2 1386.9,836.7 1386.9,712.7" fill="none" stroke="#e02a24" stroke-width="1.6" stroke-linejoin="round" /><path d="M486.9 712.7V944.5M490.4 712.7V944.5M493.3 712.7V944.5M497.4 712.7V944.5M499.4 712.7V944.5M501.5 712.7V944.5M510.4 712.7V944.5M512.6 712.7V944.5" stroke="#f0f060" stroke-width="1.3"/><path d="M486.9 712.7V944.5M934 712.7V944.5" stroke="#f4f000" stroke-width="2.2"/><path d="M859.3 712.7V944.5M871.7 712.7V944.5M883.3 712.7V944.5M896 712.7V944.5M908.3 712.7V944.5M921 712.7V944.5M934 712.7V944.5M946.7 712.7V944.5M958.3 712.7V944.5M970.7 712.7V944.5M984 712.7V944.5M995.7 712.7V944.5M1008.3 712.7V944.5M1020.7 712.7V944.5M1032.7 712.7V944.5M1045.7 712.7V944.5" stroke="#f0f060" stroke-width="1.3"/><path d="M434 713.5H1447" stroke="#f0f000" stroke-width="2"/><path d="M484.9 715L488.9 719M488.9 715L484.9 719" stroke="#ffffa0" stroke-width="0.8"/><path d="M488.4 715L492.4 719M492.4 715L488.4 719" stroke="#ffffa0" stroke-width="0.8"/><path d="M491.3 715L495.3 719M495.3 715L491.3 719" stroke="#ffffa0" stroke-width="0.8"/><path d="M495.4 715L499.4 719M499.4 715L495.4 719" stroke="#ffffa0" stroke-width="0.8"/><path d="M497.4 715L501.4 719M501.4 715L497.4 719" stroke="#ffffa0" stroke-width="0.8"/><path d="M499.5 715L503.5 719M503.5 715L499.5 719" stroke="#ffffa0" stroke-width="0.8"/><path d="M508.4 715L512.4 719M512.4 715L508.4 719" stroke="#ffffa0" stroke-width="0.8"/><path d="M510.6 715L514.6 719M514.6 715L510.6 719" stroke="#ffffa0" stroke-width="0.8"/><path d="M857.3 715L861.3 719M861.3 715L857.3 719" stroke="#ffffa0" stroke-width="0.8"/><path d="M869.7 715L873.7 719M873.7 715L869.7 719" stroke="#ffffa0" stroke-width="0.8"/><path d="M881.3 715L885.3 719M885.3 715L881.3 719" stroke="#ffffa0" stroke-width="0.8"/><path d="M894 715L898 719M898 715L894 719" stroke="#ffffa0" stroke-width="0.8"/><path d="M906.3 715L910.3 719M910.3 715L906.3 719" stroke="#ffffa0" stroke-width="0.8"/><path d="M919 715L923 719M923 715L919 719" stroke="#ffffa0" stroke-width="0.8"/><path d="M932 715L936 719M936 715L932 719" stroke="#ffffa0" stroke-width="0.8"/><path d="M944.7 715L948.7 719M948.7 715L944.7 719" stroke="#ffffa0" stroke-width="0.8"/><path d="M956.3 715L960.3 719M960.3 715L956.3 719" stroke="#ffffa0" stroke-width="0.8"/><path d="M968.7 715L972.7 719M972.7 715L968.7 719" stroke="#ffffa0" stroke-width="0.8"/><path d="M982 715L986 719M986 715L982 719" stroke="#ffffa0" stroke-width="0.8"/><path d="M993.7 715L997.7 719M997.7 715L993.7 719" stroke="#ffffa0" stroke-width="0.8"/><path d="M1006.3 715L1010.3 719M1010.3 715L1006.3 719" stroke="#ffffa0" stroke-width="0.8"/><path d="M1018.7 715L1022.7 719M1022.7 715L1018.7 719" stroke="#ffffa0" stroke-width="0.8"/><path d="M1030.7 715L1034.7 719M1034.7 715L1030.7 719" stroke="#ffffa0" stroke-width="0.8"/><path d="M1043.7 715L1047.7 719M1047.7 715L1043.7 719" stroke="#ffffa0" stroke-width="0.8"/></g></svg>
<div class="t" style="left:376px;top:684px;font-size:12px">波形图 3</div>
<div class="a" style="left:1367px;top:676px;width:104px;height:24px;background:linear-gradient(90deg,#d6d6d6,#c8c8c8 85%,#9a9a9a);border-bottom:1px solid #a0a0a0"></div>
<div class="t" style="left:1383px;top:682px;font-size:12px">曲线 0</div>
<svg class="a" style="left:1429px;top:679px" width="29" height="18"><rect width="29" height="18" fill="#000"/><path d="M3 14 L12 4 L19 13 L26 4" stroke="#e02828" stroke-width="1.2" fill="none"/></svg>
<div class="a" style="left:370px;top:992px;width:87px;height:24px;background:linear-gradient(90deg,#d8d8d8,#c4c4c4 75%,#9c9c9c);border-bottom:1px solid #999"></div><svg class="a" style="left:382px;top:995px" width="80" height="19"><rect x="0.5" y="0.5" width="19" height="17" fill="#d0d0d0" stroke="#b0b0b0" stroke-width="0.8"/><path d="M10 3V16M3.5 9.5H16.5" stroke="#000" stroke-width="1.2"/><circle cx="10" cy="9.5" r="1.6" fill="#fff" stroke="#000" stroke-width="0.9"/><circle cx="3.5" cy="3.5" r="1" fill="#666"/><rect x="21.5" y="0.5" width="19" height="17" fill="#d0d0d0" stroke="#b0b0b0" stroke-width="0.8"/><circle cx="33" cy="7" r="3.8" fill="#fff" stroke="#000" stroke-width="1.1"/><path d="M31 7H35M33 5V9" stroke="#000" stroke-width="0.9"/><path d="M30.5 10L25 15.5" stroke="#000" stroke-width="2"/><path d="M34 13.5H38L36 16Z" fill="#000"/><circle cx="24.5" cy="3.5" r="1" fill="#666"/><rect x="42.5" y="0.5" width="19" height="17" fill="#858a85" stroke="#777" stroke-width="0.8"/><circle cx="45.5" cy="3.5" r="1.3" fill="#60d060"/><path d="M48 12 Q47 7 49 6.5 L50 9.5 L50 3.5 Q51 2.5 52 3.5 L52 8.5 L52.5 2.5 Q53.5 1.5 54.5 2.5 L54.5 8.5 L55.5 3.5 Q56.5 2.5 57.5 3.5 L57.5 11 Q57 16 53 16 Q50 16 48 12Z" fill="#fff" stroke="#000" stroke-width="0.8"/></svg>
<div class="t" style="left:354px;top:1010px;font-size:12px;color:#222">x*y 2</div>
<div class="t" style="left:1484px;top:159px;font-size:12px">dt</div>
<svg class="a" style="left:1473px;top:176px" width="12" height="24"><defs><linearGradient id="sg" x1="0" x2="1"><stop offset="0" stop-color="#c8c8c8"/><stop offset="0.4" stop-color="#ececec"/><stop offset="1" stop-color="#9a9a9a"/></linearGradient></defs><ellipse cx="6" cy="12.0" rx="5.5" ry="11.5" fill="url(#sg)" stroke="#a0a0a0" stroke-width="0.8"/><path d="M3.5 9.5L5.5 5.0L7.5 9.5M3.5 14.5L5.5 19.0L7.5 14.5" stroke="#666" stroke-width="0.9" fill="none"/><path d="M3 12.0H8" stroke="#888" stroke-width="0.8"/></svg><div class="num" style="left:1484px;top:176px;width:53px;height:24px;line-height:22px">2E-6</div>
<div class="t" style="left:1478px;top:229px;font-size:12px">波峰/波谷</div>
<svg class="a" style="left:1467px;top:247px" width="12" height="25"><defs><linearGradient id="sg" x1="0" x2="1"><stop offset="0" stop-color="#c8c8c8"/><stop offset="0.4" stop-color="#ececec"/><stop offset="1" stop-color="#9a9a9a"/></linearGradient></defs><ellipse cx="6" cy="12.5" rx="5.5" ry="12.0" fill="url(#sg)" stroke="#a0a0a0" stroke-width="0.8"/><path d="M3.5 10.0L5.5 5.5L7.5 10.0M3.5 15.0L5.5 19.5L7.5 15.0" stroke="#666" stroke-width="0.9" fill="none"/><path d="M3 12.5H8" stroke="#888" stroke-width="0.8"/></svg><div class="num" style="left:1479px;top:247px;width:51px;height:25px;line-height:23px">波峰</div>
<div class="t" style="left:1568px;top:226px;font-size:12px">阈值</div>
<svg class="a" style="left:1557px;top:247px" width="12" height="25"><defs><linearGradient id="sg" x1="0" x2="1"><stop offset="0" stop-color="#c8c8c8"/><stop offset="0.4" stop-color="#ececec"/><stop offset="1" stop-color="#9a9a9a"/></linearGradient></defs><ellipse cx="6" cy="12.5" rx="5.5" ry="12.0" fill="url(#sg)" stroke="#a0a0a0" stroke-width="0.8"/><path d="M3.5 10.0L5.5 5.5L7.5 10.0M3.5 15.0L5.5 19.5L7.5 15.0" stroke="#666" stroke-width="0.9" fill="none"/><path d="M3 12.5H8" stroke="#888" stroke-width="0.8"/></svg><div class="num" style="left:1568px;top:247px;width:105px;height:25px;line-height:23px">-1.01</div>
<div class="a" style="left:1376px;top:360px;width:193px;height:66px;background:linear-gradient(90deg,#d4d4d4,#c4c4c4 85%,#9a9a9a);border-bottom:2px solid #a0a0a0"></div>
<div class="num" style="left:1392px;top:367px;width:94px;height:21px;line-height:17px;background:#fff">时间</div>
<div class="num" style="left:1392px;top:398px;width:94px;height:21px;line-height:17px;background:#fff">幅值</div>
<svg class="a" style="left:1489px;top:364px" width="68" height="19"><rect x="0" y="0" width="21" height="18" fill="#c8c8c8" stroke="#a0a0a0" stroke-width="0.6"/><rect x="7" y="8" width="7" height="6" fill="#000"/><path d="M8.5 8V5.5A2 2 0 0 1 12.5 5.5V8" stroke="#000" fill="none" stroke-width="1.3"/><rect x="9" y="9.5" width="3" height="3" fill="#fff"/><rect x="22" y="0" width="21" height="18" fill="#c8c8c8" stroke="#a0a0a0" stroke-width="0.6"/><path d="M27 4V14H38M27 14L24 17" stroke="#000" fill="none" stroke-width="1"/><text x="32" y="10" font-size="9">X</text><circle cx="25" cy="4" r="1.2" fill="#4a4"/><rect x="45" y="0" width="22" height="18" fill="#c8c8c8" stroke="#a0a0a0" stroke-width="0.6"/><text x="47" y="10" font-size="8" font-family="Liberation Mono">x.xx</text><path d="M59 12H65L62 15Z" fill="#000"/></svg>
<svg class="a" style="left:1489px;top:394px" width="68" height="19"><rect x="0" y="0" width="21" height="18" fill="#c8c8c8" stroke="#a0a0a0" stroke-width="0.6"/><rect x="7" y="8" width="7" height="6" fill="#000"/><path d="M8.5 8V5.5A2 2 0 0 1 12.5 5.5V8" stroke="#000" fill="none" stroke-width="1.3"/><rect x="9" y="9.5" width="3" height="3" fill="#fff"/><rect x="22" y="0" width="21" height="18" fill="#c8c8c8" stroke="#a0a0a0" stroke-width="0.6"/><path d="M27 4V14H38M27 14L24 17" stroke="#000" fill="none" stroke-width="1"/><text x="32" y="10" font-size="9">Y</text><circle cx="25" cy="4" r="1.2" fill="#4a4"/><rect x="45" y="0" width="22" height="18" fill="#c8c8c8" stroke="#a0a0a0" stroke-width="0.6"/><text x="47" y="10" font-size="8" font-family="Liberation Mono">y.yy</text><path d="M59 12H65L62 15Z" fill="#000"/></svg>
<div class="t" style="left:1388px;top:430px;font-size:12px">找到个数</div>
<div class="ind" style="left:1387px;top:449px;width:51px;height:23px">18</div>
<div class="t" style="left:1400px;top:505px;font-size:12px">宽度</div>
<svg class="a" style="left:1389px;top:524px" width="12" height="25"><defs><linearGradient id="sg" x1="0" x2="1"><stop offset="0" stop-color="#c8c8c8"/><stop offset="0.4" stop-color="#ececec"/><stop offset="1" stop-color="#9a9a9a"/></linearGradient></defs><ellipse cx="6" cy="12.5" rx="5.5" ry="12.0" fill="url(#sg)" stroke="#a0a0a0" stroke-width="0.8"/><path d="M3.5 10.0L5.5 5.5L7.5 10.0M3.5 15.0L5.5 19.5L7.5 15.0" stroke="#666" stroke-width="0.9" fill="none"/><path d="M3 12.5H8" stroke="#888" stroke-width="0.8"/></svg><div class="num" style="left:1401px;top:524px;width:50px;height:25px;line-height:23px">3</div>
<div class="t" style="left:1604px;top:327px;font-size:12px">数值 2</div>
<svg class="a" style="left:1593px;top:344px" width="12" height="23"><defs><linearGradient id="sg" x1="0" x2="1"><stop offset="0" stop-color="#c8c8c8"/><stop offset="0.4" stop-color="#ececec"/><stop offset="1" stop-color="#9a9a9a"/></linearGradient></defs><ellipse cx="6" cy="11.5" rx="5.5" ry="11.0" fill="url(#sg)" stroke="#a0a0a0" stroke-width="0.8"/><path d="M3.5 9.0L5.5 4.5L7.5 9.0M3.5 14.0L5.5 18.5L7.5 14.0" stroke="#666" stroke-width="0.9" fill="none"/><path d="M3 11.5H8" stroke="#888" stroke-width="0.8"/></svg><div class="num" style="left:1604px;top:344px;width:117px;height:23px;line-height:21px">0.00135674</div>
<div class="t" style="left:1616px;top:399px;font-size:12px">数值</div>
<svg class="a" style="left:1605px;top:416px" width="12" height="24"><defs><linearGradient id="sg" x1="0" x2="1"><stop offset="0" stop-color="#c8c8c8"/><stop offset="0.4" stop-color="#ececec"/><stop offset="1" stop-color="#9a9a9a"/></linearGradient></defs><ellipse cx="6" cy="12.0" rx="5.5" ry="11.5" fill="url(#sg)" stroke="#a0a0a0" stroke-width="0.8"/><path d="M3.5 9.5L5.5 5.0L7.5 9.5M3.5 14.5L5.5 19.0L7.5 14.5" stroke="#666" stroke-width="0.9" fill="none"/><path d="M3 12.0H8" stroke="#888" stroke-width="0.8"/></svg><div class="num" style="left:1617px;top:416px;width:140px;height:24px;line-height:22px">0.000921735</div>
<div class="t" style="left:1592px;top:457px;font-size:12px">x/y</div>
<div class="ind" style="left:1591px;top:473px;width:142px;height:23px">-335.628</div>
<div class="t" style="left:1508px;top:730px;font-size:12px">波峰/波谷</div>
<svg class="a" style="left:1497px;top:750px" width="12" height="23"><defs><linearGradient id="sg" x1="0" x2="1"><stop offset="0" stop-color="#c8c8c8"/><stop offset="0.4" stop-color="#ececec"/><stop offset="1" stop-color="#9a9a9a"/></linearGradient></defs><ellipse cx="6" cy="11.5" rx="5.5" ry="11.0" fill="url(#sg)" stroke="#a0a0a0" stroke-width="0.8"/><path d="M3.5 9.0L5.5 4.5L7.5 9.0M3.5 14.0L5.5 18.5L7.5 14.0" stroke="#666" stroke-width="0.9" fill="none"/><path d="M3 11.5H8" stroke="#888" stroke-width="0.8"/></svg><div class="num" style="left:1509px;top:750px;width:51px;height:23px;line-height:21px">波峰</div>
<div class="t" style="left:1592px;top:730px;font-size:12px">阈值</div>
<svg class="a" style="left:1581px;top:750px" width="12" height="23"><defs><linearGradient id="sg" x1="0" x2="1"><stop offset="0" stop-color="#c8c8c8"/><stop offset="0.4" stop-color="#ececec"/><stop offset="1" stop-color="#9a9a9a"/></linearGradient></defs><ellipse cx="6" cy="11.5" rx="5.5" ry="11.0" fill="url(#sg)" stroke="#a0a0a0" stroke-width="0.8"/><path d="M3.5 9.0L5.5 4.5L7.5 9.0M3.5 14.0L5.5 18.5L7.5 14.0" stroke="#666" stroke-width="0.9" fill="none"/><path d="M3 11.5H8" stroke="#888" stroke-width="0.8"/></svg><div class="num" style="left:1592px;top:750px;width:93px;height:23px;line-height:21px">-400.00m</div>
<div class="t" style="left:1484px;top:805px;font-size:12px">找到个数</div>
<div class="ind" style="left:1484px;top:824px;width:52px;height:24px">16</div>
<div class="a" style="left:1472px;top:884px;width:231px;height:107px;background:linear-gradient(90deg,#cfcfcf,#c4c4c4 88%,#9a9a9a);border-bottom:2px solid #a0a0a0"></div>
<div class="a" style="left:1485px;top:894px;width:204px;height:86px;background:#c8c8c8;border:1px solid #a0a0a0"></div>
<div class="a" style="left:1485px;top:895px;width:187px;height:16px;background:linear-gradient(#d8d8d8,#bcbcbc)"></div>
<div class="a" style="left:1584px;top:895px;width:1px;height:69px;background:#999"></div><div class="a" style="left:1629px;top:895px;width:1px;height:69px;background:#999"></div>
<div class="t" style="left:1489px;top:895px;font-size:12px;font-weight:bold">游标:</div>
<div class="t" style="left:1589px;top:895px;font-size:12px;font-weight:bold">X</div>
<div class="t" style="left:1634px;top:895px;font-size:12px;font-weight:bold">Y</div>
<div class="a" style="left:1485px;top:911px;width:187px;height:53px;background:#fff"></div>
<div class="a" style="left:1584px;top:911px;width:1px;height:53px;background:#bbb"></div><div class="a" style="left:1629px;top:911px;width:1px;height:53px;background:#bbb"></div>
<svg class="a" style="left:1503px;top:913px" width="17" height="16"><rect width="17" height="16" fill="#000"/><path d="M8.5 0V16M0 8H17" stroke="#e0e040" stroke-width="1"/><path d="M5 4L12 12M12 4L5 12" stroke="#e0e040" stroke-width="0.8"/></svg>
<div class="t" style="left:1522px;top:913px;font-size:12px;background:#ffff20;padding:0 1px">游标0</div>
<div class="t" style="left:1588px;top:914px;font-size:12px">0.0009</div>
<div class="t" style="left:1634px;top:914px;font-size:12px">0</div>
<svg class="a" style="left:1503px;top:931px" width="17" height="16"><rect width="17" height="16" fill="#000"/><path d="M8.5 0V16M0 8H17" stroke="#e0e040" stroke-width="1"/><path d="M5 4L12 12M12 4L5 12" stroke="#e0e040" stroke-width="0.8"/></svg>
<div class="t" style="left:1522px;top:931px;font-size:12px;padding:0 1px">游标1</div>
<div class="t" style="left:1588px;top:932px;font-size:12px">0.0009</div>
<div class="t" style="left:1634px;top:932px;font-size:12px">0</div>
<svg class="a" style="left:1503px;top:949px" width="17" height="16"><rect width="17" height="16" fill="#000"/><path d="M8.5 0V16M0 8H17" stroke="#e0e040" stroke-width="1"/><path d="M5 4L12 12M12 4L5 12" stroke="#e0e040" stroke-width="0.8"/></svg>
<div class="t" style="left:1522px;top:949px;font-size:12px;padding:0 1px">游标2</div>
<div class="t" style="left:1588px;top:950px;font-size:12px">0.0009</div>
<div class="t" style="left:1634px;top:950px;font-size:12px">0</div>
<div class="a" style="left:1672px;top:895px;width:16px;height:69px;background:#d4d4d4"></div>
<div class="a" style="left:1672px;top:914px;width:16px;height:14px;background:#bdbdbd;border:1px solid #999"></div>
<svg class="a" style="left:1672px;top:895px" width="16" height="69"><path d="M4 12L8 5L12 12Z M4 57L8 64L12 57Z" fill="#000"/></svg>
<div class="a" style="left:1485px;top:964px;width:187px;height:16px;background:#c4c4c4"></div>
<svg class="a" style="left:1485px;top:964px" width="187" height="16"><rect x="16" y="1" width="154" height="14" fill="#bcbcbc"/><path d="M11 4L5 8L11 12Z M170 4L176 8L170 12Z" fill="#000"/></svg>
<div class="a" style="left:1704px;top:884px;width:58px;height:34px;background:linear-gradient(90deg,#d4d4d4,#c4c4c4 80%,#9a9a9a);border-bottom:1px solid #999"></div>
<svg class="a" style="left:1716px;top:885px" width="32" height="32"><path d="M16 2L30 16L16 30L2 16Z M9 9L23 23 M23 9L9 23" stroke="#000" fill="none" stroke-width="1"/></svg>
<div class="t" style="left:55px;top:372px;font-size:12px">文件路径</div><div class="t" style="left:114px;top:372px;font-size:12px">(空时为对话框)</div>
<div class="a" style="left:56px;top:391px;width:243px;height:68px;background:#e8e8e8"></div>
<div class="a" style="left:56px;top:393px;width:12px;height:64px;background:linear-gradient(90deg,#a8a8a8,#c4c4c4)"></div>
<div class="a" style="left:67px;top:395px;width:230px;height:61px;background:#fafafa;border-top:2px solid #b4b4b4"></div>
<div class="t" style="left:70px;top:398px;font-size:13.6px">C:\Users\Administrator\Desktop\</div>
<div class="t" style="left:70px;top:415px;font-size:13.6px">数据1比11.csv</div>
<svg class="a" style="left:59px;top:419px" width="8" height="12"><path d="M1.5 1.5H4.5V5.5M3.5 5.5H6.5V10.5H3.5Z" stroke="#000" fill="none"/></svg>
<div class="a" style="left:304px;top:392px;width:28px;height:16px;background:linear-gradient(#dadada,#b0b0b0);border:1px solid #999"></div>
<svg class="a" style="left:310px;top:394px" width="16" height="12"><path d="M1 2H6L7 3H13V10H1Z" fill="#333"/><path d="M3 5H15L13 10H1Z" fill="#f0e040" stroke="#333" stroke-width="0.8"/></svg>
<svg class="a" style="left:161px;top:198px" width="16" height="16"><path d="M7.5 1V14M1 7.5H14" stroke="#000"/><circle cx="12" cy="3" r="1" fill="none" stroke="#000" stroke-width="0.6"/></svg>
<div class="a" style="left:1901px;top:71px;width:19px;height:951px;background:#f0f0f0"></div>
<div class="a" style="left:1901px;top:71px;width:1px;height:951px;background:#fff"></div>
<div class="a" style="left:1903px;top:232px;width:14px;height:595px;background:#cdcdcd"></div>
<svg class="a" style="left:1901px;top:71px" width="19" height="951"><path d="M5 13L9.5 8.5L14 13" stroke="#606060" stroke-width="1.5" fill="none"/><path d="M5.5 938.5L9.5 942.5L13.5 938.5" stroke="#505050" stroke-width="1.8" fill="none"/></svg>
<div class="a" style="left:2px;top:1022px;width:1918px;height:17px;background:#f0f0f0"></div>
<div class="a" style="left:216px;top:1023px;width:887px;height:14px;background:#cdcdcd"></div>
<svg class="a" style="left:0;top:1022px" width="1920" height="17"><path d="M13 4L8.5 8.5L13 13" stroke="#606060" stroke-width="1.5" fill="none"/><path d="M1890 4L1894.5 8.5L1890 13" stroke="#606060" stroke-width="1.5" fill="none"/></svg>
<div class="a" style="left:0;top:1016px;width:352px;height:5px;background:rgba(232,232,232,0.7)"></div><div class="a" style="left:392px;top:1016px;width:1509px;height:5px;background:rgba(232,232,232,0.7)"></div><div class="a" style="left:0;top:1021px;width:1901px;height:1px;background:#fafafa"></div>
<div class="a" style="left:0;top:1038px;width:1920px;height:1px;background:#5a5a5a"></div><div class="a" style="left:0;top:1039px;width:1920px;height:1px;background:#c8c8c8"></div>
<div class="a" style="left:1918px;top:24px;width:1px;height:1015px;background:#6a6a6a"></div>
<svg class="a" style="left:1735px;top:940px" width="130" height="70"><defs><linearGradient id="arcg" x1="0" y1="0" x2="0" y2="1"><stop offset="0" stop-color="#40c8a8"/><stop offset="1" stop-color="#d0d040"/></linearGradient></defs><rect x="6" y="14" width="90" height="42" rx="21" fill="#2c2f34"/><circle cx="95.5" cy="35" r="29.5" fill="#3b3f47" stroke="#2a2d33" stroke-width="1.5"/><path d="M96 7.5 A27.5 27.5 0 1 1 73 50" stroke="url(#arcg)" stroke-width="1.8" fill="none"/><text x="77" y="45" font-size="24" fill="#f0f0f0">65</text><text x="106" y="46" font-size="10" fill="#e8e8e8">%</text><path d="M20 29V23M17.5 25.5L20 22.5L22.5 25.5" stroke="#50b8d8" stroke-width="1.6" fill="none"/><path d="M20 42V48M17.5 45.5L20 48.5L22.5 45.5" stroke="#40b070" stroke-width="1.8" fill="none"/><text x="38" y="29" font-size="12" fill="#f2f2f2">0</text><text x="46" y="29" font-size="10" fill="#c8c8c8">K/s</text><text x="29" y="49" font-size="12" fill="#f2f2f2">2.5</text><text x="46" y="49" font-size="10" fill="#c8c8c8">K/s</text></svg>
<div class="a" style="left:0;top:1040px;width:1920px;height:40px;background:linear-gradient(90deg,#213843 0%,#1f3442 30%,#1c2b40 70%,#1c2a42 100%)"></div>
<svg class="a" style="left:0;top:1040px" width="48" height="40"><path d="M16 13L23 12V19H16Z M24 12L32 11V19H24Z M16 20H23V27L16 26Z M24 20H32V28L24 27Z" fill="#fff"/></svg>
<div class="a" style="left:48px;top:1040px;width:344px;height:40px;background:#f0f0f0"></div>
<svg class="a" style="left:58px;top:1049px" width="22" height="22"><circle cx="12" cy="9" r="6" fill="none" stroke="#222" stroke-width="1.6"/><path d="M8 13L2 19" stroke="#222" stroke-width="1.8"/></svg>
<div class="t" style="left:88px;top:1052px;font-size:14px;color:#333">在这里输入你要搜索的内容</div>
<svg class="a" style="left:392px;top:1040px" width="450" height="40"><circle cx="24" cy="19.5" r="7.5" fill="none" stroke="#fff" stroke-width="2"/><path d="M63 12H73V27H63Z" fill="none" stroke="#fff" stroke-width="1.5"/><path d="M61 12H75M61 27H75M77 11V14M77 17V21M77 24V27" stroke="#fff" stroke-width="1.5"/><path d="M113 12H122L124 14H134V28H113Z" fill="#f0c040"/><rect x="113" y="17" width="21" height="11" fill="#f8d870"/><rect x="119" y="22" width="9" height="6" fill="#3a8ad8"/><path d="M161 15H183V31H161Z" fill="#f4f4f4"/><path d="M166 15V11A6 5 0 0 1 178 11V15" stroke="#f4f4f4" stroke-width="1.8" fill="none"/><rect x="168" y="19" width="4" height="4" fill="#f25022"/><rect x="173" y="19" width="4" height="4" fill="#7fba00"/><rect x="168" y="24" width="4" height="4" fill="#00a4ef"/><rect x="173" y="24" width="4" height="4" fill="#ffb900"/><path d="M230 21 A10 10 0 1 0 228 26 L223 26 A5 5 0 0 1 214 22 H230Z M214 19 A5 5 0 0 1 224 18Z" fill="#1a80d8"/><rect x="260" y="9" width="21" height="21" rx="3" fill="#2a88e8"/><path d="M263 15L266 24L270 17L274 24L278 15" stroke="#fff" stroke-width="2" fill="none"/><rect x="295" y="0" width="45" height="40" fill="#3c4c58"/><path d="M309 11L329 19.5L309 28Z" fill="#f2d000"/><path d="M304 15H310M304 24H310M328 19.5H334" stroke="#ddd" stroke-width="1"/><text x="320" y="30" font-size="6" fill="#ccc">18</text><circle cx="368" cy="19.5" r="10.5" fill="#d8d0b8"/><circle cx="366" cy="17" r="6" fill="#f0ece0"/><rect x="405" y="10" width="19" height="20" fill="#f0e8e0"/><rect x="406" y="12" width="16" height="16" fill="#fff"/><circle cx="412" cy="22" r="3" fill="#e86030"/><rect x="417" y="15" width="3" height="10" fill="#e86030"/><rect x="103" y="38" width="40" height="2" fill="#76b9ed"/><rect x="201" y="38" width="40" height="2" fill="#76b9ed"/><rect x="250" y="38" width="39" height="2" fill="#76b9ed"/><rect x="295" y="38" width="44" height="2" fill="#76b9ed"/><rect x="348" y="38" width="40" height="2" fill="#76b9ed"/><rect x="396" y="38" width="40" height="2" fill="#76b9ed"/></svg>
<svg class="a" style="left:1495px;top:1039px" width="425" height="40"><rect x="8" y="11" width="14" height="16" fill="#fff"/><text x="9" y="24" font-size="11" fill="#000">拼</text><text x="28" y="25.5" font-size="17" fill="#fff">英</text><path d="M56 12.5 A7 7 0 1 1 52 25 A6 6 0 0 0 56 12.5Z" fill="none" stroke="#fff" stroke-width="1.2"/><circle cx="72" cy="16" r="1.8" fill="#fff"/><path d="M79 22L76 27" stroke="#fff" stroke-width="2"/><text x="88" y="25.5" font-size="16" fill="#fff">简</text><circle cx="117" cy="19" r="5" fill="none" stroke="#fff" stroke-width="2.2" stroke-dasharray="2 1.4"/><circle cx="117" cy="19" r="2.2" fill="none" stroke="#fff" stroke-width="1.2"/><path d="M154 23L160 17L166 23" stroke="#fff" stroke-width="1.3" fill="none"/><rect x="179" y="11" width="7" height="13" rx="3.5" fill="#fff"/><path d="M182.5 24V29M179 29H186" stroke="#fff"/><circle cx="209" cy="18" r="6" fill="#222"/><circle cx="209" cy="21" r="4" fill="#fff"/><circle cx="212" cy="25" r="5" fill="#e03030"/><path d="M203 17L207 19" stroke="#f0a020" stroke-width="2"/><path d="M223 14H239V25H223Z" fill="none" stroke="#fff" stroke-width="1.3"/><path d="M231 25V29M226 29H236" stroke="#fff" stroke-width="1.3"/><rect x="222" y="12" width="5" height="5" fill="#1c2a42" stroke="#fff"/><path d="M248 16H251L256 12V27L251 23H248Z" fill="none" stroke="#fff" stroke-width="1.3"/><path d="M259 15Q262 19.5 259 24M262 13Q266 19.5 262 26" stroke="#fff" stroke-width="1.2" fill="none"/><rect x="272" y="13" width="22" height="12" fill="none" stroke="#fff" stroke-width="1.3"/><path d="M275 17H291M275 20H291M278 23H288" stroke="#fff" stroke-width="1" stroke-dasharray="1.5 1"/><text x="335.5" y="16" font-size="13.5" fill="#fff" text-anchor="middle">20:56</text><text x="335" y="35" font-size="13.5" fill="#fff" text-anchor="middle">2020/9/8</text><path d="M391 12H405V25H399L396 28V25H391Z" fill="#fff"/><path d="M394 16H402M394 19H402M394 22H399" stroke="#1c2a42"/><rect x="420" y="0" width="1" height="40" fill="#7a8aa0"/></svg>
</body></html>
